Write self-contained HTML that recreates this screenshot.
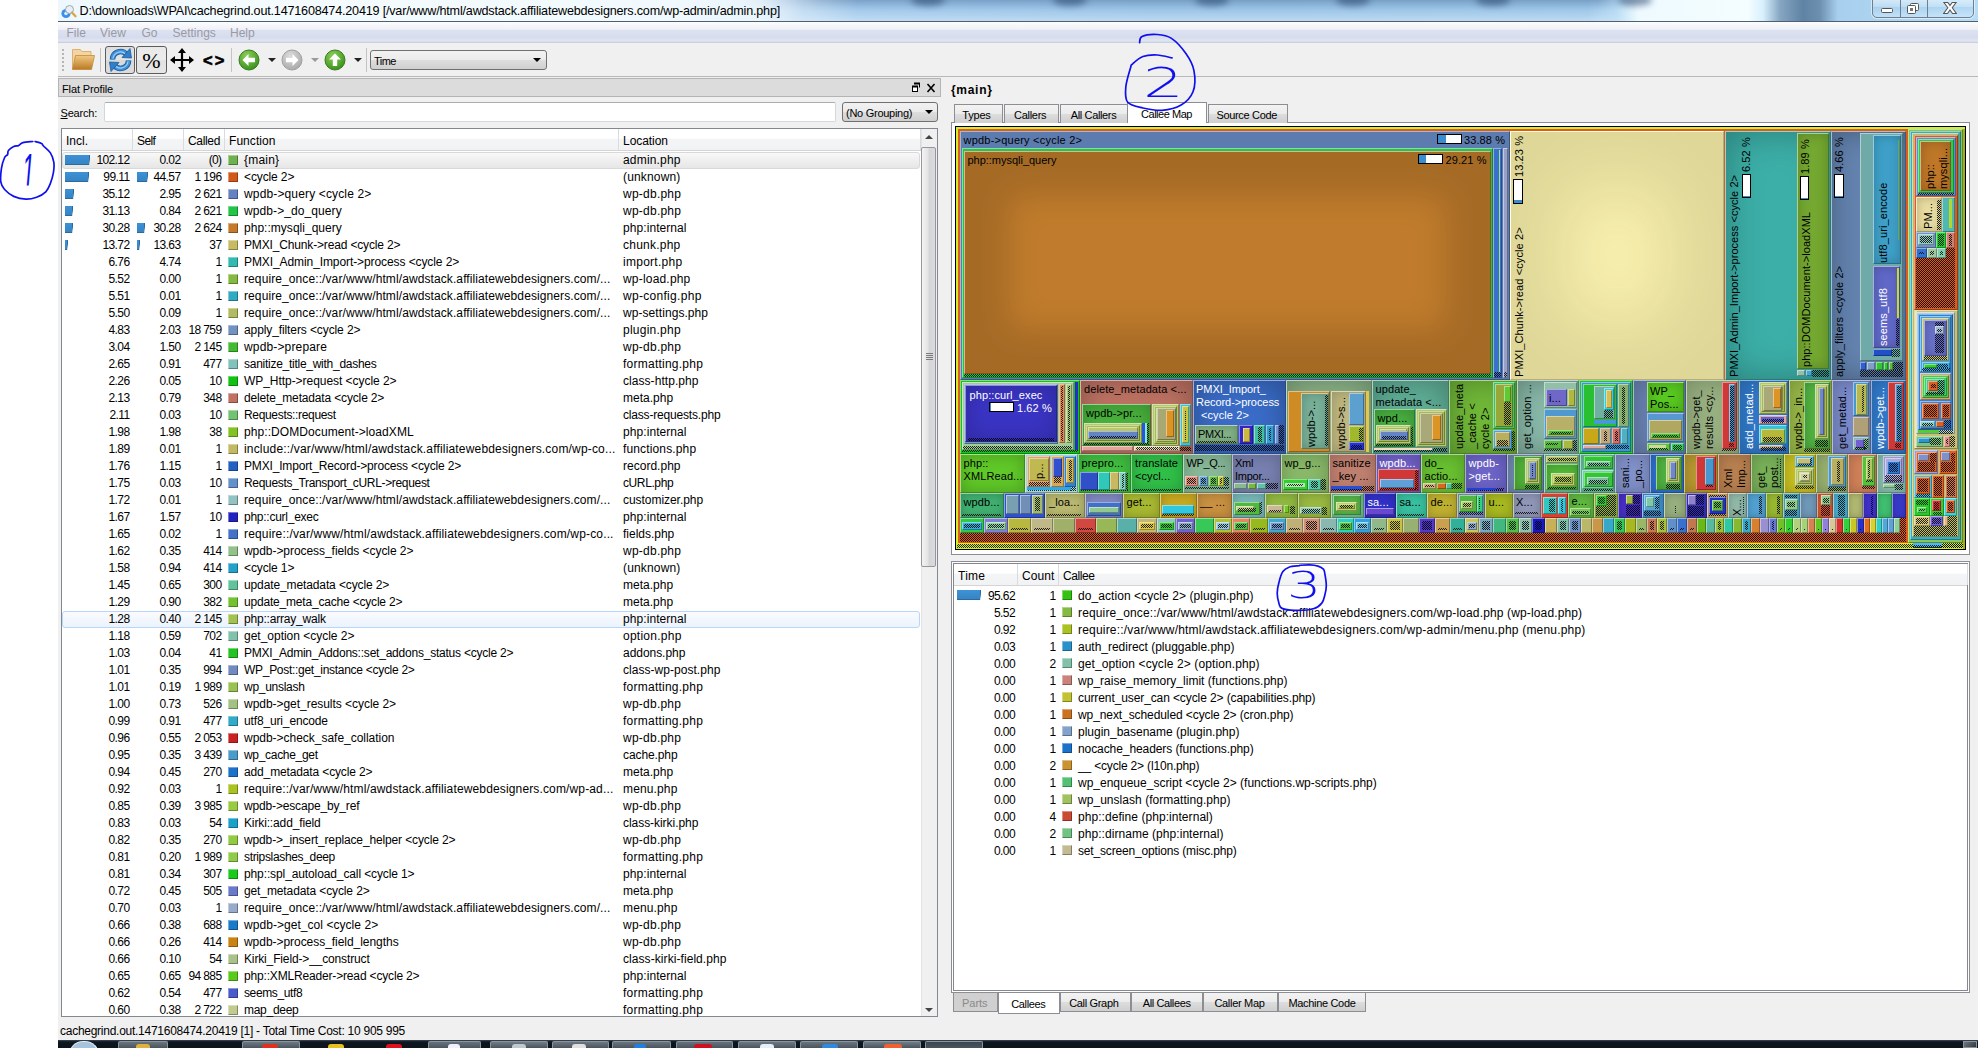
<!DOCTYPE html><html><head><meta charset="utf-8"><title>QCachegrind</title><style>
*{box-sizing:border-box;margin:0;padding:0}
html,body{width:1978px;height:1048px;overflow:hidden;background:#fff}
body{position:relative;font-family:"Liberation Sans",sans-serif;font-size:12px;color:#000}
.a{position:absolute}
.t{position:absolute;white-space:nowrap;line-height:17px;height:17px}
.r{text-align:right}
#win{position:absolute;left:58px;top:0;width:1920px;height:1040px;background:#f0f0f0}
.sq{position:absolute;width:10px;height:10px}
.bar{position:absolute;height:10px;background:linear-gradient(#3d92d6,#3684c4);border-right:1px solid #2a6a9c;border-bottom:1px solid #2a6a9c;clip-path:polygon(0 0,100% 0,100% 40%,calc(100% - 1px) 100%,0 100%)}
.lt{font-size:12px;letter-spacing:-0.6px}
.rw{margin-top:1px}
.tab{position:absolute;font-size:11px;text-align:center;border:1px solid #8c8e94;border-bottom:none;background:linear-gradient(#f3f3f3 0%,#ebebeb 50%,#dddddd 51%,#cfcfcf 100%);line-height:17px;white-space:nowrap}
.tabs{background:#fff;border-color:#8c8e94}
.btab{position:absolute;font-size:11px;text-align:center;border:1px solid #8c8e94;border-top:none;background:linear-gradient(#f3f3f3 0%,#ebebeb 50%,#dddddd 51%,#cfcfcf 100%);line-height:17px;white-space:nowrap}
.hd{position:absolute;top:0;height:21px;border-right:1px solid #d9dbe0;background:linear-gradient(#ffffff,#ffffff 45%,#f4f5f7 46%,#f1f2f4);line-height:24px;padding-left:4px;font-size:12px;overflow:hidden}
.hx{background:repeating-conic-gradient(rgba(0,0,0,.82) 0 25%,rgba(0,0,0,0) 0 50%) 0 0/2px 2px}
.tl{position:absolute;white-space:nowrap;font-size:11px;line-height:13px}
.vt{position:absolute;white-space:nowrap;font-size:11px;line-height:13px;transform-origin:0 0;transform:rotate(-90deg)}
</style></head><body>
<div id="win">
<div class="a" style="left:0;top:0;width:1920px;height:21px;background:linear-gradient(90deg,#d2ecfa 0px,#e2f5fd 200px,#dcf1fc 600px,#c8e4f7 700px,#a8ceee 745px,#a0c8ea 1100px,#a2caea 1530px,#b8dcf4 1558px,#eefaff 1580px,#f4fdff 1690px,#d8f0fc 1705px,#86a6c2 1722px,#5f83a4 1745px,#6d90b0 1762px,#a8d0ee 1780px,#b6dcf6 1920px)"></div>
<div class="a" style="left:680px;top:0;width:900px;height:21px;background:linear-gradient(180deg,rgba(70,110,155,.45) 0,rgba(90,130,175,.18) 7px,rgba(255,255,255,0) 11px,rgba(255,255,255,.28) 20px);-webkit-mask-image:linear-gradient(90deg,transparent,#000 80px,#000 860px,transparent);mask-image:linear-gradient(90deg,transparent,#000 80px,#000 860px,transparent)"></div>
<div class="a" style="left:0;top:0;width:820px;height:21px;background:linear-gradient(90deg,rgba(255,255,255,.6) 0,rgba(255,255,255,.6) 700px,rgba(255,255,255,0) 800px)"></div>
<div class="a" style="left:853px;top:-6px;width:34px;height:12px;border-radius:50%;background:rgba(40,70,110,.55);filter:blur(3px)"></div>
<div class="a" style="left:995px;top:-6px;width:34px;height:12px;border-radius:50%;background:rgba(40,70,110,.55);filter:blur(3px)"></div>
<div class="a" style="left:1137px;top:-6px;width:34px;height:12px;border-radius:50%;background:rgba(40,70,110,.55);filter:blur(3px)"></div>
<div class="a" style="left:1278px;top:-6px;width:34px;height:12px;border-radius:50%;background:rgba(40,70,110,.55);filter:blur(3px)"></div>
<div class="a" style="left:1418px;top:-6px;width:34px;height:12px;border-radius:50%;background:rgba(40,70,110,.55);filter:blur(3px)"></div>
<div class="a" style="left:1560px;top:-6px;width:34px;height:12px;border-radius:50%;background:rgba(40,70,110,.55);filter:blur(3px)"></div>
<div class="a" style="left:0;top:21px;width:1920px;height:1px;background:#4f5f70"></div>
<svg class="a" style="left:2px;top:3px" width="17" height="17" viewBox="0 0 17 17"><circle cx="6" cy="10.5" r="4.6" fill="#3b8fe8"/><circle cx="6" cy="10.5" r="1.8" fill="#d6ecff"/><circle cx="9.5" cy="6.5" r="4" fill="#e8eef4" stroke="#9aa8b8" stroke-width="1"/><path d="M12 9.5l3.5 3.8" stroke="#d9a441" stroke-width="2.2" stroke-linecap="round"/></svg>
<div class="t" id="title" style="left:21.500px;top:3px;font-size:12.600px;letter-spacing:-0.192px;">D:\downloads\WPAI\cachegrind.out.1471608474.20419 [/var/www/html/awdstack.affiliatewebdesigners.com/wp-admin/admin.php]</div>
<div class="a" style="left:1814px;top:-3px;width:102px;height:21px;border:1px solid #6e7f90;border-radius:0 0 5px 5px;background:linear-gradient(rgba(255,255,255,.55),rgba(255,255,255,.2) 45%,rgba(160,200,230,.25) 50%,rgba(220,240,255,.45));box-shadow:0 0 0 1px rgba(255,255,255,.5)"></div>
<div class="a" style="left:1842px;top:0;width:1px;height:17px;background:#6e7f90"></div><div class="a" style="left:1869px;top:0;width:1px;height:17px;background:#6e7f90"></div>
<svg class="a" style="left:1814px;top:0" width="102" height="18" viewBox="0 0 102 18"><rect x="9.500" y="8.500" width="11" height="4" rx="1" fill="#fff" stroke="#555" stroke-width="1"/><rect x="38.500" y="3.500" width="8" height="7" rx="1" fill="#fff" stroke="#555" stroke-width="1"/><rect x="35.500" y="5.500" width="8" height="8" rx="1" fill="#fff" stroke="#555" stroke-width="1"/><rect x="38" y="8" width="3" height="3" fill="#777"/></svg>
<div class="t" style="left:1887px;top:-1px;font-size:15px;font-weight:bold;line-height:18px;height:18px;color:#fff;-webkit-text-stroke:2px #555;paint-order:stroke fill;transform:scaleX(1.1)">X</div>
<div class="a" style="left:0;top:22px;width:1920px;height:21px;background:linear-gradient(#fdfdfe 0,#eef1f8 35%,#dde2f0 40%,#d6dcee 75%,#e2e6f2 90%,#c4c9da 100%)"></div>
<div class="t" style="left:8.5px;top:25px;color:#9a9aa2;font-size:12px">File</div>
<div class="t" style="left:42px;top:25px;color:#9a9aa2;font-size:12px">View</div>
<div class="t" style="left:83.5px;top:25px;color:#9a9aa2;font-size:12px">Go</div>
<div class="t" style="left:114.5px;top:25px;color:#9a9aa2;font-size:12px">Settings</div>
<div class="t" style="left:172px;top:25px;color:#9a9aa2;font-size:12px">Help</div>
<div class="a" style="left:0;top:43px;width:1920px;height:33px;background:#f0f0f0"></div>
<div class="a" style="left:0;top:76px;width:1920px;height:1px;background:#b8b8b8"></div>
<div class="a" style="left:4px;top:47px;width:2px;height:26px;background:repeating-linear-gradient(#f0f0f0 0,#f0f0f0 2px,#b4b4b4 2px,#b4b4b4 4px)"></div>
<svg class="a" style="left:12px;top:46px" width="26" height="26" viewBox="0 0 26 26"><defs><linearGradient id="fg" x1="0" y1="0" x2="0" y2="1"><stop offset="0" stop-color="#f3c982"/><stop offset="1" stop-color="#b97a24"/></linearGradient></defs><path d="M2.500 23V3.500h8l1.500 2h9v5" fill="#f2d5a2" stroke="#dcb172" stroke-width="1"/><path d="M2.500 23.500L5.500 9.500H24.500L21.500 23.500z" fill="url(#fg)" stroke="#c08a3a" stroke-width=".8"/></svg>
<div class="a" style="left:42px;top:48px;width:1px;height:24px;background:#c4c4c4"></div>
<div class="a" style="left:47px;top:46px;width:30px;height:28px;border:1px solid #5c5c5c;border-radius:3px;background:linear-gradient(#dedede,#e4e4e4 50%,#d9d9d9 51%,#dcdcdc)"></div>
<svg class="a" style="left:50px;top:47px" width="25" height="26" viewBox="0 0 25 26"><g fill="none" stroke-linecap="butt"><path d="M4.500 12.500a8 8 0 0 1 14-5.200" stroke="#1d5c9a" stroke-width="5.600"/><path d="M20.500 13.500a8 8 0 0 1-14 5.200" stroke="#1d5c9a" stroke-width="5.600"/><path d="M4.500 12.500a8 8 0 0 1 14-5.200" stroke="#3f92dc" stroke-width="3.800"/><path d="M20.500 13.500a8 8 0 0 1-14 5.200" stroke="#3f92dc" stroke-width="3.800"/><path d="M5 11.500a7.500 7.500 0 0 1 12.500-4.500" stroke="#9ccff6" stroke-width="1.200"/><path d="M20 14.500a7.500 7.500 0 0 1-12.500 4.500" stroke="#9ccff6" stroke-width="1.200"/></g><path d="M14 10.500l9.500 0.500-1.500-9.500z" fill="#2f7fca" stroke="#1d5c9a" stroke-width=".8"/><path d="M11 15.500l-9.500-0.500 1.500 9.500z" fill="#2f7fca" stroke="#1d5c9a" stroke-width=".8"/></svg>
<div class="a" style="left:78px;top:46px;width:31px;height:28px;border:1px solid #5c5c5c;border-radius:3px;background:linear-gradient(#e9e9e9,#ececec 50%,#e2e2e2 51%,#e6e6e6)"></div>
<div class="t" style="left:78px;top:51px;width:31px;text-align:center;font-size:22px;line-height:20px;height:20px;font-family:'Liberation Serif',serif">%</div>
<svg class="a" style="left:112px;top:48px" width="24" height="24" viewBox="0 0 24 24"><path d="M12 2v20M2 12h20" stroke="#000" stroke-width="2.200"/><path d="M12 0l4 5h-8zM12 24l4-5h-8zM0 12l5-4v8zM24 12l-5-4v8z" fill="#000"/></svg>
<div class="t" id="ltgt" style="left:145px;top:49.500px;font-size:16.500px;font-weight:bold;line-height:20px;height:20px;letter-spacing:2.200px;-webkit-text-stroke:0.600px #000">&lt;&gt;</div>
<div class="a" style="left:173px;top:48px;width:1px;height:24px;background:#c4c4c4"></div>
<svg class="a" style="left:180px;top:49px" width="22" height="22" viewBox="0 0 22 22"><defs><radialGradient id="g191" cx=".4" cy=".3" r=".8"><stop offset="0" stop-color="#8fd05a"/><stop offset="1" stop-color="#2f8a14"/></radialGradient></defs><circle cx="11" cy="11" r="10" fill="url(#g191)" stroke="#3c7a22" stroke-width="1"/><g transform="rotate(0 11 11)"><path d="M4.500 11l6-6v3.800h6.500v4.400h-6.500v3.800z" fill="#fff"/></g></svg>
<svg class="a" style="left:223px;top:49px" width="22" height="22" viewBox="0 0 22 22"><defs><radialGradient id="g234" cx=".4" cy=".3" r=".8"><stop offset="0" stop-color="#dcdcdc"/><stop offset="1" stop-color="#a4a4a4"/></radialGradient></defs><circle cx="11" cy="11" r="10" fill="url(#g234)" stroke="#a0a0a0" stroke-width="1"/><g transform="rotate(180 11 11)"><path d="M4.500 11l6-6v3.800h6.500v4.400h-6.500v3.800z" fill="#fff"/></g></svg>
<svg class="a" style="left:266px;top:49px" width="22" height="22" viewBox="0 0 22 22"><defs><radialGradient id="g277" cx=".4" cy=".3" r=".8"><stop offset="0" stop-color="#8fd05a"/><stop offset="1" stop-color="#2f8a14"/></radialGradient></defs><circle cx="11" cy="11" r="10" fill="url(#g277)" stroke="#3c7a22" stroke-width="1"/><g transform="rotate(90 11 11)"><path d="M4.500 11l6-6v3.800h6.500v4.400h-6.500v3.800z" fill="#fff"/></g></svg>
<div class="a" style="left:210px;top:58px;width:0;height:0;border-left:4px solid transparent;border-right:4px solid transparent;border-top:4px solid #222"></div>
<div class="a" style="left:253px;top:58px;width:0;height:0;border-left:4px solid transparent;border-right:4px solid transparent;border-top:4px solid #9a9a9a"></div>
<div class="a" style="left:296px;top:58px;width:0;height:0;border-left:4px solid transparent;border-right:4px solid transparent;border-top:4px solid #222"></div>
<div class="a" style="left:308px;top:48px;width:1px;height:24px;background:#c4c4c4"></div>
<div class="a" style="left:312px;top:50px;width:177px;height:20px;border:1px solid #707070;border-radius:3px;background:linear-gradient(#f2f2f2,#ebebeb 48%,#dddddd 52%,#cfcfcf)"></div>
<div class="t" style="left:316px;top:52.500px;font-size:11px;letter-spacing:-0.562px;">Time</div>
<div class="a" style="left:475px;top:58px;width:0;height:0;border-left:4px solid transparent;border-right:4px solid transparent;border-top:4px solid #000"></div>
<div class="a" style="left:0;top:78px;width:883px;height:19px;background:#dcdcdc;border:1px solid #b4b4b4"></div>
<div class="t" style="left:4px;top:80.500px;font-size:11px;letter-spacing:-0.132px;">Flat Profile</div>
<svg class="a" style="left:853px;top:82px" width="26" height="12" viewBox="0 0 26 12"><path d="M3.500 1.500h5v4" fill="none" stroke="#000" stroke-width="1"/><path d="M3 1.500h6" stroke="#000" stroke-width="2"/><rect x="1.500" y="4.500" width="5" height="5" fill="#fff" stroke="#000" stroke-width="1"/><path d="M1 4.500h6" stroke="#000" stroke-width="2"/><path d="M16.500 2l7 8M23.500 2l-7 8" stroke="#000" stroke-width="1.600"/></svg>
<div class="t" style="left:2.500px;top:104.500px;font-size:11px;letter-spacing:-0.203px;"><span style="text-decoration:underline">S</span>earch:</div>
<div class="a" style="left:46px;top:102px;width:732px;height:20px;background:#fff;border:1px solid #d4d8de;border-top-color:#abadb3;border-radius:2px"></div>
<div class="a" style="left:784px;top:102px;width:96px;height:20px;border:1px solid #707070;border-radius:3px;background:linear-gradient(#f2f2f2,#ebebeb 48%,#dddddd 52%,#cfcfcf)"></div>
<div class="t" style="left:788px;top:104.500px;font-size:11px;letter-spacing:-0.269px;">(No Grouping)</div>
<div class="a" style="left:867px;top:110px;width:0;height:0;border-left:4px solid transparent;border-right:4px solid transparent;border-top:4px solid #000"></div>
<div class="a" style="left:3px;top:128px;width:877px;height:889px;background:#fff;border:1px solid #828790"></div>
<div class="a" style="left:4px;top:129px;width:859px;height:22px;border-bottom:1px solid #d5d5d5;background:#fff"></div>
<div class="hd" style="left:4px;top:129px;width:71px;letter-spacing:0.037px;">Incl.</div>
<div class="hd" style="left:75px;top:129px;width:51px;letter-spacing:-0.622px;">Self</div>
<div class="hd" style="left:126px;top:129px;width:41px;letter-spacing:-0.339px;">Called</div>
<div class="hd" style="left:167px;top:129px;width:394px;letter-spacing:0.059px;">Function</div>
<div class="hd" style="left:561px;top:129px;width:302px;letter-spacing:-0.047px;">Location</div>
<div class="a" style="left:863px;top:129px;width:16px;height:887px;background:#f0f0f0;border-left:1px solid #e3e3e3"></div>
<div class="a" style="left:863px;top:147px;width:15px;height:420px;border:1px solid #979797;border-radius:2px;background:linear-gradient(90deg,#f4f4f4,#e4e4e6 45%,#d4d5d8 55%,#dadbde)"></div>
<div class="a" style="left:868px;top:353px;width:7px;height:7px;background:repeating-linear-gradient(#7a7a7a 0,#7a7a7a 1px,transparent 1px,transparent 2px)"></div>
<div class="a" style="left:867px;top:135px;width:0;height:0;border-left:4px solid transparent;border-right:4px solid transparent;border-bottom:4px solid #444"></div>
<div class="a" style="left:867px;top:1008px;width:0;height:0;border-left:4px solid transparent;border-right:4px solid transparent;border-top:4px solid #444"></div>
<div class="a" style="left:4px;top:152px;width:858px;height:17px;border:1px solid #d9d9d9;border-radius:3px;background:linear-gradient(#f8f8f8,#e6e6e6)"></div>
<div class="bar" style="left:7px;top:155px;width:25px"></div>
<div class="t r lt rw" style="left:30px;top:151px;width:41.500px">102.12</div>
<div class="t r lt rw" style="left:90px;top:151px;width:32.500px">0.02</div>
<div class="t r lt rw" style="left:125px;top:151px;width:38.500px">(0)</div>
<div class="sq" style="left:170px;top:155px;background:#6fb04f;box-shadow:inset 1px 1px 0 rgba(255,255,255,.38),inset -1px -1px 0 rgba(0,0,0,.32)"></div>
<div class="t fn rw" style="left:186px;top:151px;letter-spacing:0.211px;">{main}</div>
<div class="t rw" style="left:565px;top:151px;letter-spacing:0.184px;">admin.php</div>
<div class="bar" style="left:7px;top:172px;width:24px"></div>
<div class="bar" style="left:79px;top:172px;width:11px"></div>
<div class="t r lt rw" style="left:30px;top:168px;width:41.500px">99.11</div>
<div class="t r lt rw" style="left:90px;top:168px;width:32.500px">44.57</div>
<div class="t r lt rw" style="left:125px;top:168px;width:38.500px">1 196</div>
<div class="sq" style="left:170px;top:172px;background:#d4581a;box-shadow:inset 1px 1px 0 rgba(255,255,255,.38),inset -1px -1px 0 rgba(0,0,0,.32)"></div>
<div class="t fn rw" style="left:186px;top:168px;letter-spacing:-0.119px;">&lt;cycle 2&gt;</div>
<div class="t rw" style="left:565px;top:168px;letter-spacing:0.163px;">(unknown)</div>
<div class="bar" style="left:7px;top:189px;width:9px"></div>
<div class="t r lt rw" style="left:30px;top:185px;width:41.500px">35.12</div>
<div class="t r lt rw" style="left:90px;top:185px;width:32.500px">2.95</div>
<div class="t r lt rw" style="left:125px;top:185px;width:38.500px">2 621</div>
<div class="sq" style="left:170px;top:189px;background:#6482c2;box-shadow:inset 1px 1px 0 rgba(255,255,255,.38),inset -1px -1px 0 rgba(0,0,0,.32)"></div>
<div class="t fn rw" style="left:186px;top:185px;letter-spacing:0.143px;">wpdb-&gt;query &lt;cycle 2&gt;</div>
<div class="t rw" style="left:565px;top:185px;letter-spacing:0.239px;">wp-db.php</div>
<div class="bar" style="left:7px;top:206px;width:8px"></div>
<div class="t r lt rw" style="left:30px;top:202px;width:41.500px">31.13</div>
<div class="t r lt rw" style="left:90px;top:202px;width:32.500px">0.84</div>
<div class="t r lt rw" style="left:125px;top:202px;width:38.500px">2 621</div>
<div class="sq" style="left:170px;top:206px;background:#22c446;box-shadow:inset 1px 1px 0 rgba(255,255,255,.38),inset -1px -1px 0 rgba(0,0,0,.32)"></div>
<div class="t fn rw" style="left:186px;top:202px;letter-spacing:0.093px;">wpdb-&gt;_do_query</div>
<div class="t rw" style="left:565px;top:202px;letter-spacing:0.239px;">wp-db.php</div>
<div class="bar" style="left:7px;top:223px;width:8px"></div>
<div class="bar" style="left:79px;top:223px;width:8px"></div>
<div class="t r lt rw" style="left:30px;top:219px;width:41.500px">30.28</div>
<div class="t r lt rw" style="left:90px;top:219px;width:32.500px">30.28</div>
<div class="t r lt rw" style="left:125px;top:219px;width:38.500px">2 624</div>
<div class="sq" style="left:170px;top:223px;background:#c47a2a;box-shadow:inset 1px 1px 0 rgba(255,255,255,.38),inset -1px -1px 0 rgba(0,0,0,.32)"></div>
<div class="t fn rw" style="left:186px;top:219px;letter-spacing:0.024px;">php::mysqli_query</div>
<div class="t rw" style="left:565px;top:219px;letter-spacing:0.073px;">php:internal</div>
<div class="bar" style="left:7px;top:240px;width:3px"></div>
<div class="bar" style="left:79px;top:240px;width:3px"></div>
<div class="t r lt rw" style="left:30px;top:236px;width:41.500px">13.72</div>
<div class="t r lt rw" style="left:90px;top:236px;width:32.500px">13.63</div>
<div class="t r lt rw" style="left:125px;top:236px;width:38.500px">37</div>
<div class="sq" style="left:170px;top:240px;background:#c8ba62;box-shadow:inset 1px 1px 0 rgba(255,255,255,.38),inset -1px -1px 0 rgba(0,0,0,.32)"></div>
<div class="t fn rw" style="left:186px;top:236px;letter-spacing:-0.155px;">PMXI_Chunk-&gt;read &lt;cycle 2&gt;</div>
<div class="t rw" style="left:565px;top:236px;letter-spacing:0.234px;">chunk.php</div>
<div class="t r lt rw" style="left:30px;top:253px;width:41.500px">6.76</div>
<div class="t r lt rw" style="left:90px;top:253px;width:32.500px">4.74</div>
<div class="t r lt rw" style="left:125px;top:253px;width:38.500px">1</div>
<div class="sq" style="left:170px;top:257px;background:#32bab2;box-shadow:inset 1px 1px 0 rgba(255,255,255,.38),inset -1px -1px 0 rgba(0,0,0,.32)"></div>
<div class="t fn rw" style="left:186px;top:253px;letter-spacing:-0.090px;">PMXI_Admin_Import-&gt;process &lt;cycle 2&gt;</div>
<div class="t rw" style="left:565px;top:253px;letter-spacing:0.270px;">import.php</div>
<div class="t r lt rw" style="left:30px;top:270px;width:41.500px">5.52</div>
<div class="t r lt rw" style="left:90px;top:270px;width:32.500px">0.00</div>
<div class="t r lt rw" style="left:125px;top:270px;width:38.500px">1</div>
<div class="sq" style="left:170px;top:274px;background:#84ba42;box-shadow:inset 1px 1px 0 rgba(255,255,255,.38),inset -1px -1px 0 rgba(0,0,0,.32)"></div>
<div class="t fn rw" style="left:186px;top:270px;letter-spacing:0.098px;">require_once::/var/www/html/awdstack.affiliatewebdesigners.com/...</div>
<div class="t rw" style="left:565px;top:270px;letter-spacing:0.192px;">wp-load.php</div>
<div class="t r lt rw" style="left:30px;top:287px;width:41.500px">5.51</div>
<div class="t r lt rw" style="left:90px;top:287px;width:32.500px">0.01</div>
<div class="t r lt rw" style="left:125px;top:287px;width:38.500px">1</div>
<div class="sq" style="left:170px;top:291px;background:#32aac2;box-shadow:inset 1px 1px 0 rgba(255,255,255,.38),inset -1px -1px 0 rgba(0,0,0,.32)"></div>
<div class="t fn rw" style="left:186px;top:287px;letter-spacing:0.098px;">require_once::/var/www/html/awdstack.affiliatewebdesigners.com/...</div>
<div class="t rw" style="left:565px;top:287px;letter-spacing:0.299px;">wp-config.php</div>
<div class="t r lt rw" style="left:30px;top:304px;width:41.500px">5.50</div>
<div class="t r lt rw" style="left:90px;top:304px;width:32.500px">0.09</div>
<div class="t r lt rw" style="left:125px;top:304px;width:38.500px">1</div>
<div class="sq" style="left:170px;top:308px;background:#b2ba62;box-shadow:inset 1px 1px 0 rgba(255,255,255,.38),inset -1px -1px 0 rgba(0,0,0,.32)"></div>
<div class="t fn rw" style="left:186px;top:304px;letter-spacing:0.098px;">require_once::/var/www/html/awdstack.affiliatewebdesigners.com/...</div>
<div class="t rw" style="left:565px;top:304px;letter-spacing:0.070px;">wp-settings.php</div>
<div class="t r lt rw" style="left:30px;top:321px;width:41.500px">4.83</div>
<div class="t r lt rw" style="left:90px;top:321px;width:32.500px">2.03</div>
<div class="t r lt rw" style="left:125px;top:321px;width:38.500px">18 759</div>
<div class="sq" style="left:170px;top:325px;background:#7292c2;box-shadow:inset 1px 1px 0 rgba(255,255,255,.38),inset -1px -1px 0 rgba(0,0,0,.32)"></div>
<div class="t fn rw" style="left:186px;top:321px;letter-spacing:-0.101px;">apply_filters &lt;cycle 2&gt;</div>
<div class="t rw" style="left:565px;top:321px;letter-spacing:0.251px;">plugin.php</div>
<div class="t r lt rw" style="left:30px;top:338px;width:41.500px">3.04</div>
<div class="t r lt rw" style="left:90px;top:338px;width:32.500px">1.50</div>
<div class="t r lt rw" style="left:125px;top:338px;width:38.500px">2 145</div>
<div class="sq" style="left:170px;top:342px;background:#42ba32;box-shadow:inset 1px 1px 0 rgba(255,255,255,.38),inset -1px -1px 0 rgba(0,0,0,.32)"></div>
<div class="t fn rw" style="left:186px;top:338px;letter-spacing:0.149px;">wpdb-&gt;prepare</div>
<div class="t rw" style="left:565px;top:338px;letter-spacing:0.239px;">wp-db.php</div>
<div class="t r lt rw" style="left:30px;top:355px;width:41.500px">2.65</div>
<div class="t r lt rw" style="left:90px;top:355px;width:32.500px">0.91</div>
<div class="t r lt rw" style="left:125px;top:355px;width:38.500px">477</div>
<div class="sq" style="left:170px;top:359px;background:#82c2ba;box-shadow:inset 1px 1px 0 rgba(255,255,255,.38),inset -1px -1px 0 rgba(0,0,0,.32)"></div>
<div class="t fn rw" style="left:186px;top:355px;letter-spacing:-0.266px;">sanitize_title_with_dashes</div>
<div class="t rw" style="left:565px;top:355px;letter-spacing:0.242px;">formatting.php</div>
<div class="t r lt rw" style="left:30px;top:372px;width:41.500px">2.26</div>
<div class="t r lt rw" style="left:90px;top:372px;width:32.500px">0.05</div>
<div class="t r lt rw" style="left:125px;top:372px;width:38.500px">10</div>
<div class="sq" style="left:170px;top:376px;background:#12c212;box-shadow:inset 1px 1px 0 rgba(255,255,255,.38),inset -1px -1px 0 rgba(0,0,0,.32)"></div>
<div class="t fn rw" style="left:186px;top:372px;letter-spacing:-0.048px;">WP_Http-&gt;request &lt;cycle 2&gt;</div>
<div class="t rw" style="left:565px;top:372px;letter-spacing:0.056px;">class-http.php</div>
<div class="t r lt rw" style="left:30px;top:389px;width:41.500px">2.13</div>
<div class="t r lt rw" style="left:90px;top:389px;width:32.500px">0.79</div>
<div class="t r lt rw" style="left:125px;top:389px;width:38.500px">348</div>
<div class="sq" style="left:170px;top:393px;background:#c27262;box-shadow:inset 1px 1px 0 rgba(255,255,255,.38),inset -1px -1px 0 rgba(0,0,0,.32)"></div>
<div class="t fn rw" style="left:186px;top:389px;letter-spacing:-0.156px;">delete_metadata &lt;cycle 2&gt;</div>
<div class="t rw" style="left:565px;top:389px;letter-spacing:0.019px;">meta.php</div>
<div class="t r lt rw" style="left:30px;top:406px;width:41.500px">2.11</div>
<div class="t r lt rw" style="left:90px;top:406px;width:32.500px">0.03</div>
<div class="t r lt rw" style="left:125px;top:406px;width:38.500px">10</div>
<div class="sq" style="left:170px;top:410px;background:#72c272;box-shadow:inset 1px 1px 0 rgba(255,255,255,.38),inset -1px -1px 0 rgba(0,0,0,.32)"></div>
<div class="t fn rw" style="left:186px;top:406px;letter-spacing:-0.329px;">Requests::request</div>
<div class="t rw" style="left:565px;top:406px;letter-spacing:-0.184px;">class-requests.php</div>
<div class="t r lt rw" style="left:30px;top:423px;width:41.500px">1.98</div>
<div class="t r lt rw" style="left:90px;top:423px;width:32.500px">1.98</div>
<div class="t r lt rw" style="left:125px;top:423px;width:38.500px">38</div>
<div class="sq" style="left:170px;top:427px;background:#82c222;box-shadow:inset 1px 1px 0 rgba(255,255,255,.38),inset -1px -1px 0 rgba(0,0,0,.32)"></div>
<div class="t fn rw" style="left:186px;top:423px;letter-spacing:0.082px;">php::DOMDocument-&gt;loadXML</div>
<div class="t rw" style="left:565px;top:423px;letter-spacing:0.073px;">php:internal</div>
<div class="t r lt rw" style="left:30px;top:440px;width:41.500px">1.89</div>
<div class="t r lt rw" style="left:90px;top:440px;width:32.500px">0.01</div>
<div class="t r lt rw" style="left:125px;top:440px;width:38.500px">1</div>
<div class="sq" style="left:170px;top:444px;background:#c2ba62;box-shadow:inset 1px 1px 0 rgba(255,255,255,.38),inset -1px -1px 0 rgba(0,0,0,.32)"></div>
<div class="t fn rw" style="left:186px;top:440px;letter-spacing:0.175px;">include::/var/www/html/awdstack.affiliatewebdesigners.com/wp-co...</div>
<div class="t rw" style="left:565px;top:440px;letter-spacing:0.139px;">functions.php</div>
<div class="t r lt rw" style="left:30px;top:457px;width:41.500px">1.76</div>
<div class="t r lt rw" style="left:90px;top:457px;width:32.500px">1.15</div>
<div class="t r lt rw" style="left:125px;top:457px;width:38.500px">1</div>
<div class="sq" style="left:170px;top:461px;background:#2262c2;box-shadow:inset 1px 1px 0 rgba(255,255,255,.38),inset -1px -1px 0 rgba(0,0,0,.32)"></div>
<div class="t fn rw" style="left:186px;top:457px;letter-spacing:-0.165px;">PMXI_Import_Record-&gt;process &lt;cycle 2&gt;</div>
<div class="t rw" style="left:565px;top:457px;letter-spacing:0.013px;">record.php</div>
<div class="t r lt rw" style="left:30px;top:474px;width:41.500px">1.75</div>
<div class="t r lt rw" style="left:90px;top:474px;width:32.500px">0.03</div>
<div class="t r lt rw" style="left:125px;top:474px;width:38.500px">10</div>
<div class="sq" style="left:170px;top:478px;background:#6292ca;box-shadow:inset 1px 1px 0 rgba(255,255,255,.38),inset -1px -1px 0 rgba(0,0,0,.32)"></div>
<div class="t fn rw" style="left:186px;top:474px;letter-spacing:-0.325px;">Requests_Transport_cURL-&gt;request</div>
<div class="t rw" style="left:565px;top:474px;letter-spacing:-0.397px;">cURL.php</div>
<div class="t r lt rw" style="left:30px;top:491px;width:41.500px">1.72</div>
<div class="t r lt rw" style="left:90px;top:491px;width:32.500px">0.01</div>
<div class="t r lt rw" style="left:125px;top:491px;width:38.500px">1</div>
<div class="sq" style="left:170px;top:495px;background:#92c2c2;box-shadow:inset 1px 1px 0 rgba(255,255,255,.38),inset -1px -1px 0 rgba(0,0,0,.32)"></div>
<div class="t fn rw" style="left:186px;top:491px;letter-spacing:0.098px;">require_once::/var/www/html/awdstack.affiliatewebdesigners.com/...</div>
<div class="t rw" style="left:565px;top:491px;letter-spacing:-0.044px;">customizer.php</div>
<div class="t r lt rw" style="left:30px;top:508px;width:41.500px">1.67</div>
<div class="t r lt rw" style="left:90px;top:508px;width:32.500px">1.57</div>
<div class="t r lt rw" style="left:125px;top:508px;width:38.500px">10</div>
<div class="sq" style="left:170px;top:512px;background:#2222c2;box-shadow:inset 1px 1px 0 rgba(255,255,255,.38),inset -1px -1px 0 rgba(0,0,0,.32)"></div>
<div class="t fn rw" style="left:186px;top:508px;letter-spacing:-0.253px;">php::curl_exec</div>
<div class="t rw" style="left:565px;top:508px;letter-spacing:0.073px;">php:internal</div>
<div class="t r lt rw" style="left:30px;top:525px;width:41.500px">1.65</div>
<div class="t r lt rw" style="left:90px;top:525px;width:32.500px">0.02</div>
<div class="t r lt rw" style="left:125px;top:525px;width:38.500px">1</div>
<div class="sq" style="left:170px;top:529px;background:#4272ca;box-shadow:inset 1px 1px 0 rgba(255,255,255,.38),inset -1px -1px 0 rgba(0,0,0,.32)"></div>
<div class="t fn rw" style="left:186px;top:525px;letter-spacing:0.157px;">require::/var/www/html/awdstack.affiliatewebdesigners.com/wp-co...</div>
<div class="t rw" style="left:565px;top:525px;letter-spacing:-0.008px;">fields.php</div>
<div class="t r lt rw" style="left:30px;top:542px;width:41.500px">1.62</div>
<div class="t r lt rw" style="left:90px;top:542px;width:32.500px">0.35</div>
<div class="t r lt rw" style="left:125px;top:542px;width:38.500px">414</div>
<div class="sq" style="left:170px;top:546px;background:#92c28a;box-shadow:inset 1px 1px 0 rgba(255,255,255,.38),inset -1px -1px 0 rgba(0,0,0,.32)"></div>
<div class="t fn rw" style="left:186px;top:542px;letter-spacing:-0.056px;">wpdb-&gt;process_fields &lt;cycle 2&gt;</div>
<div class="t rw" style="left:565px;top:542px;letter-spacing:0.239px;">wp-db.php</div>
<div class="t r lt rw" style="left:30px;top:559px;width:41.500px">1.58</div>
<div class="t r lt rw" style="left:90px;top:559px;width:32.500px">0.94</div>
<div class="t r lt rw" style="left:125px;top:559px;width:38.500px">414</div>
<div class="sq" style="left:170px;top:563px;background:#22a2ca;box-shadow:inset 1px 1px 0 rgba(255,255,255,.38),inset -1px -1px 0 rgba(0,0,0,.32)"></div>
<div class="t fn rw" style="left:186px;top:559px;letter-spacing:-0.119px;">&lt;cycle 1&gt;</div>
<div class="t rw" style="left:565px;top:559px;letter-spacing:0.163px;">(unknown)</div>
<div class="t r lt rw" style="left:30px;top:576px;width:41.500px">1.45</div>
<div class="t r lt rw" style="left:90px;top:576px;width:32.500px">0.65</div>
<div class="t r lt rw" style="left:125px;top:576px;width:38.500px">300</div>
<div class="sq" style="left:170px;top:580px;background:#62c29a;box-shadow:inset 1px 1px 0 rgba(255,255,255,.38),inset -1px -1px 0 rgba(0,0,0,.32)"></div>
<div class="t fn rw" style="left:186px;top:576px;letter-spacing:-0.116px;">update_metadata &lt;cycle 2&gt;</div>
<div class="t rw" style="left:565px;top:576px;letter-spacing:0.019px;">meta.php</div>
<div class="t r lt rw" style="left:30px;top:593px;width:41.500px">1.29</div>
<div class="t r lt rw" style="left:90px;top:593px;width:32.500px">0.90</div>
<div class="t r lt rw" style="left:125px;top:593px;width:38.500px">382</div>
<div class="sq" style="left:170px;top:597px;background:#72c232;box-shadow:inset 1px 1px 0 rgba(255,255,255,.38),inset -1px -1px 0 rgba(0,0,0,.32)"></div>
<div class="t fn rw" style="left:186px;top:593px;letter-spacing:-0.191px;">update_meta_cache &lt;cycle 2&gt;</div>
<div class="t rw" style="left:565px;top:593px;letter-spacing:0.019px;">meta.php</div>
<div class="a" style="left:4px;top:611px;width:858px;height:17px;border:1px solid #b8d6fb;border-radius:3px;background:linear-gradient(#fafbfd,#ebf3fd)"></div>
<div class="t r lt rw" style="left:30px;top:610px;width:41.500px">1.28</div>
<div class="t r lt rw" style="left:90px;top:610px;width:32.500px">0.40</div>
<div class="t r lt rw" style="left:125px;top:610px;width:38.500px">2 145</div>
<div class="sq" style="left:170px;top:614px;background:#a2c252;box-shadow:inset 1px 1px 0 rgba(255,255,255,.38),inset -1px -1px 0 rgba(0,0,0,.32)"></div>
<div class="t fn rw" style="left:186px;top:610px;letter-spacing:-0.195px;">php::array_walk</div>
<div class="t rw" style="left:565px;top:610px;letter-spacing:0.073px;">php:internal</div>
<div class="t r lt rw" style="left:30px;top:627px;width:41.500px">1.18</div>
<div class="t r lt rw" style="left:90px;top:627px;width:32.500px">0.59</div>
<div class="t r lt rw" style="left:125px;top:627px;width:38.500px">702</div>
<div class="sq" style="left:170px;top:631px;background:#82c2aa;box-shadow:inset 1px 1px 0 rgba(255,255,255,.38),inset -1px -1px 0 rgba(0,0,0,.32)"></div>
<div class="t fn rw" style="left:186px;top:627px;letter-spacing:-0.013px;">get_option &lt;cycle 2&gt;</div>
<div class="t rw" style="left:565px;top:627px;letter-spacing:0.254px;">option.php</div>
<div class="t r lt rw" style="left:30px;top:644px;width:41.500px">1.03</div>
<div class="t r lt rw" style="left:90px;top:644px;width:32.500px">0.04</div>
<div class="t r lt rw" style="left:125px;top:644px;width:38.500px">41</div>
<div class="sq" style="left:170px;top:648px;background:#22c222;box-shadow:inset 1px 1px 0 rgba(255,255,255,.38),inset -1px -1px 0 rgba(0,0,0,.32)"></div>
<div class="t fn rw" style="left:186px;top:644px;letter-spacing:-0.222px;">PMXI_Admin_Addons::set_addons_status &lt;cycle 2&gt;</div>
<div class="t rw" style="left:565px;top:644px;letter-spacing:-0.043px;">addons.php</div>
<div class="t r lt rw" style="left:30px;top:661px;width:41.500px">1.01</div>
<div class="t r lt rw" style="left:90px;top:661px;width:32.500px">0.35</div>
<div class="t r lt rw" style="left:125px;top:661px;width:38.500px">994</div>
<div class="sq" style="left:170px;top:665px;background:#728ac2;box-shadow:inset 1px 1px 0 rgba(255,255,255,.38),inset -1px -1px 0 rgba(0,0,0,.32)"></div>
<div class="t fn rw" style="left:186px;top:661px;letter-spacing:-0.288px;">WP_Post::get_instance &lt;cycle 2&gt;</div>
<div class="t rw" style="left:565px;top:661px;letter-spacing:0.040px;">class-wp-post.php</div>
<div class="t r lt rw" style="left:30px;top:678px;width:41.500px">1.01</div>
<div class="t r lt rw" style="left:90px;top:678px;width:32.500px">0.19</div>
<div class="t r lt rw" style="left:125px;top:678px;width:38.500px">1 989</div>
<div class="sq" style="left:170px;top:682px;background:#9ac252;box-shadow:inset 1px 1px 0 rgba(255,255,255,.38),inset -1px -1px 0 rgba(0,0,0,.32)"></div>
<div class="t fn rw" style="left:186px;top:678px;letter-spacing:-0.277px;">wp_unslash</div>
<div class="t rw" style="left:565px;top:678px;letter-spacing:0.242px;">formatting.php</div>
<div class="t r lt rw" style="left:30px;top:695px;width:41.500px">1.00</div>
<div class="t r lt rw" style="left:90px;top:695px;width:32.500px">0.73</div>
<div class="t r lt rw" style="left:125px;top:695px;width:38.500px">526</div>
<div class="sq" style="left:170px;top:699px;background:#a2c282;box-shadow:inset 1px 1px 0 rgba(255,255,255,.38),inset -1px -1px 0 rgba(0,0,0,.32)"></div>
<div class="t fn rw" style="left:186px;top:695px;letter-spacing:-0.037px;">wpdb-&gt;get_results &lt;cycle 2&gt;</div>
<div class="t rw" style="left:565px;top:695px;letter-spacing:0.239px;">wp-db.php</div>
<div class="t r lt rw" style="left:30px;top:712px;width:41.500px">0.99</div>
<div class="t r lt rw" style="left:90px;top:712px;width:32.500px">0.91</div>
<div class="t r lt rw" style="left:125px;top:712px;width:38.500px">477</div>
<div class="sq" style="left:170px;top:716px;background:#32aaca;box-shadow:inset 1px 1px 0 rgba(255,255,255,.38),inset -1px -1px 0 rgba(0,0,0,.32)"></div>
<div class="t fn rw" style="left:186px;top:712px;letter-spacing:-0.145px;">utf8_uri_encode</div>
<div class="t rw" style="left:565px;top:712px;letter-spacing:0.242px;">formatting.php</div>
<div class="t r lt rw" style="left:30px;top:729px;width:41.500px">0.96</div>
<div class="t r lt rw" style="left:90px;top:729px;width:32.500px">0.55</div>
<div class="t r lt rw" style="left:125px;top:729px;width:38.500px">2 053</div>
<div class="sq" style="left:170px;top:733px;background:#ca2222;box-shadow:inset 1px 1px 0 rgba(255,255,255,.38),inset -1px -1px 0 rgba(0,0,0,.32)"></div>
<div class="t fn rw" style="left:186px;top:729px;letter-spacing:-0.023px;">wpdb-&gt;check_safe_collation</div>
<div class="t rw" style="left:565px;top:729px;letter-spacing:0.239px;">wp-db.php</div>
<div class="t r lt rw" style="left:30px;top:746px;width:41.500px">0.95</div>
<div class="t r lt rw" style="left:90px;top:746px;width:32.500px">0.35</div>
<div class="t r lt rw" style="left:125px;top:746px;width:38.500px">3 439</div>
<div class="sq" style="left:170px;top:750px;background:#4a9aca;box-shadow:inset 1px 1px 0 rgba(255,255,255,.38),inset -1px -1px 0 rgba(0,0,0,.32)"></div>
<div class="t fn rw" style="left:186px;top:746px;letter-spacing:-0.308px;">wp_cache_get</div>
<div class="t rw" style="left:565px;top:746px;letter-spacing:-0.099px;">cache.php</div>
<div class="t r lt rw" style="left:30px;top:763px;width:41.500px">0.94</div>
<div class="t r lt rw" style="left:90px;top:763px;width:32.500px">0.45</div>
<div class="t r lt rw" style="left:125px;top:763px;width:38.500px">270</div>
<div class="sq" style="left:170px;top:767px;background:#1a72ca;box-shadow:inset 1px 1px 0 rgba(255,255,255,.38),inset -1px -1px 0 rgba(0,0,0,.32)"></div>
<div class="t fn rw" style="left:186px;top:763px;letter-spacing:-0.138px;">add_metadata &lt;cycle 2&gt;</div>
<div class="t rw" style="left:565px;top:763px;letter-spacing:0.019px;">meta.php</div>
<div class="t r lt rw" style="left:30px;top:780px;width:41.500px">0.92</div>
<div class="t r lt rw" style="left:90px;top:780px;width:32.500px">0.03</div>
<div class="t r lt rw" style="left:125px;top:780px;width:38.500px">1</div>
<div class="sq" style="left:170px;top:784px;background:#aac222;box-shadow:inset 1px 1px 0 rgba(255,255,255,.38),inset -1px -1px 0 rgba(0,0,0,.32)"></div>
<div class="t fn rw" style="left:186px;top:780px;letter-spacing:0.143px;">require::/var/www/html/awdstack.affiliatewebdesigners.com/wp-ad...</div>
<div class="t rw" style="left:565px;top:780px;letter-spacing:0.141px;">menu.php</div>
<div class="t r lt rw" style="left:30px;top:797px;width:41.500px">0.85</div>
<div class="t r lt rw" style="left:90px;top:797px;width:32.500px">0.39</div>
<div class="t r lt rw" style="left:125px;top:797px;width:38.500px">3 985</div>
<div class="sq" style="left:170px;top:801px;background:#9aca42;box-shadow:inset 1px 1px 0 rgba(255,255,255,.38),inset -1px -1px 0 rgba(0,0,0,.32)"></div>
<div class="t fn rw" style="left:186px;top:797px;letter-spacing:-0.159px;">wpdb-&gt;escape_by_ref</div>
<div class="t rw" style="left:565px;top:797px;letter-spacing:0.239px;">wp-db.php</div>
<div class="t r lt rw" style="left:30px;top:814px;width:41.500px">0.83</div>
<div class="t r lt rw" style="left:90px;top:814px;width:32.500px">0.03</div>
<div class="t r lt rw" style="left:125px;top:814px;width:38.500px">54</div>
<div class="sq" style="left:170px;top:818px;background:#1aa2ca;box-shadow:inset 1px 1px 0 rgba(255,255,255,.38),inset -1px -1px 0 rgba(0,0,0,.32)"></div>
<div class="t fn rw" style="left:186px;top:814px;letter-spacing:-0.132px;">Kirki::add_field</div>
<div class="t rw" style="left:565px;top:814px;letter-spacing:-0.049px;">class-kirki.php</div>
<div class="t r lt rw" style="left:30px;top:831px;width:41.500px">0.82</div>
<div class="t r lt rw" style="left:90px;top:831px;width:32.500px">0.35</div>
<div class="t r lt rw" style="left:125px;top:831px;width:38.500px">270</div>
<div class="sq" style="left:170px;top:835px;background:#92ca42;box-shadow:inset 1px 1px 0 rgba(255,255,255,.38),inset -1px -1px 0 rgba(0,0,0,.32)"></div>
<div class="t fn rw" style="left:186px;top:831px;letter-spacing:-0.136px;">wpdb-&gt;_insert_replace_helper &lt;cycle 2&gt;</div>
<div class="t rw" style="left:565px;top:831px;letter-spacing:0.239px;">wp-db.php</div>
<div class="t r lt rw" style="left:30px;top:848px;width:41.500px">0.81</div>
<div class="t r lt rw" style="left:90px;top:848px;width:32.500px">0.20</div>
<div class="t r lt rw" style="left:125px;top:848px;width:38.500px">1 989</div>
<div class="sq" style="left:170px;top:852px;background:#92ca4a;box-shadow:inset 1px 1px 0 rgba(255,255,255,.38),inset -1px -1px 0 rgba(0,0,0,.32)"></div>
<div class="t fn rw" style="left:186px;top:848px;letter-spacing:-0.343px;">stripslashes_deep</div>
<div class="t rw" style="left:565px;top:848px;letter-spacing:0.242px;">formatting.php</div>
<div class="t r lt rw" style="left:30px;top:865px;width:41.500px">0.81</div>
<div class="t r lt rw" style="left:90px;top:865px;width:32.500px">0.34</div>
<div class="t r lt rw" style="left:125px;top:865px;width:38.500px">307</div>
<div class="sq" style="left:170px;top:869px;background:#1aca1a;box-shadow:inset 1px 1px 0 rgba(255,255,255,.38),inset -1px -1px 0 rgba(0,0,0,.32)"></div>
<div class="t fn rw" style="left:186px;top:865px;letter-spacing:-0.113px;">php::spl_autoload_call &lt;cycle 1&gt;</div>
<div class="t rw" style="left:565px;top:865px;letter-spacing:0.073px;">php:internal</div>
<div class="t r lt rw" style="left:30px;top:882px;width:41.500px">0.72</div>
<div class="t r lt rw" style="left:90px;top:882px;width:32.500px">0.45</div>
<div class="t r lt rw" style="left:125px;top:882px;width:38.500px">505</div>
<div class="sq" style="left:170px;top:886px;background:#6a7aca;box-shadow:inset 1px 1px 0 rgba(255,255,255,.38),inset -1px -1px 0 rgba(0,0,0,.32)"></div>
<div class="t fn rw" style="left:186px;top:882px;letter-spacing:-0.113px;">get_metadata &lt;cycle 2&gt;</div>
<div class="t rw" style="left:565px;top:882px;letter-spacing:0.019px;">meta.php</div>
<div class="t r lt rw" style="left:30px;top:899px;width:41.500px">0.70</div>
<div class="t r lt rw" style="left:90px;top:899px;width:32.500px">0.03</div>
<div class="t r lt rw" style="left:125px;top:899px;width:38.500px">1</div>
<div class="sq" style="left:170px;top:903px;background:#9aaaca;box-shadow:inset 1px 1px 0 rgba(255,255,255,.38),inset -1px -1px 0 rgba(0,0,0,.32)"></div>
<div class="t fn rw" style="left:186px;top:899px;letter-spacing:0.098px;">require_once::/var/www/html/awdstack.affiliatewebdesigners.com/...</div>
<div class="t rw" style="left:565px;top:899px;letter-spacing:0.141px;">menu.php</div>
<div class="t r lt rw" style="left:30px;top:916px;width:41.500px">0.66</div>
<div class="t r lt rw" style="left:90px;top:916px;width:32.500px">0.38</div>
<div class="t r lt rw" style="left:125px;top:916px;width:38.500px">688</div>
<div class="sq" style="left:170px;top:920px;background:#1a7aca;box-shadow:inset 1px 1px 0 rgba(255,255,255,.38),inset -1px -1px 0 rgba(0,0,0,.32)"></div>
<div class="t fn rw" style="left:186px;top:916px;letter-spacing:0.048px;">wpdb-&gt;get_col &lt;cycle 2&gt;</div>
<div class="t rw" style="left:565px;top:916px;letter-spacing:0.239px;">wp-db.php</div>
<div class="t r lt rw" style="left:30px;top:933px;width:41.500px">0.66</div>
<div class="t r lt rw" style="left:90px;top:933px;width:32.500px">0.26</div>
<div class="t r lt rw" style="left:125px;top:933px;width:38.500px">414</div>
<div class="sq" style="left:170px;top:937px;background:#ca8212;box-shadow:inset 1px 1px 0 rgba(255,255,255,.38),inset -1px -1px 0 rgba(0,0,0,.32)"></div>
<div class="t fn rw" style="left:186px;top:933px;letter-spacing:-0.043px;">wpdb-&gt;process_field_lengths</div>
<div class="t rw" style="left:565px;top:933px;letter-spacing:0.239px;">wp-db.php</div>
<div class="t r lt rw" style="left:30px;top:950px;width:41.500px">0.66</div>
<div class="t r lt rw" style="left:90px;top:950px;width:32.500px">0.10</div>
<div class="t r lt rw" style="left:125px;top:950px;width:38.500px">54</div>
<div class="sq" style="left:170px;top:954px;background:#aac28a;box-shadow:inset 1px 1px 0 rgba(255,255,255,.38),inset -1px -1px 0 rgba(0,0,0,.32)"></div>
<div class="t fn rw" style="left:186px;top:950px;letter-spacing:-0.144px;">Kirki_Field-&gt;__construct</div>
<div class="t rw" style="left:565px;top:950px;letter-spacing:0.070px;">class-kirki-field.php</div>
<div class="t r lt rw" style="left:30px;top:967px;width:41.500px">0.65</div>
<div class="t r lt rw" style="left:90px;top:967px;width:32.500px">0.65</div>
<div class="t r lt rw" style="left:125px;top:967px;width:38.500px">94 885</div>
<div class="sq" style="left:170px;top:971px;background:#5aca1a;box-shadow:inset 1px 1px 0 rgba(255,255,255,.38),inset -1px -1px 0 rgba(0,0,0,.32)"></div>
<div class="t fn rw" style="left:186px;top:967px;letter-spacing:-0.168px;">php::XMLReader-&gt;read &lt;cycle 2&gt;</div>
<div class="t rw" style="left:565px;top:967px;letter-spacing:0.073px;">php:internal</div>
<div class="t r lt rw" style="left:30px;top:984px;width:41.500px">0.62</div>
<div class="t r lt rw" style="left:90px;top:984px;width:32.500px">0.54</div>
<div class="t r lt rw" style="left:125px;top:984px;width:38.500px">477</div>
<div class="sq" style="left:170px;top:988px;background:#4a5aca;box-shadow:inset 1px 1px 0 rgba(255,255,255,.38),inset -1px -1px 0 rgba(0,0,0,.32)"></div>
<div class="t fn rw" style="left:186px;top:984px;letter-spacing:-0.385px;">seems_utf8</div>
<div class="t rw" style="left:565px;top:984px;letter-spacing:0.242px;">formatting.php</div>
<div class="t r lt rw" style="left:30px;top:1001px;width:41.500px">0.60</div>
<div class="t r lt rw" style="left:90px;top:1001px;width:32.500px">0.38</div>
<div class="t r lt rw" style="left:125px;top:1001px;width:38.500px">2 722</div>
<div class="sq" style="left:170px;top:1005px;background:#c2ca92;box-shadow:inset 1px 1px 0 rgba(255,255,255,.38),inset -1px -1px 0 rgba(0,0,0,.32)"></div>
<div class="t fn rw" style="left:186px;top:1001px;letter-spacing:-0.277px;">map_deep</div>
<div class="t rw" style="left:565px;top:1001px;letter-spacing:0.242px;">formatting.php</div>
<div class="t" id="status" style="left:2px;top:1023px;font-size:12px;letter-spacing:-0.262px;">cachegrind.out.1471608474.20419 [1] - Total Time Cost: 10 905 995</div>
<div class="t" id="mainlbl" style="left:893px;top:81.500px;font-size:12px;font-weight:bold;letter-spacing:.7px">{main}</div>
<div class="a" style="left:893px;top:122px;width:1019px;height:433px;background:#fff;border:1px solid #8c8e94"></div>
<div class="tab" style="left:895.5px;top:104px;width:49px;height:19px"></div>
<div class="t" style="left:904.3px;top:106.5px;font-size:11px;letter-spacing:-0.212px;">Types</div>
<div class="tab" style="left:945.5px;top:104px;width:55px;height:19px"></div>
<div class="t" style="left:956.1px;top:106.5px;font-size:11px;letter-spacing:-0.305px;">Callers</div>
<div class="tab" style="left:1001.5px;top:104px;width:68px;height:19px"></div>
<div class="t" style="left:1012.8px;top:106.5px;font-size:11px;letter-spacing:-0.365px;">All Callers</div>
<div class="tab tabs" style="left:1069px;top:102px;width:80px;height:21px"></div>
<div class="t" style="left:1083px;top:105.5px;font-size:11px;letter-spacing:-0.464px;">Callee Map</div>
<div class="tab" style="left:1149.5px;top:104px;width:80px;height:19px"></div>
<div class="t" style="left:1158.4px;top:106.5px;font-size:11px;letter-spacing:-0.320px;">Source Code</div>
<div class="a" style="left:0;top:0;width:1920px;height:560px;overflow:visible"><div class="a" style="left:897px;top:126px;width:1011px;height:424px;background:#000;"></div>
<div class="a" style="left:898px;top:127px;width:1009px;height:422px;background:#d4ec30;"></div>
<div class="a hx" style="left:899px;top:544px;width:1007px;height:4px"></div>
<div class="a" style="left:900px;top:129px;width:950px;height:414px;background:#e05c1c;"></div>
<div class="a hx" style="left:902px;top:533px;width:946px;height:9px"></div>
<div class="a" style="left:902px;top:131px;width:550px;height:249px;background:#5c7cb0;border-style:solid;border-width:1px;border-color:#a5b7d4 #3f5478 #3f5478 #a5b7d4;"></div>
<div class="a" style="left:904px;top:148px;width:531px;height:230px;background:#24c450;border-style:solid;border-width:1px;border-color:#87df9f #188536 #188536 #87df9f;"></div>
<div class="a hx" style="left:906px;top:374px;width:527px;height:3px"></div>
<div class="a" style="left:906px;top:151px;width:527px;height:223px;background:#c07c2c;border-style:solid;border-width:1px;border-color:#dcb78b #83541e #83541e #dcb78b;box-shadow:inset 0 0 32px 44px rgba(0,0,0,.14);"></div>
<div class="a" style="left:1435px;top:148px;width:9px;height:230px;background:#3c70cc;border-style:solid;border-width:1px;border-color:#94b0e3 #294c8b #294c8b #94b0e3;"></div>
<div class="a" style="left:1441px;top:150px;width:1px;height:222px;background:#90e890;"></div>
<div class="a hx" style="left:1436px;top:372px;width:7px;height:5px"></div>
<div class="a" style="left:1445px;top:148px;width:5px;height:230px;background:#98a0c8;border-style:solid;border-width:1px;border-color:#c6cbe1 #676d88 #676d88 #c6cbe1;"></div>
<div class="a hx" style="left:1446px;top:372px;width:3px;height:5px"></div>
<div class="tl" style="left:905.5px;top:134px;color:#000;font-size:11px;letter-spacing:0.22px;">wpdb-&gt;query &lt;cycle 2&gt;</div>
<div class="tl" style="left:909.5px;top:154px;color:#000;font-size:11px;letter-spacing:-0.02px;">php::mysqli_query</div>
<div class="a" style="left:1379px;top:134px;width:25px;height:10px;background:#fff;border:1px solid #000"></div>
<div class="a" style="left:1380px;top:135px;width:8px;height:8px;background:#3c8cd0"></div>
<div class="tl" style="left:1406px;top:134px;color:#000;font-size:11px;letter-spacing:0.1px;">33.88 %</div>
<div class="a" style="left:1360px;top:154px;width:25px;height:10px;background:#fff;border:1px solid #000"></div>
<div class="a" style="left:1361px;top:155px;width:7px;height:8px;background:#3c8cd0"></div>
<div class="tl" style="left:1387.5px;top:154px;color:#000;font-size:11px;letter-spacing:0.1px;">29.21 %</div>
<div class="a" style="left:1452px;top:131px;width:214px;height:249px;background:#fbf3b0;border-style:solid;border-width:1px;border-color:#fdf8d4 #aba578 #aba578 #fdf8d4;"></div>
<div class="a" style="left:1452px;top:131px;width:214px;height:249px;box-shadow:inset 0 0 70px 58px rgba(60,50,0,.14);border:1px solid;border-color:#fffce0 #b8ac78 #b8ac78 #fffce0"></div>
<div class="vt" style="left:1454.5px;top:377px;color:#000;font-size:11px;letter-spacing:0.1px">PMXI_Chunk-&gt;read &lt;cycle 2&gt;</div>
<div class="a" style="left:1455px;top:179px;width:10px;height:25px;background:#fff;border:1px solid #000"></div>
<div class="a" style="left:1456px;top:200px;width:8px;height:3px;background:#3c8cd0"></div>
<div class="vt" style="left:1454.5px;top:177px;color:#000;font-size:11px;letter-spacing:0.1px">13.23 %</div>
<div class="a" style="left:1667px;top:131px;width:106px;height:249px;background:#3cb0a8;border-style:solid;border-width:1px;border-color:#94d4cf #297872 #297872 #94d4cf;box-shadow:inset 0 0 38px rgba(0,0,0,0.30);"></div>
<div class="a" style="left:1739px;top:133px;width:32px;height:236px;background:#74a830;border-style:solid;border-width:1px;border-color:#b3cf8d #4f7221 #4f7221 #b3cf8d;box-shadow:inset 0 0 13px rgba(0,0,0,0.22);"></div>
<div class="a" style="left:1739px;top:370px;width:8px;height:6px;background:#90c0b0;border-style:solid;border-width:1px;border-color:#c2dcd4 #628378 #628378 #c2dcd4;"></div>
<div class="a" style="left:1748px;top:370px;width:6px;height:6px;background:#40a8d8;border-style:solid;border-width:1px;border-color:#96cfea #2c7293 #2c7293 #96cfea;"></div>
<div class="a hx" style="left:1754px;top:370px;width:17px;height:7px"></div>
<div class="vt" style="left:1670.0px;top:377px;color:#000;font-size:11px;letter-spacing:0.05px">PMXI_Admin_Import-&gt;process &lt;cycle 2&gt;</div>
<div class="a" style="left:1684px;top:174px;width:9px;height:24px;background:#fff;border:1px solid #000"></div>
<div class="a" style="left:1685px;top:196px;width:7px;height:1px;background:#3c8cd0"></div>
<div class="vt" style="left:1682.0px;top:172px;color:#000;font-size:11px;letter-spacing:0.1px">6.52 %</div>
<div class="vt" style="left:1742.0px;top:367px;color:#000;font-size:11px;letter-spacing:0.05px">php::DOMDocument-&gt;loadXML</div>
<div class="a" style="left:1742px;top:176px;width:9px;height:24px;background:#fff;border:1px solid #000"></div>
<div class="a" style="left:1743px;top:198px;width:7px;height:1px;background:#3c8cd0"></div>
<div class="vt" style="left:1740.5px;top:174px;color:#000;font-size:11px;letter-spacing:0.1px">1.89 %</div>
<div class="a" style="left:1773px;top:131px;width:75px;height:249px;background:#6484b0;border-style:solid;border-width:1px;border-color:#aabbd4 #445a78 #445a78 #aabbd4;box-shadow:inset 0 0 31px rgba(0,0,0,0.30);"></div>
<div class="a" style="left:1802px;top:133px;width:43px;height:228px;background:#70aaa8;border-style:solid;border-width:1px;border-color:#b0d0cf #4c7472 #4c7472 #b0d0cf;"></div>
<div class="a" style="left:1815px;top:135px;width:28px;height:129px;background:#3ea0c8;border-style:solid;border-width:1px;border-color:#95cbe1 #2a6d88 #2a6d88 #95cbe1;box-shadow:inset 0 0 11px rgba(0,0,0,0.22);"></div>
<div class="a" style="left:1840px;top:140px;width:1px;height:100px;background:#80a040;"></div>
<div class="a" style="left:1815px;top:266px;width:27px;height:82px;background:#6068c8;border-style:solid;border-width:1px;border-color:#a8ace1 #414788 #414788 #a8ace1;box-shadow:inset 0 0 11px rgba(0,0,0,0.22);"></div>
<div class="a" style="left:1839px;top:268px;width:2px;height:50px;background:#c8d830;"></div>
<div class="a hx" style="left:1838px;top:319px;width:3px;height:27px"></div>
<div class="a" style="left:1815px;top:349px;width:19px;height:7px;background:#2050c8;border-style:solid;border-width:1px;border-color:#849fe1 #163688 #163688 #849fe1;"></div>
<div class="a hx" style="left:1834px;top:349px;width:8px;height:8px"></div>
<div class="a" style="left:1802px;top:362px;width:6px;height:8px;background:#3060d0;border-style:solid;border-width:1px;border-color:#8da8e5 #21418d #21418d #8da8e5;"></div>
<div class="a" style="left:1809px;top:362px;width:8px;height:8px;background:#80a0c8;border-style:solid;border-width:1px;border-color:#b9cbe1 #576d88 #576d88 #b9cbe1;"></div>
<div class="a" style="left:1818px;top:362px;width:7px;height:8px;background:#30c830;border-style:solid;border-width:1px;border-color:#8de18d #218821 #218821 #8de18d;"></div>
<div class="a" style="left:1826px;top:362px;width:4px;height:8px;background:#30c830;border-style:solid;border-width:1px;border-color:#8de18d #218821 #218821 #8de18d;"></div>
<div class="a" style="left:1831px;top:362px;width:4px;height:8px;background:#58c030;border-style:solid;border-width:1px;border-color:#a3dc8d #3c8321 #3c8321 #a3dc8d;"></div>
<div class="a hx" style="left:1835px;top:362px;width:10px;height:8px"></div>
<div class="a hx" style="left:1802px;top:370px;width:43px;height:7px"></div>
<div class="vt" style="left:1775.0px;top:377px;color:#000;font-size:11px;letter-spacing:0.1px">apply_filters &lt;cycle 2&gt;</div>
<div class="a" style="left:1776px;top:174px;width:10px;height:24px;background:#fff;border:1px solid #000"></div>
<div class="a" style="left:1777px;top:196px;width:8px;height:1px;background:#3c8cd0"></div>
<div class="vt" style="left:1775.0px;top:172px;color:#000;font-size:11px;letter-spacing:0.1px">4.66 %</div>
<div class="vt" style="left:1818.5px;top:263px;color:#000;font-size:11px;letter-spacing:0.1px">utf8_uri_encode</div>
<div class="vt" style="left:1818.5px;top:346px;color:#fff;font-size:11px;letter-spacing:0.1px">seems_utf8</div>
<div class="a" style="left:902px;top:380px;width:120px;height:74px;background:#14c41c;border-style:solid;border-width:1px;border-color:#7edf82 #0e8513 #0e8513 #7edf82;"></div>
<div class="a" style="left:904px;top:382px;width:112px;height:68px;background:#a0cc98;border-style:solid;border-width:1px;border-color:#cbe3c6 #6d8b67 #6d8b67 #cbe3c6;"></div>
<div class="a hx" style="left:905px;top:446px;width:109px;height:3px"></div>
<div class="a" style="left:906px;top:384px;width:94px;height:60px;background:#6c9cc0;border-style:solid;border-width:1px;border-color:#aec9dc #496a83 #496a83 #aec9dc;"></div>
<div class="a" style="left:907px;top:385px;width:92px;height:57px;background:#3a34c4;border-style:solid;border-width:1px;border-color:#938fdf #272385 #272385 #938fdf;box-shadow:inset 0 0 23px rgba(0,0,0,0.22);"></div>
<div class="a hx" style="left:910px;top:438px;width:86px;height:3px"></div>
<div class="a" style="left:1001px;top:384px;width:6px;height:59px;background:#e08c58;border-style:solid;border-width:1px;border-color:#eec0a3 #985f3c #985f3c #eec0a3;"></div>
<div class="a hx" style="left:1003px;top:386px;width:2px;height:55px"></div>
<div class="a" style="left:1008px;top:384px;width:6px;height:59px;background:#a8c878;border-style:solid;border-width:1px;border-color:#cfe1b5 #728852 #728852 #cfe1b5;"></div>
<div class="a hx" style="left:1010px;top:386px;width:2px;height:55px"></div>
<div class="a" style="left:1017px;top:382px;width:3px;height:68px;background:#2a2ad0;"></div>
<div class="a hx" style="left:904px;top:450px;width:116px;height:2px"></div>
<div class="tl" style="left:911.5px;top:389px;color:#fff;font-size:11px;letter-spacing:0.1px;">php::curl_exec</div>
<div class="a" style="left:931px;top:402px;width:25px;height:10px;background:#fff;border:1px solid #000"></div>
<div class="a" style="left:932px;top:403px;width:1px;height:8px;background:#3c8cd0"></div>
<div class="tl" style="left:959px;top:402px;color:#fff;font-size:11px;letter-spacing:0.1px;">1.62 %</div>
<div class="a" style="left:1022px;top:380px;width:113px;height:74px;background:#c07464;border-style:solid;border-width:1px;border-color:#dcb3aa #834f44 #834f44 #dcb3aa;box-shadow:inset 0 0 31px rgba(0,0,0,0.30);"></div>
<div class="a" style="left:1024px;top:404px;width:69px;height:42px;background:#48b03c;border-style:solid;border-width:1px;border-color:#9ad494 #317829 #317829 #9ad494;box-shadow:inset 0 0 17px rgba(0,0,0,0.22);"></div>
<div class="a" style="left:1026px;top:423px;width:58px;height:20px;background:#b4c870;border-style:solid;border-width:1px;border-color:#d6e1b0 #7a884c #7a884c #d6e1b0;"></div>
<div class="a" style="left:1028px;top:425px;width:54px;height:16px;background:#a4bc50;border-style:solid;border-width:1px;border-color:#cdda9f #708036 #708036 #cdda9f;"></div>
<div class="a" style="left:1030px;top:427px;width:50px;height:12px;background:#b8c868;border-style:solid;border-width:1px;border-color:#d8e1ac #7d8847 #7d8847 #d8e1ac;"></div>
<div class="a" style="left:1030px;top:431px;width:50px;height:8px;background:#6484c4;border-style:solid;border-width:1px;border-color:#aabbdf #445a85 #445a85 #aabbdf;"></div>
<div class="a hx" style="left:1032px;top:436px;width:46px;height:2px"></div>
<div class="a" style="left:1084px;top:423px;width:3px;height:20px;background:#2458d8;"></div>
<div class="a" style="left:1087px;top:423px;width:2px;height:20px;background:#88e4e4;"></div>
<div class="a hx" style="left:1089px;top:423px;width:2px;height:20px"></div>
<div class="a hx" style="left:1026px;top:443px;width:65px;height:2px"></div>
<div class="a" style="left:1094px;top:404px;width:27px;height:42px;background:#b4c870;border-style:solid;border-width:1px;border-color:#d6e1b0 #7a884c #7a884c #d6e1b0;"></div>
<div class="a" style="left:1096px;top:406px;width:23px;height:38px;background:#a4bc50;border-style:solid;border-width:1px;border-color:#cdda9f #708036 #708036 #cdda9f;"></div>
<div class="a" style="left:1098px;top:408px;width:19px;height:34px;background:#b8c868;border-style:solid;border-width:1px;border-color:#d8e1ac #7d8847 #7d8847 #d8e1ac;"></div>
<div class="a" style="left:1099px;top:408px;width:19px;height:32px;background:#a8a874;border-style:solid;border-width:1px;border-color:#cfcfb3 #72724f #72724f #cfcfb3;"></div>
<div class="a" style="left:1108px;top:410px;width:8px;height:27px;background:#dc9424;border-style:solid;border-width:1px;border-color:#ecc487 #966518 #966518 #ecc487;"></div>
<div class="a" style="left:1122px;top:404px;width:11px;height:42px;background:#3cc0d4;border-style:solid;border-width:1px;border-color:#94dce7 #298390 #298390 #94dce7;"></div>
<div class="a" style="left:1124px;top:406px;width:7px;height:37px;background:#c8c444;border-style:solid;border-width:1px;border-color:#e1df98 #88852e #88852e #e1df98;"></div>
<div class="a hx" style="left:1127px;top:410px;width:1px;height:30px"></div>
<div class="a" style="left:1024px;top:446px;width:51px;height:5px;background:#e4a49c;border-style:solid;border-width:1px;border-color:#f0cdc9 #9b706a #9b706a #f0cdc9;"></div>
<div class="a" style="left:1076px;top:446px;width:46px;height:5px;background:#e8d8b8;border-style:solid;border-width:1px;border-color:#f2ead8 #9e937d #9e937d #f2ead8;"></div>
<div class="a hx" style="left:1078px;top:447px;width:42px;height:3px"></div>
<div class="a hx" style="left:1122px;top:447px;width:11px;height:4px"></div>
<div class="tl" style="left:1026px;top:383px;color:#000;font-size:11px;letter-spacing:0.1px;">delete_metadata &lt;...</div>
<div class="tl" style="left:1028px;top:407px;color:#000;font-size:11px;letter-spacing:0.1px;">wpdb-&gt;pr...</div>
<div class="a" style="left:1135px;top:380px;width:93px;height:74px;background:#3a6cc8;border-style:solid;border-width:1px;border-color:#93aee1 #274988 #274988 #93aee1;box-shadow:inset 0 0 31px rgba(0,0,0,0.30);"></div>
<div class="a" style="left:1137px;top:425px;width:43px;height:19px;background:#80b084;border-style:solid;border-width:1px;border-color:#b9d4bb #57785a #57785a #b9d4bb;box-shadow:inset 0 0 7px rgba(0,0,0,0.22);"></div>
<div class="a hx" style="left:1139px;top:441px;width:39px;height:2px"></div>
<div class="a" style="left:1181px;top:425px;width:14px;height:19px;background:#3424c8;border-style:solid;border-width:1px;border-color:#8f87e1 #231888 #231888 #8f87e1;"></div>
<div class="a" style="left:1185px;top:428px;width:7px;height:14px;background:#ccb840;border-style:solid;border-width:1px;border-color:#e3d896 #8b7d2c #8b7d2c #e3d896;"></div>
<div class="a" style="left:1196px;top:425px;width:11px;height:19px;background:#40c0a0;border-style:solid;border-width:1px;border-color:#96dccb #2c836d #2c836d #96dccb;"></div>
<div class="a hx" style="left:1200px;top:427px;width:4px;height:15px"></div>
<div class="a" style="left:1208px;top:425px;width:8px;height:19px;background:#30a0d4;border-style:solid;border-width:1px;border-color:#8dcbe7 #216d90 #216d90 #8dcbe7;"></div>
<div class="a hx" style="left:1211px;top:428px;width:2px;height:13px"></div>
<div class="a" style="left:1217px;top:425px;width:4px;height:19px;background:#7494d4;border-style:solid;border-width:1px;border-color:#b3c4e7 #4f6590 #4f6590 #b3c4e7;"></div>
<div class="a hx" style="left:1221px;top:425px;width:5px;height:19px"></div>
<div class="a hx" style="left:1137px;top:445px;width:89px;height:6px"></div>
<div class="tl" style="left:1138px;top:383px;color:#fff;font-size:11px;letter-spacing:-0.05px;">PMXI_Import_</div>
<div class="tl" style="left:1138px;top:396px;color:#fff;font-size:11px;letter-spacing:-0.05px;">Record-&gt;process</div>
<div class="tl" style="left:1143px;top:409px;color:#fff;font-size:11px;letter-spacing:0.1px;">&lt;cycle 2&gt;</div>
<div class="tl" style="left:1140px;top:428px;color:#000;font-size:11px;letter-spacing:-0.4px;">PMXI...</div>
<div class="a" style="left:1228px;top:380px;width:86px;height:74px;background:#8cb488;border-style:solid;border-width:1px;border-color:#c0d6be #5f7a5c #5f7a5c #c0d6be;box-shadow:inset 0 0 31px rgba(0,0,0,0.30);"></div>
<div class="a" style="left:1230px;top:391px;width:42px;height:61px;background:#d08c24;border-style:solid;border-width:1px;border-color:#e5c087 #8d5f18 #8d5f18 #e5c087;"></div>
<div class="a" style="left:1243px;top:393px;width:28px;height:56px;background:#78b098;border-style:solid;border-width:1px;border-color:#b5d4c6 #527867 #527867 #b5d4c6;box-shadow:inset 0 0 11px rgba(0,0,0,0.22);"></div>
<div class="a hx" style="left:1267px;top:395px;width:3px;height:51px"></div>
<div class="a" style="left:1273px;top:391px;width:35px;height:61px;background:#c0b880;border-style:solid;border-width:1px;border-color:#dcd8b9 #837d57 #837d57 #dcd8b9;box-shadow:inset 0 0 14px rgba(0,0,0,0.22);"></div>
<div class="a" style="left:1291px;top:393px;width:15px;height:32px;background:#5ca0d0;border-style:solid;border-width:1px;border-color:#a5cbe5 #3f6d8d #3f6d8d #a5cbe5;"></div>
<div class="a" style="left:1291px;top:426px;width:15px;height:16px;background:#a0b82c;border-style:solid;border-width:1px;border-color:#cbd88b #6d7d1e #6d7d1e #cbd88b;"></div>
<div class="a hx" style="left:1301px;top:428px;width:4px;height:13px"></div>
<div class="a" style="left:1291px;top:442px;width:15px;height:8px;background:#2434d4;border-style:solid;border-width:1px;border-color:#878fe7 #182390 #182390 #878fe7;"></div>
<div class="a hx" style="left:1293px;top:445px;width:11px;height:4px"></div>
<div class="a" style="left:1308px;top:391px;width:3px;height:61px;background:#e0c850;"></div>
<div class="vt" style="left:1246.5px;top:447px;color:#000;font-size:11px;letter-spacing:0.1px">wpdb-&gt;...</div>
<div class="vt" style="left:1276.5px;top:449px;color:#000;font-size:11px;letter-spacing:0.1px">wpdb-&gt;s...</div>
<div class="a" style="left:1314px;top:380px;width:77px;height:74px;background:#60b098;border-style:solid;border-width:1px;border-color:#a8d4c6 #417867 #417867 #a8d4c6;box-shadow:inset 0 0 31px rgba(0,0,0,0.30);"></div>
<div class="a" style="left:1316px;top:409px;width:41px;height:38px;background:#48b040;border-style:solid;border-width:1px;border-color:#9ad496 #31782c #31782c #9ad496;box-shadow:inset 0 0 15px rgba(0,0,0,0.22);"></div>
<div class="a" style="left:1318px;top:425px;width:35px;height:19px;background:#b4c870;border-style:solid;border-width:1px;border-color:#d6e1b0 #7a884c #7a884c #d6e1b0;"></div>
<div class="a" style="left:1320px;top:427px;width:31px;height:15px;background:#a4bc50;border-style:solid;border-width:1px;border-color:#cdda9f #708036 #708036 #cdda9f;"></div>
<div class="a" style="left:1322px;top:429px;width:27px;height:11px;background:#b8c868;border-style:solid;border-width:1px;border-color:#d8e1ac #7d8847 #7d8847 #d8e1ac;"></div>
<div class="a" style="left:1322px;top:431px;width:28px;height:9px;background:#6484c4;border-style:solid;border-width:1px;border-color:#aabbdf #445a85 #445a85 #aabbdf;"></div>
<div class="a hx" style="left:1324px;top:436px;width:24px;height:3px"></div>
<div class="a hx" style="left:1353px;top:427px;width:2px;height:17px"></div>
<div class="a hx" style="left:1318px;top:444px;width:37px;height:2px"></div>
<div class="a" style="left:1358px;top:409px;width:31px;height:38px;background:#b4c870;border-style:solid;border-width:1px;border-color:#d6e1b0 #7a884c #7a884c #d6e1b0;"></div>
<div class="a" style="left:1360px;top:411px;width:27px;height:34px;background:#a4bc50;border-style:solid;border-width:1px;border-color:#cdda9f #708036 #708036 #cdda9f;"></div>
<div class="a" style="left:1362px;top:413px;width:23px;height:30px;background:#b8c868;border-style:solid;border-width:1px;border-color:#d8e1ac #7d8847 #7d8847 #d8e1ac;"></div>
<div class="a" style="left:1362px;top:413px;width:23px;height:30px;background:#a8a878;border-style:solid;border-width:1px;border-color:#cfcfb5 #727252 #727252 #cfcfb5;"></div>
<div class="a" style="left:1374px;top:415px;width:9px;height:25px;background:#dc9424;border-style:solid;border-width:1px;border-color:#ecc487 #966518 #966518 #ecc487;"></div>
<div class="a" style="left:1316px;top:448px;width:58px;height:2px;background:#f0dcc0;"></div>
<div class="a hx" style="left:1316px;top:450px;width:73px;height:2px"></div>
<div class="a hx" style="left:1375px;top:448px;width:14px;height:2px"></div>
<div class="tl" style="left:1317.5px;top:383px;color:#000;font-size:11px;letter-spacing:0.1px;">update_</div>
<div class="tl" style="left:1317.5px;top:396px;color:#000;font-size:11px;letter-spacing:0.1px;">metadata &lt;...</div>
<div class="tl" style="left:1319.5px;top:412px;color:#000;font-size:11px;letter-spacing:0.1px;">wpd...</div>
<div class="a" style="left:1391px;top:380px;width:68px;height:74px;background:#70b838;border-style:solid;border-width:1px;border-color:#b0d892 #4c7d26 #4c7d26 #b0d892;box-shadow:inset 0 0 28px rgba(0,0,0,0.30);"></div>
<div class="a" style="left:1435px;top:382px;width:22px;height:47px;background:#30c868;border-style:solid;border-width:1px;border-color:#8de1ac #218847 #218847 #8de1ac;"></div>
<div class="a" style="left:1437px;top:384px;width:18px;height:43px;background:#98a838;border-style:solid;border-width:1px;border-color:#c6cf92 #677226 #677226 #c6cf92;"></div>
<div class="a" style="left:1446px;top:386px;width:7px;height:16px;background:#60c830;border-style:solid;border-width:1px;border-color:#a8e18d #418821 #418821 #a8e18d;"></div>
<div class="a hx" style="left:1446px;top:402px;width:7px;height:23px"></div>
<div class="a" style="left:1435px;top:430px;width:19px;height:19px;background:#50a0dc;border-style:solid;border-width:1px;border-color:#9fcbec #366d96 #366d96 #9fcbec;"></div>
<div class="a" style="left:1437px;top:432px;width:15px;height:15px;background:#b8b060;border-style:solid;border-width:1px;border-color:#d8d4a8 #7d7841 #7d7841 #d8d4a8;"></div>
<div class="a hx" style="left:1439px;top:440px;width:11px;height:6px"></div>
<div class="a hx" style="left:1454px;top:431px;width:3px;height:18px"></div>
<div class="a hx" style="left:1435px;top:449px;width:22px;height:2px"></div>
<div class="vt" style="left:1394.5px;top:449px;color:#000;font-size:11px;letter-spacing:0.1px">update_meta</div>
<div class="vt" style="left:1407.5px;top:449px;color:#000;font-size:11px;letter-spacing:0.1px">_cache &lt;</div>
<div class="vt" style="left:1420.5px;top:449px;color:#000;font-size:11px;letter-spacing:0.1px">cycle 2&gt;</div>
<div class="a" style="left:1459px;top:380px;width:62px;height:74px;background:#88b8a8;border-style:solid;border-width:1px;border-color:#bed8cf #5c7d72 #5c7d72 #bed8cf;box-shadow:inset 0 0 26px rgba(0,0,0,0.30);"></div>
<div class="a" style="left:1486px;top:382px;width:33px;height:26px;background:#90c0a8;border-style:solid;border-width:1px;border-color:#c2dccf #628372 #628372 #c2dccf;"></div>
<div class="a" style="left:1488px;top:389px;width:21px;height:17px;background:#7068c8;border-style:solid;border-width:1px;border-color:#b0ace1 #4c4788 #4c4788 #b0ace1;"></div>
<div class="a" style="left:1510px;top:389px;width:7px;height:17px;background:#b0b840;border-style:solid;border-width:1px;border-color:#d4d896 #787d2c #787d2c #d4d896;"></div>
<div class="a" style="left:1486px;top:409px;width:33px;height:30px;background:#5098d0;border-style:solid;border-width:1px;border-color:#9fc6e5 #36678d #36678d #9fc6e5;"></div>
<div class="a" style="left:1488px;top:416px;width:29px;height:21px;background:#b8b068;border-style:solid;border-width:1px;border-color:#d8d4ac #7d7847 #7d7847 #d8d4ac;"></div>
<div class="a" style="left:1490px;top:430px;width:25px;height:5px;background:#50c030;border-style:solid;border-width:1px;border-color:#9fdc8d #368321 #368321 #9fdc8d;"></div>
<div class="a hx" style="left:1493px;top:432px;width:20px;height:2px"></div>
<div class="a" style="left:1486px;top:440px;width:18px;height:9px;background:#58b840;border-style:solid;border-width:1px;border-color:#a3d896 #3c7d2c #3c7d2c #a3d896;"></div>
<div class="a hx" style="left:1488px;top:443px;width:12px;height:2px"></div>
<div class="a" style="left:1505px;top:440px;width:10px;height:9px;background:#a8b840;border-style:solid;border-width:1px;border-color:#cfd896 #727d2c #727d2c #cfd896;"></div>
<div class="a hx" style="left:1515px;top:440px;width:4px;height:9px"></div>
<div class="a hx" style="left:1486px;top:449px;width:33px;height:2px"></div>
<div class="vt" style="left:1462.5px;top:449px;color:#000;font-size:11px;letter-spacing:0.1px">get_option ...</div>
<div class="tl" style="left:1491px;top:392px;color:#000;font-size:11px;letter-spacing:0.1px;">i...</div>
<div class="a" style="left:1521px;top:380px;width:54px;height:74px;background:#24c430;border-style:solid;border-width:1px;border-color:#87df8d #188521 #188521 #87df8d;"></div>
<div class="a" style="left:1523px;top:382px;width:50px;height:70px;background:#3898d0;border-style:solid;border-width:1px;border-color:#92c6e5 #26678d #26678d #92c6e5;"></div>
<div class="a" style="left:1525px;top:384px;width:34px;height:43px;background:#28c030;border-style:solid;border-width:1px;border-color:#89dc8d #1b8321 #1b8321 #89dc8d;"></div>
<div class="a" style="left:1536px;top:386px;width:21px;height:33px;background:#70b0a0;border-style:solid;border-width:1px;border-color:#b0d4cb #4c786d #4c786d #b0d4cb;"></div>
<div class="a" style="left:1546px;top:388px;width:10px;height:22px;background:#30d0e0;border-style:solid;border-width:1px;border-color:#8de5ee #218d98 #218d98 #8de5ee;"></div>
<div class="a" style="left:1548px;top:390px;width:6px;height:18px;background:#d8c050;border-style:solid;border-width:1px;border-color:#eadc9f #938336 #938336 #eadc9f;"></div>
<div class="a hx" style="left:1546px;top:410px;width:9px;height:8px"></div>
<div class="a" style="left:1536px;top:420px;width:22px;height:4px;background:#4898d8;"></div>
<div class="a" style="left:1560px;top:384px;width:11px;height:43px;background:#88b070;border-style:solid;border-width:1px;border-color:#bed4b0 #5c784c #5c784c #bed4b0;"></div>
<div class="a hx" style="left:1564px;top:387px;width:3px;height:37px"></div>
<div class="a" style="left:1525px;top:428px;width:16px;height:16px;background:#c8a818;border-style:solid;border-width:1px;border-color:#e1cf80 #887210 #887210 #e1cf80;"></div>
<div class="a" style="left:1542px;top:428px;width:11px;height:16px;background:#c0a880;border-style:solid;border-width:1px;border-color:#dccfb9 #837257 #837257 #dccfb9;"></div>
<div class="a hx" style="left:1546px;top:431px;width:3px;height:10px"></div>
<div class="a" style="left:1554px;top:428px;width:8px;height:16px;background:#d07068;border-style:solid;border-width:1px;border-color:#e5b0ac #8d4c47 #8d4c47 #e5b0ac;"></div>
<div class="a hx" style="left:1557px;top:431px;width:3px;height:10px"></div>
<div class="a" style="left:1563px;top:428px;width:7px;height:16px;background:#50b0c0;border-style:solid;border-width:1px;border-color:#9fd4dc #367883 #367883 #9fd4dc;"></div>
<div class="a" style="left:1525px;top:445px;width:23px;height:4px;background:#e8a898;border-style:solid;border-width:1px;border-color:#f2cfc6 #9e7267 #9e7267 #f2cfc6;"></div>
<div class="a hx" style="left:1548px;top:445px;width:23px;height:4px"></div>
<div class="a" style="left:1575px;top:380px;width:53px;height:74px;background:#6880b0;border-style:solid;border-width:1px;border-color:#acb9d4 #475778 #475778 #acb9d4;box-shadow:inset 0 0 22px rgba(0,0,0,0.22);"></div>
<div class="a" style="left:1589px;top:382px;width:37px;height:30px;background:#58c820;border-style:solid;border-width:1px;border-color:#a3e184 #3c8816 #3c8816 #a3e184;box-shadow:inset 0 0 12px rgba(0,0,0,0.22);"></div>
<div class="a" style="left:1589px;top:413px;width:37px;height:29px;background:#5898d0;border-style:solid;border-width:1px;border-color:#a3c6e5 #3c678d #3c678d #a3c6e5;"></div>
<div class="a" style="left:1591px;top:420px;width:33px;height:20px;background:#b0a860;border-style:solid;border-width:1px;border-color:#d4cfa8 #787241 #787241 #d4cfa8;"></div>
<div class="a" style="left:1593px;top:433px;width:29px;height:5px;background:#48c030;border-style:solid;border-width:1px;border-color:#9adc8d #318321 #318321 #9adc8d;"></div>
<div class="a hx" style="left:1595px;top:435px;width:25px;height:2px"></div>
<div class="a" style="left:1589px;top:443px;width:23px;height:8px;background:#60c040;border-style:solid;border-width:1px;border-color:#a8dc96 #41832c #41832c #a8dc96;"></div>
<div class="a" style="left:1591px;top:445px;width:17px;height:3px;background:#d0d8a0;"></div>
<div class="a hx" style="left:1591px;top:448px;width:19px;height:2px"></div>
<div class="a" style="left:1613px;top:443px;width:13px;height:8px;background:#30d060;border-style:solid;border-width:1px;border-color:#8de5a8 #218d41 #218d41 #8de5a8;"></div>
<div class="a hx" style="left:1615px;top:445px;width:9px;height:5px"></div>
<div class="tl" style="left:1592px;top:385px;color:#000;font-size:11px;letter-spacing:0.1px;">WP_</div>
<div class="tl" style="left:1592px;top:398px;color:#000;font-size:11px;letter-spacing:0.1px;">Pos...</div>
<div class="a" style="left:1628px;top:380px;width:53px;height:74px;background:#98b080;border-style:solid;border-width:1px;border-color:#c6d4b9 #677857 #677857 #c6d4b9;box-shadow:inset 0 0 22px rgba(0,0,0,0.22);"></div>
<div class="a" style="left:1664px;top:382px;width:15px;height:67px;background:#d03838;border-style:solid;border-width:1px;border-color:#e59292 #8d2626 #8d2626 #e59292;"></div>
<div class="a" style="left:1671px;top:384px;width:6px;height:58px;background:#4898d0;border-style:solid;border-width:1px;border-color:#9ac6e5 #31678d #31678d #9ac6e5;"></div>
<div class="a hx" style="left:1672px;top:386px;width:4px;height:55px"></div>
<div class="a hx" style="left:1671px;top:443px;width:5px;height:4px"></div>
<div class="a hx" style="left:1664px;top:449px;width:14px;height:2px"></div>
<div class="vt" style="left:1632.0px;top:449px;color:#000;font-size:11px;letter-spacing:0.1px">wpdb-&gt;get_</div>
<div class="vt" style="left:1645.0px;top:449px;color:#000;font-size:11px;letter-spacing:0.1px">results &lt;cy...</div>
<div class="a" style="left:1681px;top:380px;width:50px;height:74px;background:#3078c8;border-style:solid;border-width:1px;border-color:#8db5e1 #215288 #215288 #8db5e1;box-shadow:inset 0 0 21px rgba(0,0,0,0.22);"></div>
<div class="a" style="left:1701px;top:382px;width:28px;height:32px;background:#b4c870;border-style:solid;border-width:1px;border-color:#d6e1b0 #7a884c #7a884c #d6e1b0;"></div>
<div class="a" style="left:1703px;top:384px;width:24px;height:28px;background:#a4bc50;border-style:solid;border-width:1px;border-color:#cdda9f #708036 #708036 #cdda9f;"></div>
<div class="a" style="left:1705px;top:386px;width:20px;height:24px;background:#b8c868;border-style:solid;border-width:1px;border-color:#d8e1ac #7d8847 #7d8847 #d8e1ac;"></div>
<div class="a" style="left:1705px;top:386px;width:19px;height:25px;background:#a8a878;border-style:solid;border-width:1px;border-color:#cfcfb5 #727252 #727252 #cfcfb5;"></div>
<div class="a" style="left:1715px;top:388px;width:8px;height:20px;background:#dc9424;border-style:solid;border-width:1px;border-color:#ecc487 #966518 #966518 #ecc487;"></div>
<div class="a" style="left:1701px;top:415px;width:28px;height:9px;background:#e0a8a0;border-style:solid;border-width:1px;border-color:#eecfcb #98726d #98726d #eecfcb;"></div>
<div class="a" style="left:1703px;top:417px;width:23px;height:5px;background:#6060d0;"></div>
<div class="a hx" style="left:1704px;top:419px;width:22px;height:4px"></div>
<div class="a" style="left:1701px;top:425px;width:28px;height:19px;background:#30c8d8;border-style:solid;border-width:1px;border-color:#8de1ea #218893 #218893 #8de1ea;"></div>
<div class="a" style="left:1703px;top:429px;width:24px;height:14px;background:#b8b838;border-style:solid;border-width:1px;border-color:#d8d892 #7d7d26 #7d7d26 #d8d892;"></div>
<div class="a hx" style="left:1705px;top:437px;width:19px;height:5px"></div>
<div class="a" style="left:1701px;top:445px;width:24px;height:4px;background:#c8b090;border-style:solid;border-width:1px;border-color:#e1d4c2 #887862 #887862 #e1d4c2;"></div>
<div class="a hx" style="left:1703px;top:447px;width:25px;height:4px"></div>
<div class="vt" style="left:1684.5px;top:449px;color:#fff;font-size:11px;letter-spacing:0.1px">add_metad...</div>
<div class="a" style="left:1731px;top:380px;width:43px;height:74px;background:#98b848;border-style:solid;border-width:1px;border-color:#c6d89a #677d31 #677d31 #c6d89a;box-shadow:inset 0 0 18px rgba(0,0,0,0.22);"></div>
<div class="a" style="left:1746px;top:382px;width:26px;height:67px;background:#50b040;border-style:solid;border-width:1px;border-color:#9fd496 #36782c #36782c #9fd496;box-shadow:inset 0 0 10px rgba(0,0,0,0.22);"></div>
<div class="a" style="left:1757px;top:384px;width:14px;height:55px;background:#b4c870;border-style:solid;border-width:1px;border-color:#d6e1b0 #7a884c #7a884c #d6e1b0;"></div>
<div class="a" style="left:1759px;top:386px;width:10px;height:51px;background:#a4bc50;border-style:solid;border-width:1px;border-color:#cdda9f #708036 #708036 #cdda9f;"></div>
<div class="a" style="left:1761px;top:388px;width:6px;height:47px;background:#b8c868;border-style:solid;border-width:1px;border-color:#d8e1ac #7d8847 #7d8847 #d8e1ac;"></div>
<div class="a" style="left:1761px;top:388px;width:5px;height:47px;background:#7088c8;border-style:solid;border-width:1px;border-color:#b0bee1 #4c5c88 #4c5c88 #b0bee1;"></div>
<div class="a hx" style="left:1757px;top:440px;width:13px;height:7px"></div>
<div class="a hx" style="left:1746px;top:449px;width:26px;height:3px"></div>
<div class="vt" style="left:1733.5px;top:449px;color:#000;font-size:11px;letter-spacing:0.1px">wpdb-&gt;_in...</div>
<div class="a" style="left:1774px;top:380px;width:39px;height:74px;background:#7888c8;border-style:solid;border-width:1px;border-color:#b5bee1 #525c88 #525c88 #b5bee1;box-shadow:inset 0 0 16px rgba(0,0,0,0.22);"></div>
<div class="a" style="left:1795px;top:382px;width:16px;height:34px;background:#4898d0;border-style:solid;border-width:1px;border-color:#9ac6e5 #31678d #31678d #9ac6e5;"></div>
<div class="a" style="left:1798px;top:384px;width:11px;height:31px;background:#b8b850;border-style:solid;border-width:1px;border-color:#d8d89f #7d7d36 #7d7d36 #d8d89f;"></div>
<div class="a hx" style="left:1804px;top:386px;width:2px;height:26px"></div>
<div class="a" style="left:1795px;top:417px;width:16px;height:19px;background:#b0a078;border-style:solid;border-width:1px;border-color:#d4cbb5 #786d52 #786d52 #d4cbb5;"></div>
<div class="a" style="left:1795px;top:437px;width:16px;height:13px;background:#80c098;border-style:solid;border-width:1px;border-color:#b9dcc6 #578367 #578367 #b9dcc6;"></div>
<div class="a" style="left:1797px;top:439px;width:9px;height:9px;background:#7060d0;border-style:solid;border-width:1px;border-color:#b0a8e5 #4c418d #4c418d #b0a8e5;"></div>
<div class="a hx" style="left:1806px;top:439px;width:4px;height:10px"></div>
<div class="a hx" style="left:1797px;top:447px;width:11px;height:3px"></div>
<div class="vt" style="left:1777.5px;top:449px;color:#000;font-size:11px;letter-spacing:0.1px">get_metad...</div>
<div class="a" style="left:1813px;top:380px;width:35px;height:74px;background:#3078c8;border-style:solid;border-width:1px;border-color:#8db5e1 #215288 #215288 #8db5e1;box-shadow:inset 0 0 14px rgba(0,0,0,0.22);"></div>
<div class="a" style="left:1830px;top:382px;width:16px;height:68px;background:#d03838;border-style:solid;border-width:1px;border-color:#e59292 #8d2626 #8d2626 #e59292;"></div>
<div class="a" style="left:1837px;top:384px;width:7px;height:58px;background:#4898d0;border-style:solid;border-width:1px;border-color:#9ac6e5 #31678d #31678d #9ac6e5;"></div>
<div class="a hx" style="left:1839px;top:386px;width:4px;height:55px"></div>
<div class="a hx" style="left:1837px;top:443px;width:6px;height:5px"></div>
<div class="vt" style="left:1816.0px;top:449px;color:#fff;font-size:11px;letter-spacing:0.1px">wpdb-&gt;get...</div>
<div class="a" style="left:902px;top:454px;width:65px;height:39px;background:#60c828;border-style:solid;border-width:1px;border-color:#a8e189 #41881b #41881b #a8e189;box-shadow:inset 0 0 16px rgba(0,0,0,0.22);"></div>
<div class="tl" style="left:905.5px;top:457px;color:#000;font-size:11px;letter-spacing:0.1px;">php::</div>
<div class="tl" style="left:905.5px;top:470px;color:#000;font-size:11px;letter-spacing:0.1px;">XMLRead...</div>
<div class="a" style="left:967px;top:454px;width:53px;height:39px;background:#a0d8d0;border-style:solid;border-width:1px;border-color:#cbeae5 #6d938d #6d938d #cbeae5;"></div>
<div class="a" style="left:969px;top:456px;width:23px;height:31px;background:#e0a070;border-style:solid;border-width:1px;border-color:#eecbb0 #986d4c #986d4c #eecbb0;"></div>
<div class="a" style="left:971px;top:458px;width:20px;height:23px;background:#c0b850;border-style:solid;border-width:1px;border-color:#dcd89f #837d36 #837d36 #dcd89f;"></div>
<div class="a hx" style="left:971px;top:482px;width:20px;height:4px"></div>
<div class="a" style="left:993px;top:456px;width:13px;height:31px;background:#d8a858;border-style:solid;border-width:1px;border-color:#eacfa3 #93723c #93723c #eacfa3;"></div>
<div class="a" style="left:995px;top:458px;width:9px;height:19px;background:#3050d0;border-style:solid;border-width:1px;border-color:#8d9fe5 #21368d #21368d #8d9fe5;"></div>
<div class="a hx" style="left:996px;top:477px;width:7px;height:6px"></div>
<div class="a" style="left:1006px;top:456px;width:12px;height:31px;background:#3080d8;border-style:solid;border-width:1px;border-color:#8db9ea #215793 #215793 #8db9ea;"></div>
<div class="a" style="left:1008px;top:458px;width:8px;height:25px;background:#d0b850;border-style:solid;border-width:1px;border-color:#e5d89f #8d7d36 #8d7d36 #e5d89f;"></div>
<div class="a hx" style="left:1011px;top:460px;width:3px;height:21px"></div>
<div class="a" style="left:969px;top:487px;width:44px;height:3px;background:#30a8e8;"></div>
<div class="a hx" style="left:1013px;top:487px;width:5px;height:4px"></div>
<div class="a hx" style="left:969px;top:490px;width:44px;height:1px"></div>
<div class="vt" style="left:974.5px;top:479px;color:#000;font-size:11px;letter-spacing:0.1px">p...</div>
<div class="a" style="left:1020px;top:454px;width:53px;height:39px;background:#40c040;border-style:solid;border-width:1px;border-color:#96dc96 #2c832c #2c832c #96dc96;box-shadow:inset 0 0 16px rgba(0,0,0,0.22);"></div>
<div class="tl" style="left:1023.5px;top:457px;color:#000;font-size:11px;letter-spacing:0.1px;">prepro...</div>
<div class="a" style="left:1022px;top:472px;width:18px;height:18px;background:#3050c8;border-style:solid;border-width:1px;border-color:#8d9fe1 #213688 #213688 #8d9fe1;"></div>
<div class="a" style="left:1040px;top:472px;width:12px;height:18px;background:#30c8b8;border-style:solid;border-width:1px;border-color:#8de1d8 #21887d #21887d #8de1d8;"></div>
<div class="a" style="left:1052px;top:472px;width:9px;height:18px;background:#c8b860;border-style:solid;border-width:1px;border-color:#e1d8a8 #887d41 #887d41 #e1d8a8;"></div>
<div class="a" style="left:1061px;top:472px;width:7px;height:18px;background:#80d0c0;border-style:solid;border-width:1px;border-color:#b9e5dc #578d83 #578d83 #b9e5dc;"></div>
<div class="a hx" style="left:1064px;top:474px;width:2px;height:14px"></div>
<div class="a hx" style="left:1068px;top:473px;width:2px;height:17px"></div>
<div class="a hx" style="left:1022px;top:490px;width:48px;height:1px"></div>
<div class="a" style="left:1073px;top:454px;width:52px;height:39px;background:#30c048;border-style:solid;border-width:1px;border-color:#8ddc9a #218331 #218331 #8ddc9a;box-shadow:inset 0 0 16px rgba(0,0,0,0.22);"></div>
<div class="tl" style="left:1077px;top:457px;color:#000;font-size:11px;letter-spacing:0.1px;">translate</div>
<div class="tl" style="left:1077px;top:470px;color:#000;font-size:11px;letter-spacing:0.1px;"> &lt;cycl...</div>
<div class="a hx" style="left:1075px;top:489px;width:48px;height:2px"></div>
<div class="a" style="left:1125px;top:454px;width:49px;height:39px;background:#88b898;border-style:solid;border-width:1px;border-color:#bed8c6 #5c7d67 #5c7d67 #bed8c6;box-shadow:inset 0 0 16px rgba(0,0,0,0.22);"></div>
<div class="tl" style="left:1128.5px;top:457px;color:#000;font-size:11px;letter-spacing:-0.4px;">WP_Q...</div>
<div class="a" style="left:1127px;top:476px;width:13px;height:10px;background:#e09080;border-style:solid;border-width:1px;border-color:#eec2b9 #986257 #986257 #eec2b9;"></div>
<div class="a hx" style="left:1129px;top:478px;width:9px;height:6px"></div>
<div class="a" style="left:1141px;top:476px;width:9px;height:10px;background:#60a0d0;border-style:solid;border-width:1px;border-color:#a8cbe5 #416d8d #416d8d #a8cbe5;"></div>
<div class="a hx" style="left:1143px;top:478px;width:5px;height:6px"></div>
<div class="a" style="left:1151px;top:476px;width:9px;height:10px;background:#60c040;border-style:solid;border-width:1px;border-color:#a8dc96 #41832c #41832c #a8dc96;"></div>
<div class="a hx" style="left:1153px;top:478px;width:5px;height:6px"></div>
<div class="a" style="left:1160px;top:476px;width:6px;height:10px;background:#c0c840;border-style:solid;border-width:1px;border-color:#dce196 #83882c #83882c #dce196;"></div>
<div class="a hx" style="left:1162px;top:478px;width:2px;height:6px"></div>
<div class="a hx" style="left:1166px;top:477px;width:5px;height:9px"></div>
<div class="a hx" style="left:1127px;top:487px;width:44px;height:2px"></div>
<div class="a" style="left:1174px;top:454px;width:49px;height:39px;background:#7880b0;border-style:solid;border-width:1px;border-color:#b5b9d4 #525778 #525778 #b5b9d4;box-shadow:inset 0 0 16px rgba(0,0,0,0.22);"></div>
<div class="tl" style="left:1177px;top:457px;color:#000;font-size:11px;letter-spacing:-0.25px;">Xml</div>
<div class="tl" style="left:1177px;top:470px;color:#000;font-size:11px;letter-spacing:-0.25px;">Impor...</div>
<div class="a" style="left:1176px;top:483px;width:13px;height:6px;background:#88b890;border-style:solid;border-width:1px;border-color:#bed8c2 #5c7d62 #5c7d62 #bed8c2;"></div>
<div class="a" style="left:1190px;top:483px;width:8px;height:6px;background:#78b840;border-style:solid;border-width:1px;border-color:#b5d896 #527d2c #527d2c #b5d896;"></div>
<div class="a" style="left:1199px;top:483px;width:9px;height:6px;background:#60c0a8;border-style:solid;border-width:1px;border-color:#a8dccf #418372 #418372 #a8dccf;"></div>
<div class="a hx" style="left:1208px;top:483px;width:12px;height:6px"></div>
<div class="a" style="left:1223px;top:454px;width:48px;height:39px;background:#88b868;border-style:solid;border-width:1px;border-color:#bed8ac #5c7d47 #5c7d47 #bed8ac;box-shadow:inset 0 0 16px rgba(0,0,0,0.22);"></div>
<div class="tl" style="left:1226.5px;top:457px;color:#000;font-size:11px;letter-spacing:0.1px;">wp_g...</div>
<div class="a" style="left:1225px;top:479px;width:25px;height:11px;background:#30d030;border-style:solid;border-width:1px;border-color:#8de58d #218d21 #218d21 #8de58d;"></div>
<div class="a" style="left:1227px;top:483px;width:20px;height:4px;background:#c0e0c0;"></div>
<div class="a hx" style="left:1229px;top:484px;width:16px;height:2px"></div>
<div class="a" style="left:1250px;top:479px;width:13px;height:11px;background:#50c8a8;border-style:solid;border-width:1px;border-color:#9fe1cf #368872 #368872 #9fe1cf;"></div>
<div class="a hx" style="left:1253px;top:481px;width:7px;height:7px"></div>
<div class="a hx" style="left:1263px;top:479px;width:5px;height:11px"></div>
<div class="a" style="left:1271px;top:454px;width:47px;height:39px;background:#c08070;border-style:solid;border-width:1px;border-color:#dcb9b0 #83574c #83574c #dcb9b0;box-shadow:inset 0 0 16px rgba(0,0,0,0.22);"></div>
<div class="tl" style="left:1274.5px;top:457px;color:#000;font-size:11px;letter-spacing:0.1px;">sanitize</div>
<div class="tl" style="left:1274.5px;top:470px;color:#000;font-size:11px;letter-spacing:0.1px;">_key ...</div>
<div class="a" style="left:1273px;top:486px;width:31px;height:4px;background:#2850d0;"></div>
<div class="a hx" style="left:1273px;top:489px;width:43px;height:2px"></div>
<div class="a hx" style="left:1304px;top:486px;width:12px;height:3px"></div>
<div class="a" style="left:1318px;top:454px;width:45px;height:39px;background:#7060c8;border-style:solid;border-width:1px;border-color:#b0a8e1 #4c4188 #4c4188 #b0a8e1;box-shadow:inset 0 0 16px rgba(0,0,0,0.22);"></div>
<div class="tl" style="left:1321.5px;top:457px;color:#fff;font-size:11px;letter-spacing:0.1px;">wpdb...</div>
<div class="a" style="left:1320px;top:469px;width:41px;height:22px;background:#d03838;border-style:solid;border-width:1px;border-color:#e59292 #8d2626 #8d2626 #e59292;"></div>
<div class="a" style="left:1322px;top:479px;width:34px;height:9px;background:#60a0d8;border-style:solid;border-width:1px;border-color:#a8cbea #416d93 #416d93 #a8cbea;"></div>
<div class="a hx" style="left:1357px;top:470px;width:3px;height:20px"></div>
<div class="a hx" style="left:1322px;top:488px;width:36px;height:2px"></div>
<div class="a" style="left:1363px;top:454px;width:44px;height:39px;background:#68c030;border-style:solid;border-width:1px;border-color:#acdc8d #478321 #478321 #acdc8d;box-shadow:inset 0 0 16px rgba(0,0,0,0.22);"></div>
<div class="tl" style="left:1366.5px;top:457px;color:#000;font-size:11px;letter-spacing:0.1px;">do_</div>
<div class="tl" style="left:1366.5px;top:470px;color:#000;font-size:11px;letter-spacing:0.1px;">actio...</div>
<div class="a" style="left:1365px;top:483px;width:13px;height:6px;background:#d0b080;border-style:solid;border-width:1px;border-color:#e5d4b9 #8d7857 #8d7857 #e5d4b9;"></div>
<div class="a hx" style="left:1367px;top:485px;width:9px;height:2px"></div>
<div class="a" style="left:1379px;top:483px;width:9px;height:6px;background:#d86820;border-style:solid;border-width:1px;border-color:#eaac84 #934716 #934716 #eaac84;"></div>
<div class="a" style="left:1388px;top:483px;width:6px;height:6px;background:#50c098;border-style:solid;border-width:1px;border-color:#9fdcc6 #368367 #368367 #9fdcc6;"></div>
<div class="a hx" style="left:1394px;top:483px;width:10px;height:6px"></div>
<div class="a" style="left:1407px;top:454px;width:42px;height:39px;background:#6c64c8;border-style:solid;border-width:1px;border-color:#aeaae1 #494488 #494488 #aeaae1;box-shadow:inset 0 0 16px rgba(0,0,0,0.22);"></div>
<div class="tl" style="left:1410.5px;top:457px;color:#fff;font-size:11px;letter-spacing:0.1px;">wpdb-</div>
<div class="tl" style="left:1410.5px;top:470px;color:#fff;font-size:11px;letter-spacing:0.1px;">&gt;get...</div>
<div class="a" style="left:1409px;top:488px;width:29px;height:2px;background:#2040d0;"></div>
<div class="a hx" style="left:1409px;top:490px;width:37px;height:1px"></div>
<div class="a hx" style="left:1438px;top:488px;width:8px;height:2px"></div>
<div class="a" style="left:1449px;top:454px;width:37px;height:39px;background:#7088b0;border-style:solid;border-width:1px;border-color:#b0bed4 #4c5c78 #4c5c78 #b0bed4;box-shadow:inset 0 0 15px rgba(0,0,0,0.22);"></div>
<div class="a" style="left:1456px;top:456px;width:28px;height:34px;background:#50b038;border-style:solid;border-width:1px;border-color:#9fd492 #367826 #367826 #9fd492;box-shadow:inset 0 0 11px rgba(0,0,0,0.22);"></div>
<div class="a" style="left:1467px;top:458px;width:15px;height:26px;background:#b4c870;border-style:solid;border-width:1px;border-color:#d6e1b0 #7a884c #7a884c #d6e1b0;"></div>
<div class="a" style="left:1469px;top:460px;width:11px;height:22px;background:#a4bc50;border-style:solid;border-width:1px;border-color:#cdda9f #708036 #708036 #cdda9f;"></div>
<div class="a" style="left:1471px;top:462px;width:7px;height:18px;background:#b8c868;border-style:solid;border-width:1px;border-color:#d8e1ac #7d8847 #7d8847 #d8e1ac;"></div>
<div class="a" style="left:1471px;top:462px;width:7px;height:17px;background:#7088c8;border-style:solid;border-width:1px;border-color:#b0bee1 #4c5c88 #4c5c88 #b0bee1;"></div>
<div class="a hx" style="left:1474px;top:464px;width:1px;height:13px"></div>
<div class="a hx" style="left:1467px;top:485px;width:14px;height:4px"></div>
<div class="a" style="left:1486px;top:454px;width:36px;height:39px;background:#68b898;border-style:solid;border-width:1px;border-color:#acd8c6 #477d67 #477d67 #acd8c6;box-shadow:inset 0 0 15px rgba(0,0,0,0.22);"></div>
<div class="a" style="left:1488px;top:456px;width:32px;height:7px;background:#b0c060;border-style:solid;border-width:1px;border-color:#d4dca8 #788341 #788341 #d4dca8;"></div>
<div class="a hx" style="left:1490px;top:458px;width:28px;height:3px"></div>
<div class="a" style="left:1488px;top:464px;width:32px;height:26px;background:#50b838;border-style:solid;border-width:1px;border-color:#9fd892 #367d26 #367d26 #9fd892;box-shadow:inset 0 0 10px rgba(0,0,0,0.22);"></div>
<div class="a" style="left:1493px;top:473px;width:24px;height:13px;background:#b8cc68;border-style:solid;border-width:1px;border-color:#d8e3ac #7d8b47 #7d8b47 #d8e3ac;"></div>
<div class="a" style="left:1495px;top:475px;width:20px;height:9px;background:#a8c048;border-style:solid;border-width:1px;border-color:#cfdc9a #728331 #728331 #cfdc9a;"></div>
<div class="a hx" style="left:1497px;top:477px;width:16px;height:5px"></div>
<div class="a hx" style="left:1490px;top:487px;width:28px;height:2px"></div>
<div class="a" style="left:1522px;top:454px;width:35px;height:39px;background:#68c0a0;border-style:solid;border-width:1px;border-color:#acdccb #47836d #47836d #acdccb;box-shadow:inset 0 0 14px rgba(0,0,0,0.22);"></div>
<div class="a" style="left:1526px;top:456px;width:29px;height:13px;background:#30c830;border-style:solid;border-width:1px;border-color:#8de18d #218821 #218821 #8de18d;"></div>
<div class="a" style="left:1528px;top:461px;width:25px;height:6px;background:#80c0a0;border-style:solid;border-width:1px;border-color:#b9dccb #57836d #57836d #b9dccb;"></div>
<div class="a hx" style="left:1530px;top:463px;width:21px;height:3px"></div>
<div class="a" style="left:1524px;top:470px;width:32px;height:19px;background:#70d0a8;border-style:solid;border-width:1px;border-color:#b0e5cf #4c8d72 #4c8d72 #b0e5cf;"></div>
<div class="a" style="left:1526px;top:472px;width:29px;height:15px;background:#30c830;border-style:solid;border-width:1px;border-color:#8de18d #218821 #218821 #8de18d;"></div>
<div class="a" style="left:1529px;top:477px;width:22px;height:8px;background:#80c0a0;border-style:solid;border-width:1px;border-color:#b9dccb #57836d #57836d #b9dccb;"></div>
<div class="a hx" style="left:1531px;top:480px;width:18px;height:4px"></div>
<div class="a hx" style="left:1526px;top:489px;width:29px;height:2px"></div>
<div class="a" style="left:1557px;top:454px;width:35px;height:39px;background:#8090c8;border-style:solid;border-width:1px;border-color:#b9c2e1 #576288 #576288 #b9c2e1;box-shadow:inset 0 0 14px rgba(0,0,0,0.22);"></div>
<div class="vt" style="left:1560.5px;top:488px;color:#000;font-size:11px;letter-spacing:0.1px">sani...</div>
<div class="vt" style="left:1573.5px;top:488px;color:#000;font-size:11px;letter-spacing:0.1px">_po...</div>
<div class="a" style="left:1592px;top:454px;width:34px;height:39px;background:#3070d0;border-style:solid;border-width:1px;border-color:#8db0e5 #214c8d #214c8d #8db0e5;box-shadow:inset 0 0 14px rgba(0,0,0,0.22);"></div>
<div class="a" style="left:1598px;top:456px;width:26px;height:34px;background:#50b040;border-style:solid;border-width:1px;border-color:#9fd496 #36782c #36782c #9fd496;box-shadow:inset 0 0 10px rgba(0,0,0,0.22);"></div>
<div class="a" style="left:1608px;top:458px;width:14px;height:25px;background:#b4c870;border-style:solid;border-width:1px;border-color:#d6e1b0 #7a884c #7a884c #d6e1b0;"></div>
<div class="a" style="left:1610px;top:460px;width:10px;height:21px;background:#a4bc50;border-style:solid;border-width:1px;border-color:#cdda9f #708036 #708036 #cdda9f;"></div>
<div class="a" style="left:1612px;top:462px;width:6px;height:17px;background:#b8c868;border-style:solid;border-width:1px;border-color:#d8e1ac #7d8847 #7d8847 #d8e1ac;"></div>
<div class="a" style="left:1612px;top:462px;width:6px;height:17px;background:#7088c8;border-style:solid;border-width:1px;border-color:#b0bee1 #4c5c88 #4c5c88 #b0bee1;"></div>
<div class="a hx" style="left:1608px;top:484px;width:14px;height:5px"></div>
<div class="a" style="left:1626px;top:454px;width:34px;height:39px;background:#b89830;border-style:solid;border-width:1px;border-color:#d8c68d #7d6721 #7d6721 #d8c68d;box-shadow:inset 0 0 14px rgba(0,0,0,0.22);"></div>
<div class="a" style="left:1638px;top:456px;width:20px;height:34px;background:#d03838;border-style:solid;border-width:1px;border-color:#e59292 #8d2626 #8d2626 #e59292;"></div>
<div class="a" style="left:1647px;top:458px;width:9px;height:27px;background:#4898d0;border-style:solid;border-width:1px;border-color:#9ac6e5 #31678d #31678d #9ac6e5;"></div>
<div class="a hx" style="left:1648px;top:485px;width:7px;height:2px"></div>
<div class="a" style="left:1660px;top:454px;width:33px;height:39px;background:#b88050;border-style:solid;border-width:1px;border-color:#d8b99f #7d5736 #7d5736 #d8b99f;box-shadow:inset 0 0 13px rgba(0,0,0,0.22);"></div>
<div class="vt" style="left:1663.5px;top:488px;color:#000;font-size:11px;letter-spacing:0.1px">Xml</div>
<div class="vt" style="left:1676.5px;top:488px;color:#000;font-size:11px;letter-spacing:0.1px">Imp...</div>
<div class="a" style="left:1693px;top:454px;width:33px;height:39px;background:#78b058;border-style:solid;border-width:1px;border-color:#b5d4a3 #52783c #52783c #b5d4a3;box-shadow:inset 0 0 13px rgba(0,0,0,0.22);"></div>
<div class="vt" style="left:1696.5px;top:488px;color:#000;font-size:11px;letter-spacing:0.1px">get_</div>
<div class="vt" style="left:1709.5px;top:488px;color:#000;font-size:11px;letter-spacing:0.1px">post...</div>
<div class="a hx" style="left:1722px;top:458px;width:1px;height:30px"></div>
<div class="a" style="left:1726px;top:454px;width:32px;height:39px;background:#c8c020;border-style:solid;border-width:1px;border-color:#e1dc84 #888316 #888316 #e1dc84;box-shadow:inset 0 0 13px rgba(0,0,0,0.22);"></div>
<div class="a" style="left:1737px;top:456px;width:19px;height:11px;background:#50b0d8;border-style:solid;border-width:1px;border-color:#9fd4ea #367893 #367893 #9fd4ea;"></div>
<div class="a" style="left:1739px;top:458px;width:14px;height:6px;background:#c0c080;border-style:solid;border-width:1px;border-color:#dcdcb9 #838357 #838357 #dcdcb9;"></div>
<div class="a hx" style="left:1740px;top:464px;width:14px;height:2px"></div>
<div class="a hx" style="left:1752px;top:458px;width:2px;height:6px"></div>
<div class="a" style="left:1737px;top:468px;width:19px;height:18px;background:#b4c870;border-style:solid;border-width:1px;border-color:#d6e1b0 #7a884c #7a884c #d6e1b0;"></div>
<div class="a" style="left:1739px;top:470px;width:15px;height:14px;background:#a4bc50;border-style:solid;border-width:1px;border-color:#cdda9f #708036 #708036 #cdda9f;"></div>
<div class="a" style="left:1741px;top:472px;width:11px;height:10px;background:#b8c868;border-style:solid;border-width:1px;border-color:#d8e1ac #7d8847 #7d8847 #d8e1ac;"></div>
<div class="a" style="left:1742px;top:473px;width:10px;height:8px;background:#d0d0a0;border-style:solid;border-width:1px;border-color:#e5e5cb #8d8d6d #8d8d6d #e5e5cb;"></div>
<div class="a hx" style="left:1745px;top:475px;width:4px;height:3px"></div>
<div class="a hx" style="left:1737px;top:486px;width:19px;height:3px"></div>
<div class="a" style="left:1758px;top:454px;width:32px;height:39px;background:#98b070;border-style:solid;border-width:1px;border-color:#c6d4b0 #67784c #67784c #c6d4b0;box-shadow:inset 0 0 13px rgba(0,0,0,0.22);"></div>
<div class="a" style="left:1770px;top:456px;width:18px;height:31px;background:#4898d0;border-style:solid;border-width:1px;border-color:#9ac6e5 #31678d #31678d #9ac6e5;"></div>
<div class="a" style="left:1773px;top:458px;width:13px;height:27px;background:#b8b060;border-style:solid;border-width:1px;border-color:#d8d4a8 #7d7841 #7d7841 #d8d4a8;"></div>
<div class="a hx" style="left:1779px;top:461px;width:3px;height:21px"></div>
<div class="a hx" style="left:1770px;top:487px;width:18px;height:4px"></div>
<div class="a" style="left:1790px;top:454px;width:29px;height:39px;background:#d08058;border-style:solid;border-width:1px;border-color:#e5b9a3 #8d573c #8d573c #e5b9a3;box-shadow:inset 0 0 12px rgba(0,0,0,0.22);"></div>
<div class="a" style="left:1804px;top:456px;width:13px;height:30px;background:#58c038;border-style:solid;border-width:1px;border-color:#a3dc92 #3c8326 #3c8326 #a3dc92;"></div>
<div class="a" style="left:1808px;top:458px;width:7px;height:22px;background:#b0c860;border-style:solid;border-width:1px;border-color:#d4e1a8 #788841 #788841 #d4e1a8;"></div>
<div class="a hx" style="left:1810px;top:460px;width:2px;height:18px"></div>
<div class="a hx" style="left:1808px;top:480px;width:7px;height:2px"></div>
<div class="a hx" style="left:1804px;top:486px;width:13px;height:3px"></div>
<div class="a" style="left:1819px;top:454px;width:29px;height:39px;background:#88c0b0;border-style:solid;border-width:1px;border-color:#bedcd4 #5c8378 #5c8378 #bedcd4;box-shadow:inset 0 0 12px rgba(0,0,0,0.22);"></div>
<div class="a" style="left:1825px;top:456px;width:21px;height:27px;background:#9898d0;border-style:solid;border-width:1px;border-color:#c6c6e5 #67678d #67678d #c6c6e5;"></div>
<div class="a" style="left:1827px;top:458px;width:17px;height:23px;background:#b0a8d8;border-style:solid;border-width:1px;border-color:#d4cfea #787293 #787293 #d4cfea;"></div>
<div class="a" style="left:1829px;top:461px;width:13px;height:13px;background:#2878d8;border-style:solid;border-width:1px;border-color:#89b5ea #1b5293 #1b5293 #89b5ea;"></div>
<div class="a hx" style="left:1831px;top:463px;width:9px;height:9px"></div>
<div class="a hx" style="left:1827px;top:475px;width:17px;height:7px"></div>
<div class="a" style="left:1825px;top:484px;width:12px;height:4px;background:#90c890;border-style:solid;border-width:1px;border-color:#c2e1c2 #628862 #628862 #c2e1c2;"></div>
<div class="a hx" style="left:1837px;top:484px;width:8px;height:6px"></div>
<div class="a" style="left:902px;top:493px;width:44px;height:25px;background:#40b070;border-style:solid;border-width:1px;border-color:#96d4b0 #2c784c #2c784c #96d4b0;box-shadow:inset 0 0 10px rgba(0,0,0,0.22);"></div>
<div class="tl" style="left:905.5px;top:496px;color:#000;font-size:11px;letter-spacing:0.1px;">wpdb...</div>
<div class="a hx" style="left:904px;top:514px;width:39px;height:2px"></div>
<div class="a" style="left:946px;top:493px;width:41px;height:25px;background:#3050d0;border-style:solid;border-width:1px;border-color:#8d9fe5 #21368d #21368d #8d9fe5;"></div>
<div class="a" style="left:948px;top:495px;width:13px;height:19px;background:#78a0b0;border-style:solid;border-width:1px;border-color:#b5cbd4 #526d78 #526d78 #b5cbd4;"></div>
<div class="a" style="left:962px;top:495px;width:11px;height:19px;background:#7090b8;border-style:solid;border-width:1px;border-color:#b0c2d8 #4c627d #4c627d #b0c2d8;"></div>
<div class="a" style="left:974px;top:495px;width:11px;height:19px;background:#a0b870;border-style:solid;border-width:1px;border-color:#cbd8b0 #6d7d4c #6d7d4c #cbd8b0;"></div>
<div class="a hx" style="left:977px;top:497px;width:5px;height:14px"></div>
<div class="a" style="left:987px;top:493px;width:40px;height:25px;background:#b8b870;border-style:solid;border-width:1px;border-color:#d8d8b0 #7d7d4c #7d7d4c #d8d8b0;box-shadow:inset 0 0 10px rgba(0,0,0,0.22);"></div>
<div class="tl" style="left:991px;top:496px;color:#000;font-size:11px;letter-spacing:0.1px;">_loa...</div>
<div class="a hx" style="left:989px;top:514px;width:34px;height:2px"></div>
<div class="a" style="left:1027px;top:493px;width:38px;height:25px;background:#8088c0;border-style:solid;border-width:1px;border-color:#b9bedc #575c83 #575c83 #b9bedc;box-shadow:inset 0 0 10px rgba(0,0,0,0.22);"></div>
<div class="a" style="left:1029px;top:502px;width:34px;height:14px;background:#4070c8;border-style:solid;border-width:1px;border-color:#96b0e1 #2c4c88 #2c4c88 #96b0e1;"></div>
<div class="a" style="left:1031px;top:507px;width:30px;height:6px;background:#90c890;border-style:solid;border-width:1px;border-color:#c2e1c2 #628862 #628862 #c2e1c2;"></div>
<div class="a" style="left:1065px;top:493px;width:37px;height:25px;background:#a8b830;border-style:solid;border-width:1px;border-color:#cfd88d #727d21 #727d21 #cfd88d;box-shadow:inset 0 0 10px rgba(0,0,0,0.22);"></div>
<div class="tl" style="left:1068.5px;top:496px;color:#000;font-size:11px;letter-spacing:0.1px;">get...</div>
<div class="a" style="left:1102px;top:493px;width:37px;height:25px;background:#c8a820;border-style:solid;border-width:1px;border-color:#e1cf84 #887216 #887216 #e1cf84;box-shadow:inset 0 0 10px rgba(0,0,0,0.22);"></div>
<div class="a" style="left:1104px;top:505px;width:32px;height:9px;background:#30c8e0;border-style:solid;border-width:1px;border-color:#8de1ee #218898 #218898 #8de1ee;"></div>
<div class="a hx" style="left:1104px;top:514px;width:32px;height:2px"></div>
<div class="a" style="left:1139px;top:493px;width:35px;height:25px;background:#c89040;border-style:solid;border-width:1px;border-color:#e1c296 #88622c #88622c #e1c296;box-shadow:inset 0 0 10px rgba(0,0,0,0.22);"></div>
<div class="tl" style="left:1142px;top:496px;color:#000;font-size:11px;letter-spacing:0.1px;">__ ...</div>
<div class="a" style="left:1174px;top:493px;width:33px;height:25px;background:#78b8b8;border-style:solid;border-width:1px;border-color:#b5d8d8 #527d7d #527d7d #b5d8d8;box-shadow:inset 0 0 10px rgba(0,0,0,0.22);"></div>
<div class="a" style="left:1176px;top:502px;width:26px;height:13px;background:#50b840;border-style:solid;border-width:1px;border-color:#9fd896 #367d2c #367d2c #9fd896;"></div>
<div class="a" style="left:1178px;top:506px;width:18px;height:5px;background:#c0d088;border-style:solid;border-width:1px;border-color:#dce5be #838d5c #838d5c #dce5be;"></div>
<div class="a hx" style="left:1180px;top:508px;width:18px;height:4px"></div>
<div class="a hx" style="left:1202px;top:502px;width:2px;height:12px"></div>
<div class="a" style="left:1207px;top:493px;width:33px;height:25px;background:#90b840;border-style:solid;border-width:1px;border-color:#c2d896 #627d2c #627d2c #c2d896;box-shadow:inset 0 0 10px rgba(0,0,0,0.22);"></div>
<div class="a" style="left:1209px;top:505px;width:16px;height:8px;background:#c8b898;border-style:solid;border-width:1px;border-color:#e1d8c6 #887d67 #887d67 #e1d8c6;"></div>
<div class="a hx" style="left:1211px;top:510px;width:12px;height:2px"></div>
<div class="a" style="left:1226px;top:505px;width:5px;height:8px;background:#70c820;border-style:solid;border-width:1px;border-color:#b0e184 #4c8816 #4c8816 #b0e184;"></div>
<div class="a hx" style="left:1232px;top:506px;width:5px;height:8px"></div>
<div class="a" style="left:1240px;top:493px;width:33px;height:25px;background:#98b840;border-style:solid;border-width:1px;border-color:#c6d896 #677d2c #677d2c #c6d896;box-shadow:inset 0 0 10px rgba(0,0,0,0.22);"></div>
<div class="a" style="left:1242px;top:507px;width:22px;height:7px;background:#90c8b0;border-style:solid;border-width:1px;border-color:#c2e1d4 #628878 #628878 #c2e1d4;"></div>
<div class="a hx" style="left:1244px;top:509px;width:18px;height:4px"></div>
<div class="a hx" style="left:1264px;top:507px;width:5px;height:8px"></div>
<div class="a" style="left:1273px;top:493px;width:33px;height:25px;background:#70c098;border-style:solid;border-width:1px;border-color:#b0dcc6 #4c8367 #4c8367 #b0dcc6;box-shadow:inset 0 0 10px rgba(0,0,0,0.22);"></div>
<div class="a" style="left:1275px;top:495px;width:28px;height:20px;background:#58b848;border-style:solid;border-width:1px;border-color:#a3d89a #3c7d31 #3c7d31 #a3d89a;box-shadow:inset 0 0 8px rgba(0,0,0,0.22);"></div>
<div class="a" style="left:1278px;top:502px;width:21px;height:9px;background:#c0d070;border-style:solid;border-width:1px;border-color:#dce5b0 #838d4c #838d4c #dce5b0;"></div>
<div class="a" style="left:1280px;top:504px;width:17px;height:5px;background:#a8c040;border-style:solid;border-width:1px;border-color:#cfdc96 #72832c #72832c #cfdc96;"></div>
<div class="a hx" style="left:1282px;top:505px;width:13px;height:3px"></div>
<div class="a" style="left:1306px;top:493px;width:32px;height:25px;background:#3030c8;border-style:solid;border-width:1px;border-color:#8d8de1 #212188 #212188 #8d8de1;box-shadow:inset 0 0 10px rgba(0,0,0,0.22);"></div>
<div class="tl" style="left:1309.5px;top:496px;color:#fff;font-size:11px;letter-spacing:0.1px;">sa...</div>
<div class="a" style="left:1308px;top:508px;width:28px;height:7px;background:#6848d0;border-style:solid;border-width:1px;border-color:#ac9ae5 #47318d #47318d #ac9ae5;"></div>
<div class="a" style="left:1338px;top:493px;width:31px;height:25px;background:#38c0a0;border-style:solid;border-width:1px;border-color:#92dccb #26836d #26836d #92dccb;box-shadow:inset 0 0 10px rgba(0,0,0,0.22);"></div>
<div class="tl" style="left:1341.5px;top:496px;color:#000;font-size:11px;letter-spacing:0.1px;">sa...</div>
<div class="a hx" style="left:1340px;top:514px;width:26px;height:2px"></div>
<div class="a" style="left:1369px;top:493px;width:30px;height:25px;background:#c0b030;border-style:solid;border-width:1px;border-color:#dcd48d #837821 #837821 #dcd48d;box-shadow:inset 0 0 10px rgba(0,0,0,0.22);"></div>
<div class="tl" style="left:1372.5px;top:496px;color:#000;font-size:11px;letter-spacing:0.1px;">de...</div>
<div class="a" style="left:1399px;top:493px;width:28px;height:25px;background:#8090c0;border-style:solid;border-width:1px;border-color:#b9c2dc #576283 #576283 #b9c2dc;box-shadow:inset 0 0 10px rgba(0,0,0,0.22);"></div>
<div class="a" style="left:1401px;top:495px;width:18px;height:17px;background:#50b840;border-style:solid;border-width:1px;border-color:#9fd896 #367d2c #367d2c #9fd896;"></div>
<div class="a" style="left:1403px;top:501px;width:12px;height:8px;background:#b8c870;border-style:solid;border-width:1px;border-color:#d8e1b0 #7d884c #7d884c #d8e1b0;"></div>
<div class="a hx" style="left:1405px;top:503px;width:8px;height:4px"></div>
<div class="a" style="left:1419px;top:495px;width:6px;height:17px;background:#30d080;border-style:solid;border-width:1px;border-color:#8de5b9 #218d57 #218d57 #8de5b9;"></div>
<div class="a hx" style="left:1421px;top:497px;width:1px;height:13px"></div>
<div class="a hx" style="left:1401px;top:512px;width:24px;height:3px"></div>
<div class="a" style="left:1427px;top:493px;width:28px;height:25px;background:#a8b820;border-style:solid;border-width:1px;border-color:#cfd884 #727d16 #727d16 #cfd884;box-shadow:inset 0 0 10px rgba(0,0,0,0.22);"></div>
<div class="tl" style="left:1430.5px;top:496px;color:#000;font-size:11px;letter-spacing:0.1px;">u...</div>
<div class="a" style="left:1455px;top:493px;width:28px;height:25px;background:#9098b8;border-style:solid;border-width:1px;border-color:#c2c6d8 #62677d #62677d #c2c6d8;box-shadow:inset 0 0 10px rgba(0,0,0,0.22);"></div>
<div class="tl" style="left:1458px;top:496px;color:#000;font-size:11px;letter-spacing:0.1px;">X...</div>
<div class="a hx" style="left:1457px;top:512px;width:23px;height:2px"></div>
<div class="a" style="left:1483px;top:493px;width:27px;height:25px;background:#d84030;border-style:solid;border-width:1px;border-color:#ea968d #932c21 #932c21 #ea968d;"></div>
<div class="a" style="left:1485px;top:497px;width:14px;height:17px;background:#30c8c0;border-style:solid;border-width:1px;border-color:#8de1dc #218883 #218883 #8de1dc;"></div>
<div class="a hx" style="left:1491px;top:499px;width:6px;height:13px"></div>
<div class="a" style="left:1500px;top:497px;width:8px;height:17px;background:#30c8e0;border-style:solid;border-width:1px;border-color:#8de1ee #218898 #218898 #8de1ee;"></div>
<div class="a hx" style="left:1503px;top:499px;width:2px;height:13px"></div>
<div class="a" style="left:1510px;top:493px;width:26px;height:25px;background:#60b840;border-style:solid;border-width:1px;border-color:#a8d896 #417d2c #417d2c #a8d896;box-shadow:inset 0 0 10px rgba(0,0,0,0.22);"></div>
<div class="tl" style="left:1513.5px;top:495px;color:#000;font-size:11px;letter-spacing:0.1px;">e...</div>
<div class="a" style="left:1512px;top:508px;width:21px;height:8px;background:#78c858;border-style:solid;border-width:1px;border-color:#b5e1a3 #52883c #52883c #b5e1a3;"></div>
<div class="a hx" style="left:1514px;top:511px;width:17px;height:3px"></div>
<div class="a" style="left:1536px;top:493px;width:24px;height:25px;background:#98b848;border-style:solid;border-width:1px;border-color:#c6d89a #677d31 #677d31 #c6d89a;box-shadow:inset 0 0 10px rgba(0,0,0,0.22);"></div>
<div class="a" style="left:1538px;top:495px;width:11px;height:11px;background:#30c830;border-style:solid;border-width:1px;border-color:#8de18d #218821 #218821 #8de18d;"></div>
<div class="a hx" style="left:1540px;top:497px;width:7px;height:7px"></div>
<div class="a hx" style="left:1549px;top:495px;width:9px;height:11px"></div>
<div class="a hx" style="left:1538px;top:506px;width:20px;height:10px"></div>
<div class="a" style="left:1560px;top:493px;width:24px;height:25px;background:#4830c8;border-style:solid;border-width:1px;border-color:#9a8de1 #312188 #312188 #9a8de1;box-shadow:inset 0 0 10px rgba(0,0,0,0.22);"></div>
<div class="a" style="left:1568px;top:495px;width:7px;height:9px;background:#a0b840;border-style:solid;border-width:1px;border-color:#cbd896 #6d7d2c #6d7d2c #cbd896;"></div>
<div class="a hx" style="left:1575px;top:495px;width:7px;height:9px"></div>
<div class="a hx" style="left:1568px;top:505px;width:14px;height:11px"></div>
<div class="a" style="left:1584px;top:493px;width:22px;height:25px;background:#4090d0;border-style:solid;border-width:1px;border-color:#96c2e5 #2c628d #2c628d #96c2e5;box-shadow:inset 0 0 9px rgba(0,0,0,0.22);"></div>
<div class="a" style="left:1586px;top:495px;width:16px;height:16px;background:#50a8d8;border-style:solid;border-width:1px;border-color:#9fcfea #367293 #367293 #9fcfea;"></div>
<div class="a" style="left:1588px;top:497px;width:8px;height:10px;background:#80c8a8;border-style:solid;border-width:1px;border-color:#b9e1cf #578872 #578872 #b9e1cf;"></div>
<div class="a hx" style="left:1597px;top:497px;width:4px;height:12px"></div>
<div class="a hx" style="left:1586px;top:511px;width:17px;height:5px"></div>
<div class="a" style="left:1606px;top:493px;width:22px;height:25px;background:#98b080;border-style:solid;border-width:1px;border-color:#c6d4b9 #677857 #677857 #c6d4b9;box-shadow:inset 0 0 9px rgba(0,0,0,0.22);"></div>
<div class="a hx" style="left:1617px;top:505px;width:1px;height:8px"></div>
<div class="a" style="left:1628px;top:493px;width:21px;height:25px;background:#3830c0;border-style:solid;border-width:1px;border-color:#928ddc #262183 #262183 #928ddc;box-shadow:inset 0 0 8px rgba(0,0,0,0.22);"></div>
<div class="a" style="left:1630px;top:495px;width:8px;height:10px;background:#9080d0;border-style:solid;border-width:1px;border-color:#c2b9e5 #62578d #62578d #c2b9e5;"></div>
<div class="a hx" style="left:1638px;top:495px;width:8px;height:10px"></div>
<div class="a hx" style="left:1630px;top:506px;width:16px;height:10px"></div>
<div class="a" style="left:1649px;top:493px;width:21px;height:25px;background:#d0a870;border-style:solid;border-width:1px;border-color:#e5cfb0 #8d724c #8d724c #e5cfb0;box-shadow:inset 0 0 8px rgba(0,0,0,0.22);"></div>
<div class="a hx" style="left:1651px;top:495px;width:17px;height:2px"></div>
<div class="a" style="left:1651px;top:497px;width:17px;height:17px;background:#2030d0;border-style:solid;border-width:1px;border-color:#848de5 #16218d #16218d #848de5;"></div>
<div class="a" style="left:1654px;top:500px;width:11px;height:11px;background:#60b840;border-style:solid;border-width:1px;border-color:#a8d896 #417d2c #417d2c #a8d896;"></div>
<div class="a hx" style="left:1656px;top:502px;width:7px;height:6px"></div>
<div class="a hx" style="left:1651px;top:514px;width:17px;height:2px"></div>
<div class="a" style="left:1670px;top:493px;width:19px;height:25px;background:#90b8a8;border-style:solid;border-width:1px;border-color:#c2d8cf #627d72 #627d72 #c2d8cf;box-shadow:inset 0 0 7px rgba(0,0,0,0.22);"></div>
<div class="vt" style="left:1673.0px;top:516px;color:#000;font-size:11px;letter-spacing:0.1px">X...</div>
<div class="a hx" style="left:1685px;top:496px;width:1px;height:18px"></div>
<div class="a" style="left:1689px;top:493px;width:19px;height:25px;background:#50a0d0;border-style:solid;border-width:1px;border-color:#9fcbe5 #366d8d #366d8d #9fcbe5;box-shadow:inset 0 0 7px rgba(0,0,0,0.22);"></div>
<div class="a hx" style="left:1701px;top:496px;width:3px;height:18px"></div>
<div class="a" style="left:1708px;top:493px;width:17px;height:25px;background:#98b830;border-style:solid;border-width:1px;border-color:#c6d88d #677d21 #677d21 #c6d88d;box-shadow:inset 0 0 7px rgba(0,0,0,0.22);"></div>
<div class="a hx" style="left:1719px;top:496px;width:3px;height:18px"></div>
<div class="a" style="left:1725px;top:493px;width:17px;height:25px;background:#48a8c8;border-style:solid;border-width:1px;border-color:#9acfe1 #317288 #317288 #9acfe1;box-shadow:inset 0 0 7px rgba(0,0,0,0.22);"></div>
<div class="a hx" style="left:1727px;top:495px;width:12px;height:3px"></div>
<div class="a" style="left:1727px;top:499px;width:13px;height:11px;background:#90c890;border-style:solid;border-width:1px;border-color:#c2e1c2 #628862 #628862 #c2e1c2;"></div>
<div class="a hx" style="left:1729px;top:502px;width:8px;height:5px"></div>
<div class="a hx" style="left:1727px;top:510px;width:12px;height:6px"></div>
<div class="a" style="left:1742px;top:493px;width:17px;height:25px;background:#7098b8;border-style:solid;border-width:1px;border-color:#b0c6d8 #4c677d #4c677d #b0c6d8;box-shadow:inset 0 0 7px rgba(0,0,0,0.22);"></div>
<div class="a" style="left:1759px;top:493px;width:16px;height:25px;background:#d85830;border-style:solid;border-width:1px;border-color:#eaa38d #933c21 #933c21 #eaa38d;box-shadow:inset 0 0 6px rgba(0,0,0,0.22);"></div>
<div class="a" style="left:1763px;top:495px;width:10px;height:10px;background:#90c890;border-style:solid;border-width:1px;border-color:#c2e1c2 #628862 #628862 #c2e1c2;"></div>
<div class="a hx" style="left:1765px;top:498px;width:6px;height:5px"></div>
<div class="a hx" style="left:1763px;top:505px;width:9px;height:11px"></div>
<div class="a" style="left:1775px;top:493px;width:15px;height:25px;background:#48b0d0;border-style:solid;border-width:1px;border-color:#9ad4e5 #31788d #31788d #9ad4e5;box-shadow:inset 0 0 6px rgba(0,0,0,0.22);"></div>
<div class="a hx" style="left:1780px;top:495px;width:7px;height:21px"></div>
<div class="a" style="left:1790px;top:493px;width:15px;height:25px;background:#b0b870;border-style:solid;border-width:1px;border-color:#d4d8b0 #787d4c #787d4c #d4d8b0;box-shadow:inset 0 0 6px rgba(0,0,0,0.22);"></div>
<div class="a" style="left:1805px;top:493px;width:14px;height:25px;background:#4030c8;border-style:solid;border-width:1px;border-color:#968de1 #2c2188 #2c2188 #968de1;box-shadow:inset 0 0 5px rgba(0,0,0,0.22);"></div>
<div class="a hx" style="left:1813px;top:496px;width:2px;height:19px"></div>
<div class="a" style="left:1819px;top:493px;width:15px;height:25px;background:#40c070;border-style:solid;border-width:1px;border-color:#96dcb0 #2c834c #2c834c #96dcb0;box-shadow:inset 0 0 6px rgba(0,0,0,0.22);"></div>
<div class="a" style="left:1834px;top:493px;width:14px;height:25px;background:#3838c8;border-style:solid;border-width:1px;border-color:#9292e1 #262688 #262688 #9292e1;box-shadow:inset 0 0 5px rgba(0,0,0,0.22);"></div>
<div class="a" style="left:902px;top:518px;width:24px;height:15px;background:#30c848;border-style:solid;border-width:1px;border-color:#8de19a #218831 #218831 #8de19a;"></div>
<div class="a" style="left:904px;top:522px;width:20px;height:8px;background:#30b0d8;border-style:solid;border-width:1px;border-color:#8dd4ea #217893 #217893 #8dd4ea;"></div>
<div class="a hx" style="left:906px;top:524px;width:16px;height:4px"></div>
<div class="a" style="left:926px;top:518px;width:24px;height:15px;background:#8080d0;border-style:solid;border-width:1px;border-color:#b9b9e5 #57578d #57578d #b9b9e5;"></div>
<div class="a" style="left:928px;top:522px;width:20px;height:8px;background:#90d0a8;border-style:solid;border-width:1px;border-color:#c2e5cf #628d72 #628d72 #c2e5cf;"></div>
<div class="a hx" style="left:930px;top:524px;width:16px;height:4px"></div>
<div class="a" style="left:950px;top:518px;width:23px;height:15px;background:#b8b840;border-style:solid;border-width:1px;border-color:#d8d896 #7d7d2c #7d7d2c #d8d896;"></div>
<div class="a hx" style="left:953px;top:528px;width:17px;height:2px"></div>
<div class="a" style="left:973px;top:518px;width:22px;height:15px;background:#c0b888;border-style:solid;border-width:1px;border-color:#dcd8be #837d5c #837d5c #dcd8be;"></div>
<div class="a hx" style="left:976px;top:528px;width:16px;height:2px"></div>
<div class="a" style="left:995px;top:518px;width:22px;height:15px;background:#a0b068;border-style:solid;border-width:1px;border-color:#cbd4ac #6d7847 #6d7847 #cbd4ac;"></div>
<div class="a" style="left:1017px;top:518px;width:21px;height:15px;background:#d04840;border-style:solid;border-width:1px;border-color:#e59a96 #8d312c #8d312c #e59a96;"></div>
<div class="a hx" style="left:1020px;top:528px;width:15px;height:2px"></div>
<div class="a" style="left:1038px;top:518px;width:21px;height:15px;background:#98b858;border-style:solid;border-width:1px;border-color:#c6d8a3 #677d3c #677d3c #c6d8a3;"></div>
<div class="a" style="left:1059px;top:518px;width:20px;height:15px;background:#58b0a8;border-style:solid;border-width:1px;border-color:#a3d4cf #3c7872 #3c7872 #a3d4cf;"></div>
<div class="a" style="left:1079px;top:518px;width:20px;height:15px;background:#c0b878;border-style:solid;border-width:1px;border-color:#dcd8b5 #837d52 #837d52 #dcd8b5;"></div>
<div class="a" style="left:1081px;top:522px;width:16px;height:8px;background:#e0c840;border-style:solid;border-width:1px;border-color:#eee196 #98882c #98882c #eee196;"></div>
<div class="a hx" style="left:1083px;top:524px;width:12px;height:4px"></div>
<div class="a" style="left:1099px;top:518px;width:19px;height:15px;background:#90c8c0;border-style:solid;border-width:1px;border-color:#c2e1dc #628883 #628883 #c2e1dc;"></div>
<div class="a" style="left:1101px;top:522px;width:15px;height:8px;background:#30c830;border-style:solid;border-width:1px;border-color:#8de18d #218821 #218821 #8de18d;"></div>
<div class="a hx" style="left:1103px;top:524px;width:11px;height:4px"></div>
<div class="a" style="left:1118px;top:518px;width:19px;height:15px;background:#7060d0;border-style:solid;border-width:1px;border-color:#b0a8e5 #4c418d #4c418d #b0a8e5;"></div>
<div class="a" style="left:1120px;top:522px;width:15px;height:8px;background:#88a8c8;border-style:solid;border-width:1px;border-color:#becfe1 #5c7288 #5c7288 #becfe1;"></div>
<div class="a hx" style="left:1122px;top:524px;width:11px;height:4px"></div>
<div class="a" style="left:1137px;top:518px;width:19px;height:15px;background:#38c858;border-style:solid;border-width:1px;border-color:#92e1a3 #26883c #26883c #92e1a3;"></div>
<div class="a" style="left:1156px;top:518px;width:18px;height:15px;background:#b0c038;border-style:solid;border-width:1px;border-color:#d4dc92 #788326 #788326 #d4dc92;"></div>
<div class="a" style="left:1158px;top:522px;width:14px;height:8px;background:#98c8d8;border-style:solid;border-width:1px;border-color:#c6e1ea #678893 #678893 #c6e1ea;"></div>
<div class="a hx" style="left:1160px;top:524px;width:10px;height:4px"></div>
<div class="a" style="left:1174px;top:518px;width:18px;height:15px;background:#e08860;border-style:solid;border-width:1px;border-color:#eebea8 #985c41 #985c41 #eebea8;"></div>
<div class="a" style="left:1176px;top:522px;width:14px;height:8px;background:#50c040;border-style:solid;border-width:1px;border-color:#9fdc96 #36832c #36832c #9fdc96;"></div>
<div class="a hx" style="left:1178px;top:524px;width:10px;height:4px"></div>
<div class="a" style="left:1192px;top:518px;width:18px;height:15px;background:#98b820;border-style:solid;border-width:1px;border-color:#c6d884 #677d16 #677d16 #c6d884;"></div>
<div class="a hx" style="left:1195px;top:528px;width:12px;height:2px"></div>
<div class="a" style="left:1210px;top:518px;width:18px;height:15px;background:#40a8c8;border-style:solid;border-width:1px;border-color:#96cfe1 #2c7288 #2c7288 #96cfe1;"></div>
<div class="a" style="left:1212px;top:522px;width:14px;height:8px;background:#7098d0;border-style:solid;border-width:1px;border-color:#b0c6e5 #4c678d #4c678d #b0c6e5;"></div>
<div class="a hx" style="left:1214px;top:524px;width:10px;height:4px"></div>
<div class="a" style="left:1228px;top:518px;width:17px;height:15px;background:#c0b078;border-style:solid;border-width:1px;border-color:#dcd4b5 #837852 #837852 #dcd4b5;"></div>
<div class="a hx" style="left:1231px;top:528px;width:11px;height:2px"></div>
<div class="a" style="left:1245px;top:518px;width:17px;height:15px;background:#d09078;border-style:solid;border-width:1px;border-color:#e5c2b5 #8d6252 #8d6252 #e5c2b5;"></div>
<div class="a hx" style="left:1248px;top:521px;width:11px;height:9px"></div>
<div class="a" style="left:1262px;top:518px;width:17px;height:15px;background:#88b8b0;border-style:solid;border-width:1px;border-color:#bed8d4 #5c7d78 #5c7d78 #bed8d4;"></div>
<div class="a hx" style="left:1265px;top:528px;width:11px;height:2px"></div>
<div class="a" style="left:1279px;top:518px;width:17px;height:15px;background:#30d0c0;border-style:solid;border-width:1px;border-color:#8de5dc #218d83 #218d83 #8de5dc;"></div>
<div class="a" style="left:1281px;top:522px;width:13px;height:8px;background:#50c040;border-style:solid;border-width:1px;border-color:#9fdc96 #36832c #36832c #9fdc96;"></div>
<div class="a hx" style="left:1283px;top:524px;width:9px;height:4px"></div>
<div class="a" style="left:1296px;top:518px;width:17px;height:15px;background:#30a0e0;border-style:solid;border-width:1px;border-color:#8dcbee #216d98 #216d98 #8dcbee;"></div>
<div class="a" style="left:1298px;top:522px;width:13px;height:8px;background:#70c0e0;border-style:solid;border-width:1px;border-color:#b0dcee #4c8398 #4c8398 #b0dcee;"></div>
<div class="a hx" style="left:1300px;top:524px;width:9px;height:4px"></div>
<div class="a" style="left:1313px;top:518px;width:16px;height:15px;background:#90b888;border-style:solid;border-width:1px;border-color:#c2d8be #627d5c #627d5c #c2d8be;"></div>
<div class="a hx" style="left:1316px;top:528px;width:10px;height:2px"></div>
<div class="a" style="left:1329px;top:518px;width:16px;height:15px;background:#c8c040;border-style:solid;border-width:1px;border-color:#e1dc96 #88832c #88832c #e1dc96;"></div>
<div class="a hx" style="left:1332px;top:521px;width:10px;height:9px"></div>
<div class="a" style="left:1345px;top:518px;width:16px;height:15px;background:#98b070;border-style:solid;border-width:1px;border-color:#c6d4b0 #67784c #67784c #c6d4b0;"></div>
<div class="a" style="left:1361px;top:518px;width:16px;height:15px;background:#5038c8;border-style:solid;border-width:1px;border-color:#9f92e1 #362688 #362688 #9f92e1;"></div>
<div class="a hx" style="left:1364px;top:521px;width:10px;height:9px"></div>
<div class="a" style="left:1377px;top:518px;width:15px;height:15px;background:#c8a050;border-style:solid;border-width:1px;border-color:#e1cb9f #886d36 #886d36 #e1cb9f;"></div>
<div class="a hx" style="left:1380px;top:528px;width:9px;height:2px"></div>
<div class="a" style="left:1392px;top:518px;width:15px;height:15px;background:#30b098;border-style:solid;border-width:1px;border-color:#8dd4c6 #217867 #217867 #8dd4c6;"></div>
<div class="a hx" style="left:1395px;top:528px;width:9px;height:2px"></div>
<div class="a" style="left:1407px;top:518px;width:14px;height:15px;background:#c8c860;border-style:solid;border-width:1px;border-color:#e1e1a8 #888841 #888841 #e1e1a8;"></div>
<div class="a" style="left:1409px;top:522px;width:10px;height:8px;background:#90a8c8;border-style:solid;border-width:1px;border-color:#c2cfe1 #627288 #627288 #c2cfe1;"></div>
<div class="a hx" style="left:1411px;top:524px;width:6px;height:4px"></div>
<div class="a" style="left:1421px;top:518px;width:14px;height:15px;background:#78a8c0;border-style:solid;border-width:1px;border-color:#b5cfdc #527283 #527283 #b5cfdc;"></div>
<div class="a hx" style="left:1424px;top:521px;width:8px;height:9px"></div>
<div class="a" style="left:1435px;top:518px;width:13px;height:15px;background:#40b880;border-style:solid;border-width:1px;border-color:#96d8b9 #2c7d57 #2c7d57 #96d8b9;"></div>
<div class="a" style="left:1448px;top:518px;width:13px;height:15px;background:#50c048;border-style:solid;border-width:1px;border-color:#9fdc9a #368331 #368331 #9fdc9a;"></div>
<div class="a hx" style="left:1451px;top:521px;width:7px;height:9px"></div>
<div class="a" style="left:1461px;top:518px;width:13px;height:15px;background:#90c0b0;border-style:solid;border-width:1px;border-color:#c2dcd4 #628378 #628378 #c2dcd4;"></div>
<div class="a hx" style="left:1464px;top:521px;width:7px;height:9px"></div>
<div class="a" style="left:1474px;top:518px;width:13px;height:15px;background:#1818c0;border-style:solid;border-width:1px;border-color:#8080dc #101083 #101083 #8080dc;"></div>
<div class="a hx" style="left:1477px;top:521px;width:7px;height:9px"></div>
<div class="a" style="left:1487px;top:518px;width:12px;height:15px;background:#c8b058;border-style:solid;border-width:1px;border-color:#e1d4a3 #88783c #88783c #e1d4a3;"></div>
<div class="a" style="left:1499px;top:518px;width:12px;height:15px;background:#80c0a8;border-style:solid;border-width:1px;border-color:#b9dccf #578372 #578372 #b9dccf;"></div>
<div class="a hx" style="left:1502px;top:521px;width:6px;height:9px"></div>
<div class="a" style="left:1511px;top:518px;width:12px;height:15px;background:#7090c8;border-style:solid;border-width:1px;border-color:#b0c2e1 #4c6288 #4c6288 #b0c2e1;"></div>
<div class="a hx" style="left:1514px;top:521px;width:6px;height:9px"></div>
<div class="a" style="left:1523px;top:518px;width:11px;height:15px;background:#b8b868;border-style:solid;border-width:1px;border-color:#d8d8ac #7d7d47 #7d7d47 #d8d8ac;"></div>
<div class="a" style="left:1534px;top:518px;width:11px;height:15px;background:#c89848;border-style:solid;border-width:1px;border-color:#e1c69a #886731 #886731 #e1c69a;"></div>
<div class="a" style="left:1545px;top:518px;width:11px;height:15px;background:#38a8c8;border-style:solid;border-width:1px;border-color:#92cfe1 #267288 #267288 #92cfe1;"></div>
<div class="a" style="left:1556px;top:518px;width:11px;height:15px;background:#30c858;border-style:solid;border-width:1px;border-color:#8de1a3 #21883c #21883c #8de1a3;"></div>
<div class="a hx" style="left:1559px;top:521px;width:5px;height:9px"></div>
<div class="a" style="left:1567px;top:518px;width:11px;height:15px;background:#a8b820;border-style:solid;border-width:1px;border-color:#cfd884 #727d16 #727d16 #cfd884;"></div>
<div class="a" style="left:1578px;top:518px;width:11px;height:15px;background:#98b868;border-style:solid;border-width:1px;border-color:#c6d8ac #677d47 #677d47 #c6d8ac;"></div>
<div class="a hx" style="left:1581px;top:528px;width:5px;height:2px"></div>
<div class="a" style="left:1589px;top:518px;width:10px;height:15px;background:#c87850;border-style:solid;border-width:1px;border-color:#e1b59f #885236 #885236 #e1b59f;"></div>
<div class="a hx" style="left:1592px;top:521px;width:4px;height:9px"></div>
<div class="a" style="left:1599px;top:518px;width:10px;height:15px;background:#a8c038;border-style:solid;border-width:1px;border-color:#cfdc92 #728326 #728326 #cfdc92;"></div>
<div class="a hx" style="left:1602px;top:521px;width:4px;height:9px"></div>
<div class="a" style="left:1609px;top:518px;width:10px;height:15px;background:#6090c8;border-style:solid;border-width:1px;border-color:#a8c2e1 #416288 #416288 #a8c2e1;"></div>
<div class="a hx" style="left:1612px;top:528px;width:4px;height:2px"></div>
<div class="a" style="left:1619px;top:518px;width:10px;height:15px;background:#3870d0;border-style:solid;border-width:1px;border-color:#92b0e5 #264c8d #264c8d #92b0e5;"></div>
<div class="a hx" style="left:1622px;top:528px;width:4px;height:2px"></div>
<div class="a" style="left:1629px;top:518px;width:10px;height:15px;background:#c07850;border-style:solid;border-width:1px;border-color:#dcb59f #835236 #835236 #dcb59f;"></div>
<div class="a hx" style="left:1632px;top:528px;width:4px;height:2px"></div>
<div class="a" style="left:1639px;top:518px;width:9px;height:15px;background:#68b818;border-style:solid;border-width:1px;border-color:#acd880 #477d10 #477d10 #acd880;"></div>
<div class="a" style="left:1648px;top:518px;width:9px;height:15px;background:#58b8a0;border-style:solid;border-width:1px;border-color:#a3d8cb #3c7d6d #3c7d6d #a3d8cb;"></div>
<div class="a" style="left:1657px;top:518px;width:9px;height:15px;background:#98c038;border-style:solid;border-width:1px;border-color:#c6dc92 #678326 #678326 #c6dc92;"></div>
<div class="a hx" style="left:1660px;top:521px;width:3px;height:9px"></div>
<div class="a" style="left:1666px;top:518px;width:9px;height:15px;background:#30c8a0;border-style:solid;border-width:1px;border-color:#8de1cb #21886d #21886d #8de1cb;"></div>
<div class="a" style="left:1675px;top:518px;width:9px;height:15px;background:#88b830;border-style:solid;border-width:1px;border-color:#bed88d #5c7d21 #5c7d21 #bed88d;"></div>
<div class="a" style="left:1684px;top:518px;width:9px;height:15px;background:#38a8c8;border-style:solid;border-width:1px;border-color:#92cfe1 #267288 #267288 #92cfe1;"></div>
<div class="a hx" style="left:1687px;top:521px;width:3px;height:9px"></div>
<div class="a" style="left:1693px;top:518px;width:9px;height:15px;background:#d88030;border-style:solid;border-width:1px;border-color:#eab98d #935721 #935721 #eab98d;"></div>
<div class="a" style="left:1702px;top:518px;width:9px;height:15px;background:#9890d0;border-style:solid;border-width:1px;border-color:#c6c2e5 #67628d #67628d #c6c2e5;"></div>
<div class="a" style="left:1711px;top:518px;width:8px;height:15px;background:#6878d0;border-style:solid;border-width:1px;border-color:#acb5e5 #47528d #47528d #acb5e5;"></div>
<div class="a hx" style="left:1714px;top:521px;width:2px;height:9px"></div>
<div class="a" style="left:1719px;top:518px;width:8px;height:15px;background:#70c028;border-style:solid;border-width:1px;border-color:#b0dc89 #4c831b #4c831b #b0dc89;"></div>
<div class="a hx" style="left:1722px;top:528px;width:2px;height:2px"></div>
<div class="a" style="left:1727px;top:518px;width:8px;height:15px;background:#30d030;border-style:solid;border-width:1px;border-color:#8de58d #218d21 #218d21 #8de58d;"></div>
<div class="a hx" style="left:1730px;top:528px;width:2px;height:2px"></div>
<div class="a" style="left:1735px;top:518px;width:8px;height:15px;background:#b0d080;border-style:solid;border-width:1px;border-color:#d4e5b9 #788d57 #788d57 #d4e5b9;"></div>
<div class="a hx" style="left:1738px;top:528px;width:2px;height:2px"></div>
<div class="a" style="left:1743px;top:518px;width:7px;height:15px;background:#a8d078;border-style:solid;border-width:1px;border-color:#cfe5b5 #728d52 #728d52 #cfe5b5;"></div>
<div class="a hx" style="left:1746px;top:528px;width:1px;height:2px"></div>
<div class="a" style="left:1750px;top:518px;width:7px;height:15px;background:#d88050;border-style:solid;border-width:1px;border-color:#eab99f #935736 #935736 #eab99f;"></div>
<div class="a" style="left:1757px;top:518px;width:7px;height:15px;background:#60c820;border-style:solid;border-width:1px;border-color:#a8e184 #418816 #418816 #a8e184;"></div>
<div class="a hx" style="left:1760px;top:528px;width:1px;height:2px"></div>
<div class="a" style="left:1764px;top:518px;width:7px;height:15px;background:#9080d8;border-style:solid;border-width:1px;border-color:#c2b9ea #625793 #625793 #c2b9ea;"></div>
<div class="a hx" style="left:1767px;top:528px;width:1px;height:2px"></div>
<div class="a" style="left:1771px;top:518px;width:7px;height:15px;background:#d8c898;border-style:solid;border-width:1px;border-color:#eae1c6 #938867 #938867 #eae1c6;"></div>
<div class="a hx" style="left:1774px;top:528px;width:1px;height:2px"></div>
<div class="a" style="left:1778px;top:518px;width:7px;height:15px;background:#d83030;border-style:solid;border-width:1px;border-color:#ea8d8d #932121 #932121 #ea8d8d;"></div>
<div class="a" style="left:1785px;top:518px;width:7px;height:15px;background:#30d040;border-style:solid;border-width:1px;border-color:#8de596 #218d2c #218d2c #8de596;"></div>
<div class="a hx" style="left:1788px;top:528px;width:1px;height:2px"></div>
<div class="a" style="left:1792px;top:518px;width:7px;height:15px;background:#c8c820;border-style:solid;border-width:1px;border-color:#e1e184 #888816 #888816 #e1e184;"></div>
<div class="a" style="left:1799px;top:518px;width:7px;height:15px;background:#2830d0;border-style:solid;border-width:1px;border-color:#898de5 #1b218d #1b218d #898de5;"></div>
<div class="a hx" style="left:1802px;top:528px;width:1px;height:2px"></div>
<div class="a" style="left:1806px;top:518px;width:6px;height:15px;background:#e07020;border-style:solid;border-width:1px;border-color:#eeb084 #984c16 #984c16 #eeb084;"></div>
<div class="a" style="left:1812px;top:518px;width:6px;height:15px;background:#d8d030;border-style:solid;border-width:1px;border-color:#eae58d #938d21 #938d21 #eae58d;"></div>
<div class="a" style="left:1818px;top:518px;width:6px;height:15px;background:#30d0c0;border-style:solid;border-width:1px;border-color:#8de5dc #218d83 #218d83 #8de5dc;"></div>
<div class="a" style="left:1824px;top:518px;width:6px;height:15px;background:#50a8d8;border-style:solid;border-width:1px;border-color:#9fcfea #367293 #367293 #9fcfea;"></div>
<div class="a" style="left:1830px;top:518px;width:6px;height:15px;background:#60a0d8;border-style:solid;border-width:1px;border-color:#a8cbea #416d93 #416d93 #a8cbea;"></div>
<div class="a" style="left:1836px;top:518px;width:6px;height:15px;background:#90d098;border-style:solid;border-width:1px;border-color:#c2e5c6 #628d67 #628d67 #c2e5c6;"></div>
<div class="a hx" style="left:1842px;top:518px;width:6px;height:15px"></div>
<div class="a" style="left:1905px;top:129px;width:2px;height:420px;background:#a0b018;"></div>
<div class="a" style="left:1850px;top:129px;width:55px;height:414px;background:#88c858;border-style:solid;border-width:1px;border-color:#bee1a3 #5c883c #5c883c #bee1a3;"></div>
<div class="a" style="left:1852px;top:131px;width:51px;height:409px;background:#30b0c8;border-style:solid;border-width:1px;border-color:#8dd4e1 #217888 #217888 #8dd4e1;"></div>
<div class="a" style="left:1854px;top:133px;width:47px;height:404px;background:#bcbc68;border-style:solid;border-width:1px;border-color:#dadaac #808047 #808047 #dadaac;"></div>
<div class="a" style="left:1856px;top:135px;width:44px;height:175px;background:#d85c20;border-style:solid;border-width:1px;border-color:#eaa584 #933f16 #933f16 #eaa584;"></div>
<div class="a" style="left:1858px;top:137px;width:40px;height:59px;background:#7088c8;border-style:solid;border-width:1px;border-color:#b0bee1 #4c5c88 #4c5c88 #b0bee1;"></div>
<div class="a" style="left:1860px;top:139px;width:36px;height:54px;background:#20d050;border-style:solid;border-width:1px;border-color:#84e59f #168d36 #168d36 #84e59f;"></div>
<div class="a" style="left:1862px;top:141px;width:31px;height:50px;background:#c07828;border-style:solid;border-width:1px;border-color:#dcb589 #83521b #83521b #dcb589;box-shadow:inset 0 0 13px rgba(0,0,0,0.22);"></div>
<div class="a hx" style="left:1860px;top:193px;width:36px;height:2px"></div>
<div class="vt" style="left:1865.5px;top:189px;color:#000;font-size:11px;letter-spacing:0.1px">php::</div>
<div class="vt" style="left:1878.5px;top:189px;color:#000;font-size:11px;letter-spacing:0.1px">mysqli...</div>
<div class="a" style="left:1858px;top:197px;width:26px;height:35px;background:#e8dca0;border-style:solid;border-width:1px;border-color:#f2eccb #9e966d #9e966d #f2eccb;box-shadow:inset 0 0 10px rgba(0,0,0,0.22);"></div>
<div class="a hx" style="left:1879px;top:200px;width:4px;height:30px"></div>
<div class="vt" style="left:1863.5px;top:229px;color:#000;font-size:11px;letter-spacing:0.1px">PM...</div>
<div class="a" style="left:1884px;top:197px;width:13px;height:35px;background:#50b8b0;border-style:solid;border-width:1px;border-color:#9fd8d4 #367d78 #367d78 #9fd8d4;"></div>
<div class="a" style="left:1891px;top:199px;width:3px;height:29px;background:#b0d830;"></div>
<div class="a" style="left:1858px;top:232px;width:20px;height:16px;background:#7090c8;border-style:solid;border-width:1px;border-color:#b0c2e1 #4c6288 #4c6288 #b0c2e1;"></div>
<div class="a" style="left:1860px;top:234px;width:16px;height:11px;background:#90c8c0;border-style:solid;border-width:1px;border-color:#c2e1dc #628883 #628883 #c2e1dc;"></div>
<div class="a hx" style="left:1862px;top:236px;width:12px;height:7px"></div>
<div class="a" style="left:1878px;top:232px;width:10px;height:16px;background:#20d030;border-style:solid;border-width:1px;border-color:#84e58d #168d21 #168d21 #84e58d;"></div>
<div class="a hx" style="left:1880px;top:234px;width:6px;height:12px"></div>
<div class="a" style="left:1888px;top:232px;width:9px;height:16px;background:#d08070;border-style:solid;border-width:1px;border-color:#e5b9b0 #8d574c #8d574c #e5b9b0;"></div>
<div class="a hx" style="left:1891px;top:234px;width:3px;height:12px"></div>
<div class="a" style="left:1858px;top:248px;width:11px;height:10px;background:#3070d0;border-style:solid;border-width:1px;border-color:#8db0e5 #214c8d #214c8d #8db0e5;"></div>
<div class="a hx" style="left:1861px;top:252px;width:5px;height:2px"></div>
<div class="a" style="left:1869px;top:248px;width:10px;height:10px;background:#a0c8a0;border-style:solid;border-width:1px;border-color:#cbe1cb #6d886d #6d886d #cbe1cb;"></div>
<div class="a hx" style="left:1872px;top:251px;width:4px;height:4px"></div>
<div class="a" style="left:1879px;top:248px;width:9px;height:10px;background:#80d0b0;border-style:solid;border-width:1px;border-color:#b9e5d4 #578d78 #578d78 #b9e5d4;"></div>
<div class="a hx" style="left:1882px;top:251px;width:3px;height:4px"></div>
<div class="a hx" style="left:1888px;top:248px;width:9px;height:10px"></div>
<div class="a hx" style="left:1858px;top:258px;width:39px;height:50px"></div>
<div class="a" style="left:1856px;top:310px;width:44px;height:139px;background:#c8c078;border-style:solid;border-width:1px;border-color:#e1dcb5 #888352 #888352 #e1dcb5;"></div>
<div class="a" style="left:1857px;top:311px;width:2px;height:137px;background:#f0e8a8;"></div>
<div class="a" style="left:1858px;top:312px;width:39px;height:122px;background:#b8d0d0;border-style:solid;border-width:1px;border-color:#d8e5e5 #7d8d8d #7d8d8d #d8e5e5;"></div>
<div class="a" style="left:1860px;top:314px;width:35px;height:116px;background:#3080d8;border-style:solid;border-width:1px;border-color:#8db9ea #215793 #215793 #8db9ea;"></div>
<div class="a" style="left:1862px;top:316px;width:31px;height:56px;background:#40a0e0;border-style:solid;border-width:1px;border-color:#96cbee #2c6d98 #2c6d98 #96cbee;"></div>
<div class="a" style="left:1864px;top:318px;width:27px;height:43px;background:#c0c080;border-style:solid;border-width:1px;border-color:#dcdcb9 #838357 #838357 #dcdcb9;"></div>
<div class="a" style="left:1866px;top:320px;width:23px;height:36px;background:#6870c8;border-style:solid;border-width:1px;border-color:#acb0e1 #474c88 #474c88 #acb0e1;box-shadow:inset 0 0 9px rgba(0,0,0,0.22);"></div>
<div class="a hx" style="left:1877px;top:322px;width:9px;height:31px"></div>
<div class="a" style="left:1877px;top:326px;width:9px;height:8px;background:#a0b8d0;border-style:solid;border-width:1px;border-color:#cbd8e5 #6d7d8d #6d7d8d #cbd8e5;"></div>
<div class="a hx" style="left:1879px;top:329px;width:5px;height:3px"></div>
<div class="a hx" style="left:1866px;top:356px;width:23px;height:4px"></div>
<div class="a" style="left:1864px;top:362px;width:28px;height:10px;background:#38a8e0;border-style:solid;border-width:1px;border-color:#92cfee #267298 #267298 #92cfee;"></div>
<div class="a" style="left:1866px;top:364px;width:13px;height:4px;background:#30d030;border-style:solid;border-width:1px;border-color:#8de58d #218d21 #218d21 #8de58d;"></div>
<div class="a hx" style="left:1879px;top:364px;width:11px;height:4px"></div>
<div class="a hx" style="left:1864px;top:368px;width:28px;height:3px"></div>
<div class="a" style="left:1862px;top:373px;width:31px;height:27px;background:#d0a880;border-style:solid;border-width:1px;border-color:#e5cfb9 #8d7257 #8d7257 #e5cfb9;"></div>
<div class="a" style="left:1864px;top:375px;width:27px;height:23px;background:#60c040;border-style:solid;border-width:1px;border-color:#a8dc96 #41832c #41832c #a8dc96;"></div>
<div class="a" style="left:1866px;top:377px;width:23px;height:19px;background:#30d860;border-style:solid;border-width:1px;border-color:#8deaa8 #219341 #219341 #8deaa8;"></div>
<div class="a" style="left:1868px;top:379px;width:19px;height:15px;background:#50c090;border-style:solid;border-width:1px;border-color:#9fdcc2 #368362 #368362 #9fdcc2;"></div>
<div class="a" style="left:1870px;top:381px;width:10px;height:10px;background:#d86020;border-style:solid;border-width:1px;border-color:#eaa884 #934116 #934116 #eaa884;"></div>
<div class="a hx" style="left:1873px;top:384px;width:5px;height:4px"></div>
<div class="a hx" style="left:1880px;top:380px;width:6px;height:14px"></div>
<div class="a hx" style="left:1868px;top:392px;width:18px;height:3px"></div>
<div class="a" style="left:1862px;top:401px;width:31px;height:28px;background:#4080d0;border-style:solid;border-width:1px;border-color:#96b9e5 #2c578d #2c578d #96b9e5;"></div>
<div class="a" style="left:1864px;top:403px;width:17px;height:16px;background:#d86020;border-style:solid;border-width:1px;border-color:#eaa884 #934116 #934116 #eaa884;"></div>
<div class="a hx" style="left:1866px;top:405px;width:13px;height:12px"></div>
<div class="a" style="left:1883px;top:403px;width:10px;height:16px;background:#d86020;border-style:solid;border-width:1px;border-color:#eaa884 #934116 #934116 #eaa884;"></div>
<div class="a hx" style="left:1885px;top:405px;width:6px;height:12px"></div>
<div class="a" style="left:1862px;top:421px;width:15px;height:6px;background:#90d0c0;border-style:solid;border-width:1px;border-color:#c2e5dc #628d83 #628d83 #c2e5dc;"></div>
<div class="a hx" style="left:1864px;top:423px;width:11px;height:3px"></div>
<div class="a" style="left:1878px;top:421px;width:8px;height:6px;background:#d86020;border-style:solid;border-width:1px;border-color:#eaa884 #934116 #934116 #eaa884;"></div>
<div class="a hx" style="left:1886px;top:420px;width:7px;height:8px"></div>
<div class="a" style="left:1860px;top:430px;width:21px;height:3px;background:#50d030;"></div>
<div class="a hx" style="left:1881px;top:430px;width:14px;height:4px"></div>
<div class="a" style="left:1858px;top:436px;width:27px;height:11px;background:#80c080;border-style:solid;border-width:1px;border-color:#b9dcb9 #578357 #578357 #b9dcb9;"></div>
<div class="a" style="left:1860px;top:438px;width:12px;height:5px;background:#2898d0;border-style:solid;border-width:1px;border-color:#89c6e5 #1b678d #1b678d #89c6e5;"></div>
<div class="a hx" style="left:1872px;top:438px;width:11px;height:7px"></div>
<div class="a" style="left:1886px;top:436px;width:6px;height:11px;background:#e09088;border-style:solid;border-width:1px;border-color:#eec2be #98625c #98625c #eec2be;"></div>
<div class="a hx" style="left:1888px;top:439px;width:2px;height:5px"></div>
<div class="a hx" style="left:1892px;top:436px;width:5px;height:11px"></div>
<div class="a" style="left:1856px;top:450px;width:24px;height:24px;background:#a0a0d8;border-style:solid;border-width:1px;border-color:#cbcbea #6d6d93 #6d6d93 #cbcbea;"></div>
<div class="a" style="left:1858px;top:452px;width:21px;height:20px;background:#d86020;border-style:solid;border-width:1px;border-color:#eaa884 #934116 #934116 #eaa884;"></div>
<div class="a" style="left:1860px;top:454px;width:11px;height:7px;background:#8090c8;border-style:solid;border-width:1px;border-color:#b9c2e1 #576288 #576288 #b9c2e1;"></div>
<div class="a hx" style="left:1860px;top:462px;width:17px;height:9px"></div>
<div class="a hx" style="left:1872px;top:453px;width:6px;height:9px"></div>
<div class="a" style="left:1881px;top:450px;width:18px;height:24px;background:#d86020;border-style:solid;border-width:1px;border-color:#eaa884 #934116 #934116 #eaa884;"></div>
<div class="a" style="left:1883px;top:452px;width:9px;height:9px;background:#8090c8;border-style:solid;border-width:1px;border-color:#b9c2e1 #576288 #576288 #b9c2e1;"></div>
<div class="a hx" style="left:1883px;top:462px;width:14px;height:10px"></div>
<div class="a hx" style="left:1893px;top:453px;width:4px;height:9px"></div>
<div class="a" style="left:1856px;top:475px;width:18px;height:23px;background:#50b8d0;border-style:solid;border-width:1px;border-color:#9fd8e5 #367d8d #367d8d #9fd8e5;"></div>
<div class="a" style="left:1858px;top:477px;width:14px;height:17px;background:#d86020;border-style:solid;border-width:1px;border-color:#eaa884 #934116 #934116 #eaa884;"></div>
<div class="a hx" style="left:1860px;top:479px;width:10px;height:13px"></div>
<div class="a hx" style="left:1858px;top:494px;width:14px;height:3px"></div>
<div class="a" style="left:1874px;top:475px;width:12px;height:23px;background:#d86020;border-style:solid;border-width:1px;border-color:#eaa884 #934116 #934116 #eaa884;"></div>
<div class="a hx" style="left:1876px;top:477px;width:8px;height:19px"></div>
<div class="a" style="left:1887px;top:475px;width:12px;height:23px;background:#d07850;border-style:solid;border-width:1px;border-color:#e5b59f #8d5236 #8d5236 #e5b59f;"></div>
<div class="a hx" style="left:1889px;top:477px;width:8px;height:19px"></div>
<div class="a" style="left:1856px;top:498px;width:16px;height:18px;background:#20d020;border-style:solid;border-width:1px;border-color:#84e584 #168d16 #168d16 #84e584;"></div>
<div class="a hx" style="left:1858px;top:500px;width:12px;height:5px"></div>
<div class="a" style="left:1859px;top:507px;width:10px;height:6px;background:#60d060;border-style:solid;border-width:1px;border-color:#a8e5a8 #418d41 #418d41 #a8e5a8;"></div>
<div class="a hx" style="left:1861px;top:509px;width:6px;height:2px"></div>
<div class="a" style="left:1872px;top:498px;width:14px;height:18px;background:#30d030;border-style:solid;border-width:1px;border-color:#8de58d #218d21 #218d21 #8de58d;"></div>
<div class="a" style="left:1874px;top:500px;width:9px;height:11px;background:#d03030;border-style:solid;border-width:1px;border-color:#e58d8d #8d2121 #8d2121 #e58d8d;"></div>
<div class="a hx" style="left:1876px;top:502px;width:5px;height:8px"></div>
<div class="a hx" style="left:1875px;top:512px;width:9px;height:3px"></div>
<div class="a" style="left:1886px;top:498px;width:13px;height:18px;background:#30d8e0;border-style:solid;border-width:1px;border-color:#8deaee #219398 #219398 #8deaee;"></div>
<div class="a" style="left:1888px;top:500px;width:9px;height:13px;background:#d86020;border-style:solid;border-width:1px;border-color:#eaa884 #934116 #934116 #eaa884;"></div>
<div class="a hx" style="left:1890px;top:502px;width:5px;height:9px"></div>
<div class="a" style="left:1856px;top:516px;width:16px;height:10px;background:#d8c878;border-style:solid;border-width:1px;border-color:#eae1b5 #938852 #938852 #eae1b5;"></div>
<div class="a hx" style="left:1858px;top:518px;width:12px;height:6px"></div>
<div class="a" style="left:1872px;top:516px;width:13px;height:10px;background:#7060d8;border-style:solid;border-width:1px;border-color:#b0a8ea #4c4193 #4c4193 #b0a8ea;"></div>
<div class="a hx" style="left:1874px;top:518px;width:9px;height:6px"></div>
<div class="a" style="left:1886px;top:516px;width:4px;height:10px;background:#e0b880;border-style:solid;border-width:1px;border-color:#eed8b9 #987d57 #987d57 #eed8b9;"></div>
<div class="a hx" style="left:1890px;top:516px;width:9px;height:10px"></div>
<div class="a hx" style="left:1856px;top:526px;width:43px;height:10px"></div>
<div class="a" style="left:1855px;top:543px;width:29px;height:4px;background:#48b8f8;"></div>
<div class="a hx" style="left:1855px;top:545px;width:29px;height:3px"></div>
<div class="a hx" style="left:1884px;top:543px;width:21px;height:5px"></div></div>
<div class="a" style="left:893px;top:561px;width:1019px;height:432px;background:#fff;border:1px solid #8c8e94"></div>
<div class="a" style="left:895px;top:563px;width:1015px;height:428px;background:#fff;border:1px solid #828790"></div>
<div class="a" style="left:896px;top:564px;width:1013px;height:22px;background:linear-gradient(#ffffff,#ffffff 45%,#f4f5f7 46%,#f1f2f4);border-bottom:1px solid #d5d5d5"></div>
<div class="hd" style="left:896px;top:564px;width:64px;height:21px;letter-spacing:0.266px;">Time</div>
<div class="hd" style="left:960px;top:564px;width:41px;height:21px;letter-spacing:0.074px;">Count</div>
<div class="hd" style="left:1001px;top:564px;width:909px;height:21px;letter-spacing:-0.439px;">Callee</div>
<div class="bar" style="left:899px;top:590px;width:24px"></div>
<div class="t r lt rw" style="left:915px;top:587px;width:42px">95.62</div>
<div class="t r lt rw" style="left:970px;top:587px;width:27.500px">1</div>
<div class="sq" style="left:1004px;top:590px;background:#32c212;box-shadow:inset 1px 1px 0 rgba(255,255,255,.38),inset -1px -1px 0 rgba(0,0,0,.32)"></div>
<div class="t cf rw" style="left:1020px;top:587px;letter-spacing:0.067px;">do_action &lt;cycle 2&gt; (plugin.php)</div>
<div class="t r lt rw" style="left:915px;top:604px;width:42px">5.52</div>
<div class="t r lt rw" style="left:970px;top:604px;width:27.500px">1</div>
<div class="sq" style="left:1004px;top:607px;background:#84ba42;box-shadow:inset 1px 1px 0 rgba(255,255,255,.38),inset -1px -1px 0 rgba(0,0,0,.32)"></div>
<div class="t cf rw" style="left:1020px;top:604px;letter-spacing:0.139px;">require_once::/var/www/html/awdstack.affiliatewebdesigners.com/wp-load.php (wp-load.php)</div>
<div class="t r lt rw" style="left:915px;top:621px;width:42px">0.92</div>
<div class="t r lt rw" style="left:970px;top:621px;width:27.500px">1</div>
<div class="sq" style="left:1004px;top:624px;background:#aac222;box-shadow:inset 1px 1px 0 rgba(255,255,255,.38),inset -1px -1px 0 rgba(0,0,0,.32)"></div>
<div class="t cf rw" style="left:1020px;top:621px;letter-spacing:0.196px;">require::/var/www/html/awdstack.affiliatewebdesigners.com/wp-admin/menu.php (menu.php)</div>
<div class="t r lt rw" style="left:915px;top:638px;width:42px">0.03</div>
<div class="t r lt rw" style="left:970px;top:638px;width:27.500px">1</div>
<div class="sq" style="left:1004px;top:641px;background:#2a92ca;box-shadow:inset 1px 1px 0 rgba(255,255,255,.38),inset -1px -1px 0 rgba(0,0,0,.32)"></div>
<div class="t cf rw" style="left:1020px;top:638px;letter-spacing:-0.013px;">auth_redirect (pluggable.php)</div>
<div class="t r lt rw" style="left:915px;top:655px;width:42px">0.00</div>
<div class="t r lt rw" style="left:970px;top:655px;width:27.500px">2</div>
<div class="sq" style="left:1004px;top:658px;background:#82c2aa;box-shadow:inset 1px 1px 0 rgba(255,255,255,.38),inset -1px -1px 0 rgba(0,0,0,.32)"></div>
<div class="t cf rw" style="left:1020px;top:655px;letter-spacing:0.105px;">get_option &lt;cycle 2&gt; (option.php)</div>
<div class="t r lt rw" style="left:915px;top:672px;width:42px">0.00</div>
<div class="t r lt rw" style="left:970px;top:672px;width:27.500px">1</div>
<div class="sq" style="left:1004px;top:675px;background:#ca827a;box-shadow:inset 1px 1px 0 rgba(255,255,255,.38),inset -1px -1px 0 rgba(0,0,0,.32)"></div>
<div class="t cf rw" style="left:1020px;top:672px;letter-spacing:0.020px;">wp_raise_memory_limit (functions.php)</div>
<div class="t r lt rw" style="left:915px;top:689px;width:42px">0.00</div>
<div class="t r lt rw" style="left:970px;top:689px;width:27.500px">1</div>
<div class="sq" style="left:1004px;top:692px;background:#c2c232;box-shadow:inset 1px 1px 0 rgba(255,255,255,.38),inset -1px -1px 0 rgba(0,0,0,.32)"></div>
<div class="t cf rw" style="left:1020px;top:689px;letter-spacing:-0.103px;">current_user_can &lt;cycle 2&gt; (capabilities.php)</div>
<div class="t r lt rw" style="left:915px;top:706px;width:42px">0.00</div>
<div class="t r lt rw" style="left:970px;top:706px;width:27.500px">1</div>
<div class="sq" style="left:1004px;top:709px;background:#ca7222;box-shadow:inset 1px 1px 0 rgba(255,255,255,.38),inset -1px -1px 0 rgba(0,0,0,.32)"></div>
<div class="t cf rw" style="left:1020px;top:706px;letter-spacing:-0.087px;">wp_next_scheduled &lt;cycle 2&gt; (cron.php)</div>
<div class="t r lt rw" style="left:915px;top:723px;width:42px">0.00</div>
<div class="t r lt rw" style="left:970px;top:723px;width:27.500px">1</div>
<div class="sq" style="left:1004px;top:726px;background:#82a2ca;box-shadow:inset 1px 1px 0 rgba(255,255,255,.38),inset -1px -1px 0 rgba(0,0,0,.32)"></div>
<div class="t cf rw" style="left:1020px;top:723px;letter-spacing:-0.002px;">plugin_basename (plugin.php)</div>
<div class="t r lt rw" style="left:915px;top:740px;width:42px">0.00</div>
<div class="t r lt rw" style="left:970px;top:740px;width:27.500px">1</div>
<div class="sq" style="left:1004px;top:743px;background:#1a72ca;box-shadow:inset 1px 1px 0 rgba(255,255,255,.38),inset -1px -1px 0 rgba(0,0,0,.32)"></div>
<div class="t cf rw" style="left:1020px;top:740px;letter-spacing:-0.081px;">nocache_headers (functions.php)</div>
<div class="t r lt rw" style="left:915px;top:757px;width:42px">0.00</div>
<div class="t r lt rw" style="left:970px;top:757px;width:27.500px">2</div>
<div class="sq" style="left:1004px;top:760px;background:#ca9232;box-shadow:inset 1px 1px 0 rgba(255,255,255,.38),inset -1px -1px 0 rgba(0,0,0,.32)"></div>
<div class="t cf rw" style="left:1020px;top:757px;letter-spacing:-0.175px;">__ &lt;cycle 2&gt; (l10n.php)</div>
<div class="t r lt rw" style="left:915px;top:774px;width:42px">0.00</div>
<div class="t r lt rw" style="left:970px;top:774px;width:27.500px">1</div>
<div class="sq" style="left:1004px;top:777px;background:#52c272;box-shadow:inset 1px 1px 0 rgba(255,255,255,.38),inset -1px -1px 0 rgba(0,0,0,.32)"></div>
<div class="t cf rw" style="left:1020px;top:774px;letter-spacing:-0.002px;">wp_enqueue_script &lt;cycle 2&gt; (functions.wp-scripts.php)</div>
<div class="t r lt rw" style="left:915px;top:791px;width:42px">0.00</div>
<div class="t r lt rw" style="left:970px;top:791px;width:27.500px">1</div>
<div class="sq" style="left:1004px;top:794px;background:#a2c262;box-shadow:inset 1px 1px 0 rgba(255,255,255,.38),inset -1px -1px 0 rgba(0,0,0,.32)"></div>
<div class="t cf rw" style="left:1020px;top:791px;letter-spacing:0.040px;">wp_unslash (formatting.php)</div>
<div class="t r lt rw" style="left:915px;top:808px;width:42px">0.00</div>
<div class="t r lt rw" style="left:970px;top:808px;width:27.500px">4</div>
<div class="sq" style="left:1004px;top:811px;background:#ca4a32;box-shadow:inset 1px 1px 0 rgba(255,255,255,.38),inset -1px -1px 0 rgba(0,0,0,.32)"></div>
<div class="t cf rw" style="left:1020px;top:808px;letter-spacing:0.056px;">php::define (php:internal)</div>
<div class="t r lt rw" style="left:915px;top:825px;width:42px">0.00</div>
<div class="t r lt rw" style="left:970px;top:825px;width:27.500px">2</div>
<div class="sq" style="left:1004px;top:828px;background:#72c282;box-shadow:inset 1px 1px 0 rgba(255,255,255,.38),inset -1px -1px 0 rgba(0,0,0,.32)"></div>
<div class="t cf rw" style="left:1020px;top:825px;letter-spacing:0.052px;">php::dirname (php:internal)</div>
<div class="t r lt rw" style="left:915px;top:842px;width:42px">0.00</div>
<div class="t r lt rw" style="left:970px;top:842px;width:27.500px">1</div>
<div class="sq" style="left:1004px;top:845px;background:#c2ba92;box-shadow:inset 1px 1px 0 rgba(255,255,255,.38),inset -1px -1px 0 rgba(0,0,0,.32)"></div>
<div class="t cf rw" style="left:1020px;top:842px;letter-spacing:-0.166px;">set_screen_options (misc.php)</div>
<div class="btab" style="left:895px;top:993px;width:45px;height:19px;background:#d0d0d0;"></div>
<div class="t" style="left:904px;top:994.5px;font-size:11px;color:#8a8a8a;letter-spacing:-0.037px;">Parts</div>
<div class="btab" style="left:940px;top:993px;width:62px;height:21px;background:#fff;"></div>
<div class="t" style="left:953.3px;top:995.5px;font-size:11px;letter-spacing:-0.384px;">Callees</div>
<div class="btab" style="left:1002px;top:993px;width:71px;height:19px;"></div>
<div class="t" style="left:1011.2px;top:994.5px;font-size:11px;letter-spacing:-0.328px;">Call Graph</div>
<div class="btab" style="left:1073px;top:993px;width:72px;height:19px;"></div>
<div class="t" style="left:1084.8px;top:994.5px;font-size:11px;letter-spacing:-0.388px;">All Callees</div>
<div class="btab" style="left:1145px;top:993px;width:75px;height:19px;"></div>
<div class="t" style="left:1156.4px;top:994.5px;font-size:11px;letter-spacing:-0.299px;">Caller Map</div>
<div class="btab" style="left:1220px;top:993px;width:88px;height:19px;"></div>
<div class="t" style="left:1230.4px;top:994.5px;font-size:11px;letter-spacing:-0.320px;">Machine Code</div>
</div>
<div class="a" style="left:58px;top:1040px;width:1920px;height:8px;background:linear-gradient(#4a5866 0,#1a2430 1px,#0c141c 3px)"></div>
<div class="a" style="left:1963px;top:1041px;width:14px;height:7px;background:linear-gradient(135deg,#707880,#30383f);border:1px solid #8a949c"></div>
<div class="a" style="left:69px;top:1041px;width:30px;height:14px;border-radius:15px 15px 0 0;background:#a8c4dc;border:1px solid #e0eef8"></div>
<div class="a" style="left:118px;top:1041px;width:50px;height:7px;background:linear-gradient(#6a747c,#4a545e);border-radius:2px 2px 0 0;border:1px solid #8a949c;border-bottom:none"></div>
<div class="a" style="left:242px;top:1041px;width:58px;height:7px;background:linear-gradient(#6e7880,#4a545e);border-radius:2px 2px 0 0;border:1px solid #8a949c;border-bottom:none"></div>
<div class="a" style="left:428px;top:1041px;width:53px;height:7px;background:linear-gradient(#66727c,#4a545e);border-radius:2px 2px 0 0;border:1px solid #8a949c;border-bottom:none"></div>
<div class="a" style="left:490px;top:1041px;width:58px;height:7px;background:linear-gradient(#727c84,#4a545e);border-radius:2px 2px 0 0;border:1px solid #8a949c;border-bottom:none"></div>
<div class="a" style="left:552px;top:1041px;width:57px;height:7px;background:linear-gradient(#6e7880,#4a545e);border-radius:2px 2px 0 0;border:1px solid #8a949c;border-bottom:none"></div>
<div class="a" style="left:612px;top:1041px;width:59px;height:7px;background:linear-gradient(#6a747c,#4a545e);border-radius:2px 2px 0 0;border:1px solid #8a949c;border-bottom:none"></div>
<div class="a" style="left:676px;top:1041px;width:57px;height:7px;background:linear-gradient(#66727c,#4a545e);border-radius:2px 2px 0 0;border:1px solid #8a949c;border-bottom:none"></div>
<div class="a" style="left:738px;top:1041px;width:58px;height:7px;background:linear-gradient(#6e7880,#4a545e);border-radius:2px 2px 0 0;border:1px solid #8a949c;border-bottom:none"></div>
<div class="a" style="left:800px;top:1041px;width:58px;height:7px;background:linear-gradient(#6a747c,#4a545e);border-radius:2px 2px 0 0;border:1px solid #8a949c;border-bottom:none"></div>
<div class="a" style="left:863px;top:1041px;width:58px;height:7px;background:linear-gradient(#727c84,#4a545e);border-radius:2px 2px 0 0;border:1px solid #8a949c;border-bottom:none"></div>
<div class="a" style="left:925px;top:1041px;width:58px;height:7px;background:linear-gradient(#3c4650,#4a545e);border-radius:2px 2px 0 0;border:1px solid #8a949c;border-bottom:none"></div>
<div class="a" style="left:136px;top:1044px;width:14px;height:4px;background:#e0b040;border-radius:3px 3px 0 0"></div>
<div class="a" style="left:262px;top:1044px;width:16px;height:4px;background:#e03020;border-radius:3px 3px 0 0"></div>
<div class="a" style="left:328px;top:1044px;width:16px;height:4px;background:#e8c020;border-radius:3px 3px 0 0"></div>
<div class="a" style="left:386px;top:1044px;width:16px;height:4px;background:#e01020;border-radius:3px 3px 0 0"></div>
<div class="a" style="left:448px;top:1044px;width:12px;height:4px;background:#f0f0ff;border-radius:3px 3px 0 0"></div>
<div class="a" style="left:512px;top:1044px;width:14px;height:4px;background:#c0c8d0;border-radius:3px 3px 0 0"></div>
<div class="a" style="left:572px;top:1044px;width:14px;height:4px;background:#e0e0e0;border-radius:3px 3px 0 0"></div>
<div class="a" style="left:634px;top:1044px;width:12px;height:4px;background:#2080e0;border-radius:3px 3px 0 0"></div>
<div class="a" style="left:694px;top:1044px;width:18px;height:4px;background:#d01020;border-radius:3px 3px 0 0"></div>
<div class="a" style="left:760px;top:1044px;width:14px;height:4px;background:#e8eef8;border-radius:3px 3px 0 0"></div>
<div class="a" style="left:822px;top:1044px;width:16px;height:4px;background:#3088e0;border-radius:3px 3px 0 0"></div>
<div class="a" style="left:884px;top:1044px;width:18px;height:4px;background:#f06030;border-radius:3px 3px 0 0"></div>
<svg class="a" style="left:0;top:0;pointer-events:none" width="1978" height="1048" viewBox="0 0 1978 1048" fill="none" stroke="#1010ee" stroke-width="1.700" stroke-linecap="round" stroke-linejoin="round"><path d="M32.8 141.5C31.1 141.7 25.3 141.9 22.9 142.6C20.5 143.3 20.0 145.0 18.5 145.6C17.0 146.2 15.4 145.6 13.7 146.4C12.0 147.2 9.4 149.2 8.4 150.6C7.4 151.9 8.2 153.3 7.6 154.5C7.0 155.7 5.6 155.2 4.6 157.5C3.6 159.8 2.1 164.1 1.5 168.2C0.9 172.3 0.3 178.3 0.8 181.9C1.3 185.5 2.4 187.1 4.6 189.5C6.8 191.9 10.1 194.8 13.7 196.4C17.3 198.0 22.2 199.0 26.0 199.1C29.8 199.2 33.3 198.4 36.6 197.2C39.9 196.0 43.5 194.1 45.8 191.8C48.1 189.5 49.1 186.6 50.4 183.4C51.7 180.2 52.8 176.2 53.4 172.7C54.0 169.1 54.3 165.4 53.8 162.1C53.3 158.8 52.1 155.6 50.4 152.9C48.7 150.2 45.0 147.6 43.5 146.0C42.0 144.4 42.9 144.2 41.5 143.5C40.1 142.8 36.2 141.8 35.1 141.5"/><path d="M1139.6 42.6C1140.0 41.6 1139.1 37.9 1142.0 36.5C1144.9 35.1 1152.3 34.2 1157.2 34.5C1162.1 34.8 1166.7 35.2 1171.5 38.4C1176.3 41.6 1182.2 48.2 1185.9 53.6C1189.7 59.0 1192.8 64.4 1194.0 70.8C1195.2 77.2 1195.2 86.1 1193.0 91.8C1190.8 97.5 1186.3 102.0 1181.1 105.1C1175.9 108.2 1168.4 109.9 1162.0 110.4C1155.6 110.9 1148.6 109.3 1142.9 108.0C1137.2 106.7 1130.6 105.8 1127.7 102.3C1124.8 98.8 1125.3 92.7 1125.8 87.0C1126.3 81.3 1129.4 71.7 1130.5 67.9C1131.6 64.1 1130.3 66.0 1132.4 64.1C1134.5 62.2 1138.8 58.0 1142.9 56.5C1147.0 55.0 1152.4 54.8 1157.2 55.0C1162.0 55.2 1169.5 57.4 1172.0 57.9"/><path d="M1299.7 565.7C1297.9 566.0 1291.8 566.2 1289.0 567.2C1286.2 568.2 1284.6 569.0 1282.9 571.4C1281.2 573.8 1280.0 578.1 1279.1 581.7C1278.1 585.3 1277.2 589.5 1277.2 593.2C1277.2 596.9 1278.3 601.4 1279.1 603.9C1279.9 606.4 1279.5 607.3 1282.1 608.4C1284.6 609.5 1289.2 610.2 1294.4 610.3C1299.6 610.4 1308.8 610.0 1313.4 608.8C1318.0 607.6 1319.9 605.5 1321.8 603.1C1323.7 600.8 1324.2 597.6 1324.9 594.7C1325.7 591.8 1326.3 588.9 1326.3 585.5C1326.3 582.1 1325.4 576.8 1324.9 574.1C1324.4 571.4 1324.6 570.4 1323.4 569.1C1322.2 567.8 1320.3 566.8 1318.0 566.1C1315.7 565.4 1312.6 565.0 1309.6 564.9C1306.5 564.8 1301.3 565.2 1299.7 565.3"/></svg><div id="d1" style="position:absolute;color:#1010ee;line-height:1;white-space:nowrap;transform-origin:0 0;left:25px;top:144.5px;font-family:'Liberation Sans',sans-serif;font-size:53px;clip-path:inset(0 0 12.900px 0);transform:rotate(5deg) scaleX(.4)">1</div><div id="d2" style="position:absolute;color:#1010ee;line-height:1;white-space:nowrap;transform-origin:0 0;left:1142.5px;top:63px;font-family:'DejaVu Sans',sans-serif;font-weight:200;font-size:40px;transform:scaleX(1.6)">2</div><div id="d3" style="position:absolute;color:#1010ee;line-height:1;white-space:nowrap;transform-origin:0 0;left:1286.5px;top:567px;font-family:'DejaVu Sans',sans-serif;font-weight:200;font-size:37.500px;transform:scaleX(1.43)">3</div>
</body></html>
